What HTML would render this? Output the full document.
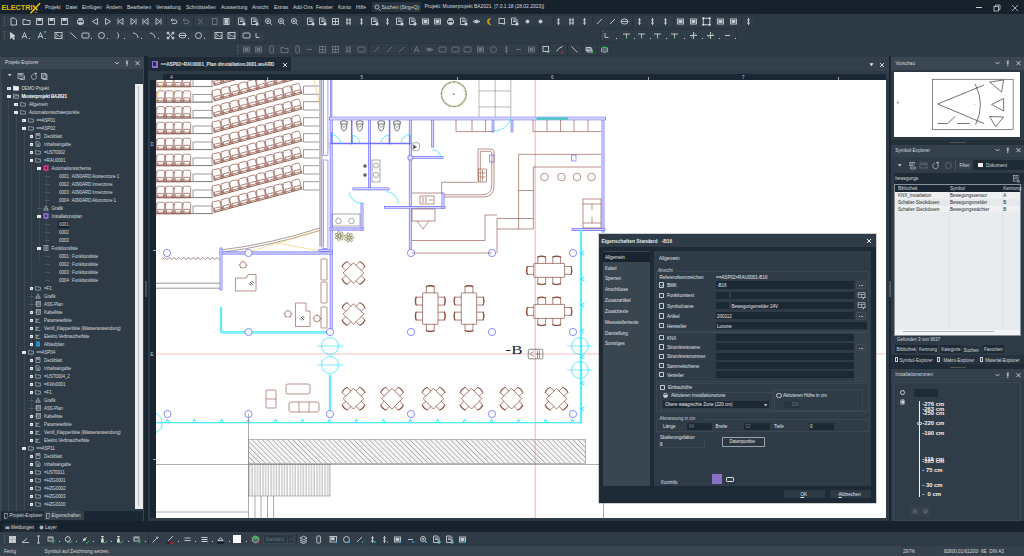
<!DOCTYPE html>
<html><head><meta charset="utf-8"><style>*{box-sizing:border-box;margin:0;padding:0}
html,body{width:1024px;height:556px;overflow:hidden;background:#17222d;font-family:"Liberation Sans",sans-serif;color:#d3d7db}
.a{position:absolute}
.t{position:absolute;white-space:nowrap;line-height:1}
b{font-weight:bold}
</style></head><body>
<div class="a" style="left:0px;top:0px;width:1024px;height:14px;background:#16212c;"></div>
<svg class="a" style="left:0;top:0" width="48" height="15" viewBox="0 0 48 15"><text x="1.5" y="10.3" font-family="Liberation Sans" font-weight="bold" font-size="6.6" fill="#d9bd08" textLength="31" lengthAdjust="spacingAndGlyphs">ELECTRI</text><path d="M30.5 13.2L40 3.2" stroke="#e8c800" stroke-width="1.5"/><path d="M33 5.2l4.5 5" stroke="#e8c800" stroke-width="1.3"/><rect x="34.5" y="12" width="3" height="0.8" fill="#a08a00"/></svg>
<div class="t" style="left:45px;top:4.60px;font-size:5.0px;color:#d6dade;">Projekt</div>
<div class="t" style="left:65.8px;top:4.60px;font-size:5.0px;color:#d6dade;">Datei</div>
<div class="t" style="left:82px;top:4.60px;font-size:5.0px;color:#d6dade;">Einfügen</div>
<div class="t" style="left:106px;top:4.60px;font-size:5.0px;color:#d6dade;">Ändern</div>
<div class="t" style="left:127px;top:4.60px;font-size:5.0px;color:#d6dade;">Bearbeiten</div>
<div class="t" style="left:156px;top:4.60px;font-size:5.0px;color:#d6dade;">Verwaltung</div>
<div class="t" style="left:186px;top:4.60px;font-size:5.0px;color:#d6dade;">Schnittstellen</div>
<div class="t" style="left:221px;top:4.60px;font-size:5.0px;color:#d6dade;">Auswertung</div>
<div class="t" style="left:252px;top:4.60px;font-size:5.0px;color:#d6dade;">Ansicht</div>
<div class="t" style="left:274px;top:4.60px;font-size:5.0px;color:#d6dade;">Extras</div>
<div class="t" style="left:293px;top:4.60px;font-size:5.0px;color:#d6dade;">Add-Ons</div>
<div class="t" style="left:316px;top:4.60px;font-size:5.0px;color:#d6dade;">Fenster</div>
<div class="t" style="left:338px;top:4.60px;font-size:5.0px;color:#d6dade;">Konto</div>
<div class="t" style="left:356px;top:4.60px;font-size:5.0px;color:#d6dade;">Hilfe</div>
<div class="a" style="left:372px;top:2px;width:49px;height:10px;background:#27333f;border-radius:1px;"></div>
<svg class="a" style="left:374px;top:4px" width="7" height="7" viewBox="0 0 7 7" fill="none" stroke="#c9ced3" stroke-width="0.8"><circle cx="3" cy="3" r="2"/><path d="M4.5 4.5l2 2"/></svg>
<div class="t" style="left:381.5px;top:4.60px;font-size:5.0px;color:#d6dade;">Suchen (Strg+Q)</div>
<div class="t" style="left:424.5px;top:4.63px;font-size:4.95px;color:#d6dade;">Projekt: Musterprojekt BA2021&nbsp; [7.0.1.18 (28.02.2023)]</div>
<div class="a" style="left:976px;top:6.8px;width:6px;height:0.8px;background:#c9ced3;"></div>
<svg class="a" style="left:993px;top:3.5px" width="8" height="8" viewBox="0 0 8 8" fill="none" stroke="#c9ced3" stroke-width="0.8"><rect x="1" y="2.5" width="4.5" height="4.5"/><path d="M2.5 2.5v-1.5h4.5v4.5h-1.5"/></svg>
<svg class="a" style="left:1011px;top:3.5px" width="8" height="8" viewBox="0 0 8 8" fill="none" stroke="#c9ced3" stroke-width="0.8"><path d="M1 1l6 6M7 1l-6 6"/></svg>
<div class="a" style="left:0px;top:14px;width:1024px;height:42px;background:#2d3a46;"></div>
<div class="a" style="left:0px;top:14.5px;width:756px;height:13.5px;background:#303d49;border:0.5px solid #28343f;"></div>
<div class="a" style="left:0px;top:28.5px;width:266px;height:13.5px;background:#303d49;border:0.5px solid #28343f;"></div>
<div class="a" style="left:600px;top:28.5px;width:137px;height:13.5px;background:#303d49;border:0.5px solid #28343f;"></div>
<div class="a" style="left:235px;top:42.5px;width:375.5px;height:13.5px;background:#303d49;border:0.5px solid #28343f;"></div>
<div class="a" style="left:4px;top:16.6px;width:0.8px;height:0.8px;background:#5a646d;"></div>
<div class="a" style="left:4px;top:18.6px;width:0.8px;height:0.8px;background:#5a646d;"></div>
<div class="a" style="left:4px;top:20.6px;width:0.8px;height:0.8px;background:#5a646d;"></div>
<div class="a" style="left:4px;top:22.6px;width:0.8px;height:0.8px;background:#5a646d;"></div>
<div class="a" style="left:4px;top:24.6px;width:0.8px;height:0.8px;background:#5a646d;"></div>
<div class="a" style="left:4px;top:31.1px;width:0.8px;height:0.8px;background:#5a646d;"></div>
<div class="a" style="left:4px;top:33.1px;width:0.8px;height:0.8px;background:#5a646d;"></div>
<div class="a" style="left:4px;top:35.1px;width:0.8px;height:0.8px;background:#5a646d;"></div>
<div class="a" style="left:4px;top:37.1px;width:0.8px;height:0.8px;background:#5a646d;"></div>
<div class="a" style="left:4px;top:39.1px;width:0.8px;height:0.8px;background:#5a646d;"></div>
<div class="a" style="left:602px;top:31.1px;width:0.8px;height:0.8px;background:#5a646d;"></div>
<div class="a" style="left:602px;top:33.1px;width:0.8px;height:0.8px;background:#5a646d;"></div>
<div class="a" style="left:602px;top:35.1px;width:0.8px;height:0.8px;background:#5a646d;"></div>
<div class="a" style="left:602px;top:37.1px;width:0.8px;height:0.8px;background:#5a646d;"></div>
<div class="a" style="left:602px;top:39.1px;width:0.8px;height:0.8px;background:#5a646d;"></div>
<div class="a" style="left:237px;top:45.1px;width:0.8px;height:0.8px;background:#5a646d;"></div>
<div class="a" style="left:237px;top:47.1px;width:0.8px;height:0.8px;background:#5a646d;"></div>
<div class="a" style="left:237px;top:49.1px;width:0.8px;height:0.8px;background:#5a646d;"></div>
<div class="a" style="left:237px;top:51.1px;width:0.8px;height:0.8px;background:#5a646d;"></div>
<div class="a" style="left:237px;top:53.1px;width:0.8px;height:0.8px;background:#5a646d;"></div>
<svg class="a" style="left:9.0px;top:16.7px" width="9" height="9" viewBox="0 0 9 9" fill="none" stroke="#c9ced3" stroke-width="0.9"><path d="M2 1h3.5l2 2v5h-5.5z"/></svg>
<svg class="a" style="left:22.0px;top:16.7px" width="9" height="9" viewBox="0 0 9 9" fill="none" stroke="#c9ced3" stroke-width="0.9"><path d="M1 2.5h2.5l1 1h3.5v4h-7z"/></svg>
<svg class="a" style="left:34.5px;top:16.7px" width="9" height="9" viewBox="0 0 9 9" fill="none" stroke="#c9ced3" stroke-width="0.9"><rect x="1.5" y="1.5" width="6" height="6"/><rect x="3" y="1.5" width="3" height="2" fill="#c9ced3"/></svg>
<svg class="a" style="left:47.0px;top:16.7px" width="9" height="9" viewBox="0 0 9 9" fill="none" stroke="#c9ced3" stroke-width="0.9"><rect x="1.5" y="1.5" width="6" height="6"/><rect x="3" y="1.5" width="3" height="2" fill="#c9ced3"/></svg>
<svg class="a" style="left:60.0px;top:16.7px" width="9" height="9" viewBox="0 0 9 9" fill="none" stroke="#c9ced3" stroke-width="0.9"><rect x="1.5" y="1.5" width="6" height="6"/><rect x="3" y="1.5" width="3" height="2" fill="#c9ced3"/></svg>
<svg class="a" style="left:75.5px;top:16.7px" width="9" height="9" viewBox="0 0 9 9" fill="none" stroke="#c9ced3" stroke-width="0.9"><rect x="1.5" y="3" width="6" height="3.5" rx="0.5"/><rect x="3" y="1.5" width="3" height="1.5"/><rect x="3" y="5.5" width="3" height="2"/></svg>
<svg class="a" style="left:90.5px;top:16.7px" width="9" height="9" viewBox="0 0 9 9" fill="none" stroke="#c9ced3" stroke-width="0.9"><path d="M6.5 1.5v6l-5-3z"/></svg>
<svg class="a" style="left:102.5px;top:16.7px" width="9" height="9" viewBox="0 0 9 9" fill="none" stroke="#c9ced3" stroke-width="0.9"><path d="M2.5 1.5v6l5-3z"/></svg>
<svg class="a" style="left:116.0px;top:16.7px" width="9" height="9" viewBox="0 0 9 9" fill="none" stroke="#c9ced3" stroke-width="0.9"><path d="M7 1.5v6l-4-3z M2 1.5v6"/></svg>
<svg class="a" style="left:128.5px;top:16.7px" width="9" height="9" viewBox="0 0 9 9" fill="none" stroke="#c9ced3" stroke-width="0.9"><path d="M2 1.5v6l4-3z M7 1.5v6"/></svg>
<svg class="a" style="left:141.0px;top:16.7px" width="9" height="9" viewBox="0 0 9 9" fill="none" stroke="#c9ced3" stroke-width="0.9"><path d="M7 1.5v6l-4-3z M2 1.5v6"/></svg>
<svg class="a" style="left:153.5px;top:16.7px" width="9" height="9" viewBox="0 0 9 9" fill="none" stroke="#c9ced3" stroke-width="0.9"><path d="M2 1.5v6l4-3z M7 1.5v6"/></svg>
<svg class="a" style="left:168.5px;top:16.7px" width="9" height="9" viewBox="0 0 9 9" fill="none" stroke="#c9ced3" stroke-width="0.9"><path d="M2 3h4a1.8 1.8 0 010 3.6h-3 M2 3l1.5-1.5 M2 3l1.5 1.5"/></svg>
<svg class="a" style="left:181.0px;top:16.7px" width="9" height="9" viewBox="0 0 9 9" fill="none" stroke="#6d7780" stroke-width="0.9"><path d="M2 3h4a1.8 1.8 0 010 3.6h-3 M2 3l1.5-1.5 M2 3l1.5 1.5"/></svg>
<svg class="a" style="left:196.0px;top:16.7px" width="9" height="9" viewBox="0 0 9 9" fill="none" stroke="#6d7780" stroke-width="0.9"><path d="M2 1.5l5 6 M7 1.5l-5 6"/></svg>
<svg class="a" style="left:209.5px;top:16.7px" width="9" height="9" viewBox="0 0 9 9" fill="none" stroke="#6d7780" stroke-width="0.9"><rect x="2.5" y="1.5" width="4.5" height="6"/></svg>
<svg class="a" style="left:221.5px;top:16.7px" width="9" height="9" viewBox="0 0 9 9" fill="none" stroke="#c9ced3" stroke-width="0.9"><rect x="2" y="1.5" width="5" height="6"/><rect x="3.3" y="2.8" width="2.4" height="3.4" fill="#c9ced3"/></svg>
<svg class="a" style="left:237.0px;top:16.7px" width="9" height="9" viewBox="0 0 9 9" fill="none" stroke="#c9ced3" stroke-width="0.9"><path d="M1.5 1h4l1.5 1.5v5h-5.5z M3 3h3 M3 4.5h3"/><circle cx="7" cy="7" r="1.2" fill="#c9ced3"/></svg>
<svg class="a" style="left:249.5px;top:16.7px" width="9" height="9" viewBox="0 0 9 9" fill="none" stroke="#c9ced3" stroke-width="0.9"><path d="M1.5 1h4l1.5 1.5v5h-5.5z M3 3h3 M3 4.5h3"/><circle cx="7" cy="7" r="1.2" fill="#c9ced3"/></svg>
<svg class="a" style="left:264.0px;top:16.7px" width="9" height="9" viewBox="0 0 9 9" fill="none" stroke="#c9ced3" stroke-width="0.9"><circle cx="4" cy="4" r="2.5"/><path d="M5.8 5.8l2 2 M2.8 4h2.4 M4 2.8v2.4"/></svg>
<svg class="a" style="left:277.0px;top:16.7px" width="9" height="9" viewBox="0 0 9 9" fill="none" stroke="#c9ced3" stroke-width="0.9"><circle cx="4" cy="4" r="2.5"/><path d="M5.8 5.8l2 2 M2.8 4h2.4 M4 2.8v2.4"/></svg>
<svg class="a" style="left:290.0px;top:16.7px" width="9" height="9" viewBox="0 0 9 9" fill="none" stroke="#c9ced3" stroke-width="0.9"><circle cx="4" cy="4" r="2.5"/><path d="M5.8 5.8l2 2 M2.8 4h2.4 M4 2.8v2.4"/></svg>
<svg class="a" style="left:305.5px;top:16.7px" width="9" height="9" viewBox="0 0 9 9" fill="none" stroke="#c9ced3" stroke-width="0.9"><path d="M1.5 1h4l1.5 1.5v5h-5.5z M3 3h3 M3 4.5h3"/><circle cx="7" cy="7" r="1.2" fill="#c9ced3"/></svg>
<svg class="a" style="left:318.0px;top:16.7px" width="9" height="9" viewBox="0 0 9 9" fill="none" stroke="#c9ced3" stroke-width="0.9"><path d="M1.5 1h4l1.5 1.5v5h-5.5z M3 3h3 M3 4.5h3"/><circle cx="7" cy="7" r="1.2" fill="#c9ced3"/></svg>
<svg class="a" style="left:331.0px;top:16.7px" width="9" height="9" viewBox="0 0 9 9" fill="none" stroke="#c9ced3" stroke-width="0.9"><rect x="1.5" y="1.5" width="6" height="6"/><path d="M1.5 4.5h6 M4.5 1.5v6"/></svg>
<svg class="a" style="left:344.0px;top:16.7px" width="9" height="9" viewBox="0 0 9 9" fill="none" stroke="#c9ced3" stroke-width="0.9"><path d="M3 1v7 M6 1v7 M2 3h5 M2 6h5"/></svg>
<svg class="a" style="left:356.5px;top:16.7px" width="9" height="9" viewBox="0 0 9 9" fill="none" stroke="#c9ced3" stroke-width="0.9"><path d="M4.5 1v7 M3 3h3 M3 6h3"/></svg>
<svg class="a" style="left:369.5px;top:16.7px" width="9" height="9" viewBox="0 0 9 9" fill="none" stroke="#c9ced3" stroke-width="0.9"><path d="M1.5 1h4l1.5 1.5v5h-5.5z M3 3h3 M3 4.5h3"/><circle cx="7" cy="7" r="1.2" fill="#c9ced3"/></svg>
<svg class="a" style="left:382.5px;top:16.7px" width="9" height="9" viewBox="0 0 9 9" fill="none" stroke="#c9ced3" stroke-width="0.9"><path d="M4.5 1v7 M3 3h3 M3 6h3"/></svg>
<svg class="a" style="left:395.0px;top:16.7px" width="9" height="9" viewBox="0 0 9 9" fill="none" stroke="#c9ced3" stroke-width="0.9"><path d="M1.5 1h4l1.5 1.5v5h-5.5z M3 3h3 M3 4.5h3"/><circle cx="7" cy="7" r="1.2" fill="#c9ced3"/></svg>
<svg class="a" style="left:407.5px;top:16.7px" width="9" height="9" viewBox="0 0 9 9" fill="none" stroke="#c9ced3" stroke-width="0.9"><path d="M1.5 1h4l1.5 1.5v5h-5.5z M3 3h3 M3 4.5h3"/><circle cx="7" cy="7" r="1.2" fill="#c9ced3"/></svg>
<svg class="a" style="left:420.5px;top:16.7px" width="9" height="9" viewBox="0 0 9 9" fill="none" stroke="#c9ced3" stroke-width="0.9"><rect x="1.5" y="2" width="6" height="5"/><rect x="3" y="3.5" width="3" height="2" fill="#c9ced3"/></svg>
<svg class="a" style="left:433.0px;top:16.7px" width="9" height="9" viewBox="0 0 9 9" fill="none" stroke="#c9ced3" stroke-width="0.9"><rect x="1.5" y="2" width="6" height="5"/><rect x="3" y="3.5" width="3" height="2" fill="#c9ced3"/></svg>
<svg class="a" style="left:446.0px;top:16.7px" width="9" height="9" viewBox="0 0 9 9" fill="none" stroke="#c9ced3" stroke-width="0.9"><rect x="1.5" y="3" width="6" height="3.5" rx="0.5"/><rect x="3" y="1.5" width="3" height="1.5"/><rect x="3" y="5.5" width="3" height="2"/></svg>
<svg class="a" style="left:459.0px;top:16.7px" width="9" height="9" viewBox="0 0 9 9" fill="none" stroke="#c9ced3" stroke-width="0.9"><path d="M1.5 1h4l1.5 1.5v5h-5.5z M3 3h3 M3 4.5h3"/><circle cx="7" cy="7" r="1.2" fill="#c9ced3"/></svg>
<svg class="a" style="left:471.5px;top:16.7px" width="9" height="9" viewBox="0 0 9 9" fill="none" stroke="#c9ced3" stroke-width="0.9"><path d="M1 4.5q3.5-3 7 0q-3.5 3-7 0z"/><circle cx="4.5" cy="4.5" r="1" fill="#c9ced3"/></svg>
<svg class="a" style="left:484.5px;top:16.7px" width="9" height="9" viewBox="0 0 9 9" fill="none" stroke="#c8a000" stroke-width="0.9"><path d="M5.5 1.5a3 3 0 100 6a3.5 3.5 0 010-6z" fill="#c8a000"/></svg>
<svg class="a" style="left:497.5px;top:16.7px" width="9" height="9" viewBox="0 0 9 9" fill="none" stroke="#c9ced3" stroke-width="0.9"><rect x="1" y="1.5" width="5.5" height="5"/><path d="M5 7l1.2 1 2-2.5" stroke="#3bb54a"/></svg>
<svg class="a" style="left:510.0px;top:16.7px" width="9" height="9" viewBox="0 0 9 9" fill="none" stroke="#c9ced3" stroke-width="0.9"><path d="M1.5 1h4l1.5 1.5v5h-5.5z M3 3h3 M3 4.5h3"/><circle cx="7" cy="7" r="1.2" fill="#c9ced3"/></svg>
<svg class="a" style="left:523.0px;top:16.7px" width="9" height="9" viewBox="0 0 9 9" fill="none" stroke="#c9ced3" stroke-width="0.9"><circle cx="4.5" cy="4.5" r="1.5" fill="#c9ced3"/></svg>
<svg class="a" style="left:535.5px;top:16.7px" width="9" height="9" viewBox="0 0 9 9" fill="none" stroke="#c9ced3" stroke-width="0.9"><circle cx="4.5" cy="4.5" r="1.5" fill="#c9ced3"/></svg>
<svg class="a" style="left:554.0px;top:16.7px" width="9" height="9" viewBox="0 0 9 9" fill="none" stroke="#c9ced3" stroke-width="0.9"><path d="M4.5 1v7 M3 3h3 M3 6h3"/></svg>
<svg class="a" style="left:567.0px;top:16.7px" width="9" height="9" viewBox="0 0 9 9" fill="none" stroke="#c9ced3" stroke-width="0.9"><path d="M3 1v7 M6 1v7 M2 3h5 M2 6h5"/></svg>
<svg class="a" style="left:579.5px;top:16.7px" width="9" height="9" viewBox="0 0 9 9" fill="none" stroke="#c9ced3" stroke-width="0.9"><path d="M4.5 1v7 M3 3h3 M3 6h3"/></svg>
<svg class="a" style="left:594.5px;top:16.7px" width="9" height="9" viewBox="0 0 9 9" fill="none" stroke="#c9ced3" stroke-width="0.9"><path d="M2 7l5-5"/></svg>
<svg class="a" style="left:607.5px;top:16.7px" width="9" height="9" viewBox="0 0 9 9" fill="none" stroke="#c9ced3" stroke-width="0.9"><path d="M2 7l5-5"/></svg>
<svg class="a" style="left:620.0px;top:16.7px" width="9" height="9" viewBox="0 0 9 9" fill="none" stroke="#c9ced3" stroke-width="0.9"><ellipse cx="4.5" cy="4.5" rx="3.5" ry="2.5"/><path d="M1 4.5h7"/></svg>
<svg class="a" style="left:634.5px;top:16.7px" width="9" height="9" viewBox="0 0 9 9" fill="none" stroke="#c9ced3" stroke-width="0.9"><path d="M4.5 1v7 M3 3h3 M3 6h3"/></svg>
<svg class="a" style="left:647.5px;top:16.7px" width="9" height="9" viewBox="0 0 9 9" fill="none" stroke="#c9ced3" stroke-width="0.9"><path d="M4.5 1v7 M3 3h3 M3 6h3"/></svg>
<svg class="a" style="left:660.5px;top:16.7px" width="9" height="9" viewBox="0 0 9 9" fill="none" stroke="#c9ced3" stroke-width="0.9"><path d="M4.5 1v7 M3 3h3 M3 6h3"/></svg>
<svg class="a" style="left:675.5px;top:16.7px" width="9" height="9" viewBox="0 0 9 9" fill="none" stroke="#c9ced3" stroke-width="0.9"><rect x="1.5" y="2" width="6" height="5"/><rect x="3" y="3.5" width="3" height="2" fill="#c9ced3"/></svg>
<svg class="a" style="left:688.5px;top:16.7px" width="9" height="9" viewBox="0 0 9 9" fill="none" stroke="#c9ced3" stroke-width="0.9"><rect x="1.5" y="2" width="6" height="5"/><rect x="3" y="3.5" width="3" height="2" fill="#c9ced3"/></svg>
<svg class="a" style="left:701.5px;top:16.7px" width="9" height="9" viewBox="0 0 9 9" fill="none" stroke="#c9ced3" stroke-width="0.9"><rect x="1.2" y="1.2" width="6.6" height="6.6" stroke="#e8ebee" stroke-width="0.8"/><rect x="0.5" y="0.5" width="1.6" height="1.6" fill="#fff" stroke="none"/><rect x="6.9" y="0.5" width="1.6" height="1.6" fill="#fff" stroke="none"/><rect x="0.5" y="6.9" width="1.6" height="1.6" fill="#fff" stroke="none"/><rect x="6.9" y="6.9" width="1.6" height="1.6" fill="#fff" stroke="none"/></svg>
<svg class="a" style="left:716.0px;top:16.7px" width="9" height="9" viewBox="0 0 9 9" fill="none" stroke="#c9ced3" stroke-width="0.9"><rect x="1.5" y="2" width="6" height="5"/><rect x="3" y="3.5" width="3" height="2" fill="#c9ced3"/></svg>
<svg class="a" style="left:728.5px;top:16.7px" width="9" height="9" viewBox="0 0 9 9" fill="none" stroke="#c9ced3" stroke-width="0.9"><rect x="1.5" y="2" width="6" height="5"/><rect x="3" y="3.5" width="3" height="2" fill="#c9ced3"/></svg>
<svg class="a" style="left:743.5px;top:16.7px" width="9" height="9" viewBox="0 0 9 9" fill="none" stroke="#c9ced3" stroke-width="0.9"><path d="M4.5 1v7 M3 3h3 M3 6h3"/></svg>
<div class="a" style="left:74px;top:16px;width:1px;height:10px;background:#24303c;"></div>
<div class="a" style="left:88px;top:16px;width:1px;height:10px;background:#24303c;"></div>
<div class="a" style="left:166px;top:16px;width:1px;height:10px;background:#24303c;"></div>
<div class="a" style="left:193px;top:16px;width:1px;height:10px;background:#24303c;"></div>
<div class="a" style="left:234px;top:16px;width:1px;height:10px;background:#24303c;"></div>
<div class="a" style="left:262px;top:16px;width:1px;height:10px;background:#24303c;"></div>
<div class="a" style="left:302px;top:16px;width:1px;height:10px;background:#24303c;"></div>
<div class="a" style="left:553px;top:16px;width:1px;height:10px;background:#24303c;"></div>
<div class="a" style="left:592px;top:16px;width:1px;height:10px;background:#24303c;"></div>
<div class="a" style="left:632px;top:16px;width:1px;height:10px;background:#24303c;"></div>
<div class="a" style="left:673px;top:16px;width:1px;height:10px;background:#24303c;"></div>
<div class="a" style="left:713px;top:16px;width:1px;height:10px;background:#24303c;"></div>
<div class="a" style="left:741px;top:16px;width:1px;height:10px;background:#24303c;"></div>
<svg class="a" style="left:7.5px;top:31.299999999999997px" width="9" height="9" viewBox="0 0 9 9" fill="none" stroke="#c9ced3" stroke-width="0.9"><path d="M2.5 1.5l4.5 3.5-2 .5 1.5 2.5-1 .5-1.5-2.5-1.5 1.5z" fill="#c9ced3"/></svg>
<svg class="a" style="left:19.5px;top:31.299999999999997px" width="9" height="9" viewBox="0 0 9 9" fill="none" stroke="#c9ced3" stroke-width="0.9"><path d="M2 7.5l2.5-6 2.5 6 M3 5.5h3"/></svg>
<svg class="a" style="left:36.0px;top:31.299999999999997px" width="9" height="9" viewBox="0 0 9 9" fill="none" stroke="#c9ced3" stroke-width="0.9"><path d="M2 7.5l2.5-6 2.5 6 M3 5.5h3"/></svg>
<svg class="a" style="left:53.5px;top:31.299999999999997px" width="9" height="9" viewBox="0 0 9 9" fill="none" stroke="#c9ced3" stroke-width="0.9"><rect x="1" y="1.5" width="7" height="6"/><path d="M2 6.5l2-2.5 1.5 1.5 1-1 1 2" stroke-width="0.7"/><rect x="2" y="2.5" width="1.3" height="1.3" fill="#c9ced3" stroke="none"/></svg>
<svg class="a" style="left:68.5px;top:31.299999999999997px" width="9" height="9" viewBox="0 0 9 9" fill="none" stroke="#c9ced3" stroke-width="0.9"><path d="M1.5 1.5l6 6"/></svg>
<svg class="a" style="left:80.5px;top:31.299999999999997px" width="9" height="9" viewBox="0 0 9 9" fill="none" stroke="#c9ced3" stroke-width="0.9"><rect x="1" y="2" width="7" height="5" rx="1"/></svg>
<svg class="a" style="left:97.0px;top:31.299999999999997px" width="9" height="9" viewBox="0 0 9 9" fill="none" stroke="#c9ced3" stroke-width="0.9"><circle cx="4.5" cy="4.5" r="3"/></svg>
<svg class="a" style="left:114.0px;top:31.299999999999997px" width="9" height="9" viewBox="0 0 9 9" fill="none" stroke="#c9ced3" stroke-width="0.9"><path d="M3 1.5a3.5 3.5 0 010 6"/></svg>
<svg class="a" style="left:130.5px;top:31.299999999999997px" width="9" height="9" viewBox="0 0 9 9" fill="none" stroke="#c9ced3" stroke-width="0.9"><path d="M2 2a5 5 0 015 5"/></svg>
<svg class="a" style="left:147.5px;top:31.299999999999997px" width="9" height="9" viewBox="0 0 9 9" fill="none" stroke="#c9ced3" stroke-width="0.9"><path d="M2 2a5 5 0 015 5"/></svg>
<svg class="a" style="left:165.5px;top:31.299999999999997px" width="9" height="9" viewBox="0 0 9 9" fill="none" stroke="#c9ced3" stroke-width="0.9"><path d="M2 2l5 5 M7 2l-5 5"/><circle cx="2" cy="2" r="1" fill="#c9ced3"/><circle cx="7" cy="2" r="1" fill="#c9ced3"/><circle cx="2" cy="7" r="1" fill="#c9ced3"/><circle cx="7" cy="7" r="1" fill="#c9ced3"/></svg>
<svg class="a" style="left:177.5px;top:31.299999999999997px" width="9" height="9" viewBox="0 0 9 9" fill="none" stroke="#c9ced3" stroke-width="0.9"><ellipse cx="4.5" cy="4.5" rx="3.5" ry="2.5"/><path d="M1 4.5h7"/></svg>
<svg class="a" style="left:194.0px;top:31.299999999999997px" width="9" height="9" viewBox="0 0 9 9" fill="none" stroke="#c9ced3" stroke-width="0.9"><circle cx="4.5" cy="4.5" r="3"/></svg>
<svg class="a" style="left:214.0px;top:31.299999999999997px" width="9" height="9" viewBox="0 0 9 9" fill="none" stroke="#c9ced3" stroke-width="0.9"><rect x="1" y="1.5" width="7" height="6"/><path d="M2 6.5l2-2.5 1.5 1.5 1-1 1 2" stroke-width="0.7"/><rect x="2" y="2.5" width="1.3" height="1.3" fill="#c9ced3" stroke="none"/></svg>
<svg class="a" style="left:227.0px;top:31.299999999999997px" width="9" height="9" viewBox="0 0 9 9" fill="none" stroke="#c9ced3" stroke-width="0.9"><rect x="1" y="1.5" width="7" height="6"/><path d="M2 6.5l2-2.5 1.5 1.5 1-1 1 2" stroke-width="0.7"/><rect x="2" y="2.5" width="1.3" height="1.3" fill="#c9ced3" stroke="none"/></svg>
<svg class="a" style="left:241.5px;top:31.299999999999997px" width="9" height="9" viewBox="0 0 9 9" fill="none" stroke="#c9ced3" stroke-width="0.9"><rect x="1" y="2" width="7" height="5" rx="1"/></svg>
<svg class="a" style="left:253.5px;top:31.299999999999997px" width="9" height="9" viewBox="0 0 9 9" fill="none" stroke="#c9ced3" stroke-width="0.9"><path d="M2 2v4.5h3.5"/></svg>
<div class="a" style="left:28.5px;top:37.7px;width:1.2px;height:1.2px;background:#c9ced3;"></div>
<div class="a" style="left:45px;top:37.7px;width:1.2px;height:1.2px;background:#c9ced3;"></div>
<div class="a" style="left:90.5px;top:37.7px;width:1.2px;height:1.2px;background:#c9ced3;"></div>
<div class="a" style="left:107px;top:37.7px;width:1.2px;height:1.2px;background:#c9ced3;"></div>
<div class="a" style="left:124px;top:37.7px;width:1.2px;height:1.2px;background:#c9ced3;"></div>
<div class="a" style="left:141px;top:37.7px;width:1.2px;height:1.2px;background:#c9ced3;"></div>
<div class="a" style="left:158px;top:37.7px;width:1.2px;height:1.2px;background:#c9ced3;"></div>
<div class="a" style="left:187.5px;top:37.7px;width:1.2px;height:1.2px;background:#c9ced3;"></div>
<div class="a" style="left:204px;top:37.7px;width:1.2px;height:1.2px;background:#c9ced3;"></div>
<div class="a" style="left:44px;top:31px;width:1.6px;height:1.6px;background:#3ab0e0;border-radius:1px;"></div>
<div class="a" style="left:66px;top:30px;width:1px;height:11px;background:#24303c;"></div>
<div class="a" style="left:210px;top:30px;width:1px;height:11px;background:#24303c;"></div>
<div class="a" style="left:239px;top:30px;width:1px;height:11px;background:#24303c;"></div>
<svg class="a" style="left:602.5px;top:31.299999999999997px" width="9" height="9" viewBox="0 0 9 9" fill="none" stroke="#c9ced3" stroke-width="0.9"><path d="M2 2v4.5h3.5"/></svg>
<svg class="a" style="left:621.5px;top:31.299999999999997px" width="9" height="9" viewBox="0 0 9 9" fill="none" stroke="#c9ced3" stroke-width="0.9"><path d="M1 3h7 M4.5 3v4"/><circle cx="4.5" cy="7" r="0.8" fill="#3bb54a" stroke="none"/></svg>
<svg class="a" style="left:636.5px;top:31.299999999999997px" width="9" height="9" viewBox="0 0 9 9" fill="none" stroke="#c9ced3" stroke-width="0.9"><path d="M1 3h7 M4.5 3v4"/><circle cx="4.5" cy="7" r="0.8" fill="#3bb54a" stroke="none"/></svg>
<svg class="a" style="left:652.5px;top:31.299999999999997px" width="9" height="9" viewBox="0 0 9 9" fill="none" stroke="#c9ced3" stroke-width="0.9"><path d="M1 3h7 M4.5 3v4"/><circle cx="4.5" cy="7" r="0.8" fill="#3bb54a" stroke="none"/></svg>
<svg class="a" style="left:669.5px;top:31.299999999999997px" width="9" height="9" viewBox="0 0 9 9" fill="none" stroke="#c9ced3" stroke-width="0.9"><path d="M1 3h7 M4.5 3v4"/><circle cx="4.5" cy="7" r="0.8" fill="#3bb54a" stroke="none"/></svg>
<svg class="a" style="left:688.5px;top:31.299999999999997px" width="9" height="9" viewBox="0 0 9 9" fill="none" stroke="#c9ced3" stroke-width="0.9"><path d="M4.5 1v7 M1 4.5h7"/><circle cx="6.5" cy="3" r="0.8" fill="#3bb54a" stroke="none"/><circle cx="2.5" cy="6" r="0.8" fill="#3bb54a" stroke="none"/></svg>
<svg class="a" style="left:705.5px;top:31.299999999999997px" width="9" height="9" viewBox="0 0 9 9" fill="none" stroke="#c9ced3" stroke-width="0.9"><path d="M4.5 1v7 M1 4.5h7"/><circle cx="6.5" cy="3" r="0.8" fill="#3bb54a" stroke="none"/><circle cx="2.5" cy="6" r="0.8" fill="#3bb54a" stroke="none"/></svg>
<svg class="a" style="left:722.5px;top:31.299999999999997px" width="9" height="9" viewBox="0 0 9 9" fill="none" stroke="#c9ced3" stroke-width="0.9"><path d="M2 4.5h5"/></svg>
<div class="a" style="left:616px;top:37.7px;width:1.2px;height:1.2px;background:#c9ced3;"></div>
<div class="a" style="left:634px;top:37.7px;width:1.2px;height:1.2px;background:#c9ced3;"></div>
<div class="a" style="left:650px;top:37.7px;width:1.2px;height:1.2px;background:#c9ced3;"></div>
<div class="a" style="left:666px;top:37.7px;width:1.2px;height:1.2px;background:#c9ced3;"></div>
<div class="a" style="left:684px;top:37.7px;width:1.2px;height:1.2px;background:#c9ced3;"></div>
<div class="a" style="left:702px;top:37.7px;width:1.2px;height:1.2px;background:#c9ced3;"></div>
<div class="a" style="left:719px;top:37.7px;width:1.2px;height:1.2px;background:#c9ced3;"></div>
<div class="a" style="left:735px;top:37.7px;width:1.2px;height:1.2px;background:#c9ced3;"></div>
<svg class="a" style="left:241.5px;top:45.3px" width="9" height="9" viewBox="0 0 9 9" fill="none" stroke="#6d7780" stroke-width="0.9"><rect x="1.5" y="2" width="6" height="5"/><rect x="3" y="3.5" width="3" height="2" fill="#6d7780"/></svg>
<svg class="a" style="left:253.5px;top:45.3px" width="9" height="9" viewBox="0 0 9 9" fill="none" stroke="#6d7780" stroke-width="0.9"><rect x="1.5" y="2" width="6" height="5"/><rect x="3" y="3.5" width="3" height="2" fill="#6d7780"/></svg>
<svg class="a" style="left:267.3px;top:45.3px" width="9" height="9" viewBox="0 0 9 9" fill="none" stroke="#6d7780" stroke-width="0.9"><rect x="2.8" y="1" width="3.6" height="7" rx="0.8"/></svg>
<svg class="a" style="left:279.5px;top:45.3px" width="9" height="9" viewBox="0 0 9 9" fill="none" stroke="#6d7780" stroke-width="0.9"><path d="M1 2.5h2.5l1 1h3.5v4h-7z"/></svg>
<svg class="a" style="left:292.7px;top:45.3px" width="9" height="9" viewBox="0 0 9 9" fill="none" stroke="#6d7780" stroke-width="0.9"><rect x="2.8" y="1" width="3.6" height="7" rx="0.8"/></svg>
<svg class="a" style="left:305.4px;top:45.3px" width="9" height="9" viewBox="0 0 9 9" fill="none" stroke="#6d7780" stroke-width="0.9"><path d="M2 4.5h5"/></svg>
<svg class="a" style="left:318.1px;top:45.3px" width="9" height="9" viewBox="0 0 9 9" fill="none" stroke="#6d7780" stroke-width="0.9"><rect x="1.5" y="1.5" width="6" height="6"/><path d="M1.5 4.5h6 M4.5 1.5v6"/></svg>
<svg class="a" style="left:330.8px;top:45.3px" width="9" height="9" viewBox="0 0 9 9" fill="none" stroke="#6d7780" stroke-width="0.9"><rect x="1.5" y="1.5" width="6" height="6"/><path d="M1.5 4.5h6 M4.5 1.5v6"/></svg>
<svg class="a" style="left:343.5px;top:45.3px" width="9" height="9" viewBox="0 0 9 9" fill="none" stroke="#6d7780" stroke-width="0.9"><path d="M3 1v7 M6 1v7 M2 3h5 M2 6h5"/></svg>
<svg class="a" style="left:356.8px;top:45.3px" width="9" height="9" viewBox="0 0 9 9" fill="none" stroke="#6d7780" stroke-width="0.9"><rect x="1" y="2" width="7" height="5" rx="1"/></svg>
<svg class="a" style="left:372.3px;top:45.3px" width="9" height="9" viewBox="0 0 9 9" fill="none" stroke="#6d7780" stroke-width="0.9"><path d="M2 7l5-5"/></svg>
<svg class="a" style="left:385.0px;top:45.3px" width="9" height="9" viewBox="0 0 9 9" fill="none" stroke="#6d7780" stroke-width="0.9"><path d="M2 7l5-5"/></svg>
<svg class="a" style="left:396.5px;top:45.3px" width="9" height="9" viewBox="0 0 9 9" fill="none" stroke="#6d7780" stroke-width="0.9"><path d="M2 7l5-5"/></svg>
<svg class="a" style="left:411.8px;top:45.3px" width="9" height="9" viewBox="0 0 9 9" fill="none" stroke="#6d7780" stroke-width="0.9"><path d="M2 7.5l2.5-6 2.5 6 M3 5.5h3"/></svg>
<svg class="a" style="left:425.1px;top:45.3px" width="9" height="9" viewBox="0 0 9 9" fill="none" stroke="#6d7780" stroke-width="0.9"><path d="M1 4.5q3.5-3 7 0q-3.5 3-7 0z"/><circle cx="4.5" cy="4.5" r="1" fill="#6d7780"/></svg>
<svg class="a" style="left:437.8px;top:45.3px" width="9" height="9" viewBox="0 0 9 9" fill="none" stroke="#6d7780" stroke-width="0.9"><rect x="1" y="2" width="7" height="5" rx="1"/></svg>
<svg class="a" style="left:450.5px;top:45.3px" width="9" height="9" viewBox="0 0 9 9" fill="none" stroke="#6d7780" stroke-width="0.9"><rect x="1" y="2" width="7" height="5" rx="1"/></svg>
<svg class="a" style="left:463.2px;top:45.3px" width="9" height="9" viewBox="0 0 9 9" fill="none" stroke="#6d7780" stroke-width="0.9"><rect x="1" y="2" width="7" height="5" rx="1"/></svg>
<svg class="a" style="left:475.8px;top:45.3px" width="9" height="9" viewBox="0 0 9 9" fill="none" stroke="#6d7780" stroke-width="0.9"><rect x="1.5" y="2" width="6" height="5"/><rect x="3" y="3.5" width="3" height="2" fill="#6d7780"/></svg>
<svg class="a" style="left:488.5px;top:45.3px" width="9" height="9" viewBox="0 0 9 9" fill="none" stroke="#6d7780" stroke-width="0.9"><circle cx="4.5" cy="4.5" r="3"/></svg>
<svg class="a" style="left:501.9px;top:45.3px" width="9" height="9" viewBox="0 0 9 9" fill="none" stroke="#6d7780" stroke-width="0.9"><path d="M4.5 1v7 M3 3h3 M3 6h3"/></svg>
<svg class="a" style="left:514.3px;top:45.3px" width="9" height="9" viewBox="0 0 9 9" fill="none" stroke="#6d7780" stroke-width="0.9"><path d="M2 4.5h5"/></svg>
<svg class="a" style="left:527.2px;top:45.3px" width="9" height="9" viewBox="0 0 9 9" fill="none" stroke="#6d7780" stroke-width="0.9"><rect x="1.5" y="2" width="6" height="5"/><rect x="3" y="3.5" width="3" height="2" fill="#6d7780"/></svg>
<svg class="a" style="left:542.4px;top:45.3px" width="9" height="9" viewBox="0 0 9 9" fill="none" stroke="#c9ced3" stroke-width="0.9"><rect x="1" y="1.5" width="5.5" height="5"/><path d="M5 7l1.2 1 2-2.5" stroke="#3bb54a"/></svg>
<svg class="a" style="left:555.3px;top:45.3px" width="9" height="9" viewBox="0 0 9 9" fill="none" stroke="#c9ced3" stroke-width="0.9"><path d="M1.5 6.5q2-4 6-5"/><circle cx="7.3" cy="7.5" r="0.9" fill="#d03030" stroke="none"/></svg>
<svg class="a" style="left:569.9px;top:45.3px" width="9" height="9" viewBox="0 0 9 9" fill="none" stroke="#c9ced3" stroke-width="0.9"><path d="M1.5 1.5l6 6"/></svg>
<svg class="a" style="left:584.5px;top:45.3px" width="9" height="9" viewBox="0 0 9 9" fill="none" stroke="#c9ced3" stroke-width="0.9"><path d="M1 2.5h5v3h-5z M2 4h5v3h-5z"/><circle cx="7.3" cy="7.3" r="1" fill="#3bb54a" stroke="none"/></svg>
<svg class="a" style="left:599.8px;top:45.3px" width="9" height="9" viewBox="0 0 9 9" fill="none" stroke="#c9ced3" stroke-width="0.9"><ellipse cx="4.5" cy="3" rx="3" ry="1.5" fill="#3bb54a" stroke="none"/><path d="M1.5 3v3.5q3 2 6 0V3" fill="#5a6a70" stroke="#9aa"/></svg>
<div class="a" style="left:368px;top:44px;width:1px;height:11px;background:#24303c;"></div>
<div class="a" style="left:409px;top:44px;width:1px;height:11px;background:#24303c;"></div>
<div class="a" style="left:539.3px;top:44px;width:1px;height:11px;background:#24303c;"></div>
<div class="a" style="left:567.4px;top:44px;width:1px;height:11px;background:#24303c;"></div>
<div class="a" style="left:582px;top:44px;width:1px;height:11px;background:#24303c;"></div>
<div class="a" style="left:597.3px;top:44px;width:1px;height:11px;background:#24303c;"></div>
<div class="a" style="left:0px;top:521px;width:1024px;height:11px;background:#17222d;"></div>
<div class="a" style="left:3px;top:523px;width:32px;height:8.5px;background:#1f2b37;"></div>
<div class="a" style="left:36px;top:523px;width:22px;height:8.5px;background:#1b2733;"></div>
<svg class="a" style="left:5px;top:524.5px" width="5" height="5" viewBox="0 0 5 5"><rect x="0.5" y="1.5" width="4" height="2.5" fill="#aab2ba"/></svg>
<div class="t" style="left:11px;top:525.86px;font-size:4.7px;color:#d6dade;">Meldungen</div>
<svg class="a" style="left:39px;top:524.5px" width="5" height="5" viewBox="0 0 5 5"><circle cx="2.5" cy="2.5" r="2" fill="#aab2ba"/></svg>
<div class="t" style="left:45px;top:525.86px;font-size:4.7px;color:#d6dade;">Layer</div>
<div class="a" style="left:0px;top:532px;width:1024px;height:14px;background:#2e3b47;"></div>
<div class="a" style="left:0px;top:532px;width:373px;height:14px;background:#323f4b;"></div>
<div class="a" style="left:4px;top:534.6px;width:0.8px;height:0.8px;background:#5a646d;"></div>
<div class="a" style="left:4px;top:536.6px;width:0.8px;height:0.8px;background:#5a646d;"></div>
<div class="a" style="left:4px;top:538.6px;width:0.8px;height:0.8px;background:#5a646d;"></div>
<div class="a" style="left:4px;top:540.6px;width:0.8px;height:0.8px;background:#5a646d;"></div>
<div class="a" style="left:4px;top:542.6px;width:0.8px;height:0.8px;background:#5a646d;"></div>
<svg class="a" style="left:7.5px;top:534.8px" width="9" height="9" viewBox="0 0 9 9" fill="none" stroke="#c9ced3" stroke-width="0.9"><rect x="1.5" y="1.5" width="2.6" height="2.6" fill="#c9ced3"/><rect x="4.9" y="1.5" width="2.6" height="2.6" fill="#c9ced3"/><rect x="1.5" y="4.9" width="2.6" height="2.6" fill="#c9ced3"/><rect x="4.9" y="4.9" width="2.6" height="2.6" fill="#c9ced3"/></svg>
<svg class="a" style="left:21.0px;top:534.8px" width="9" height="9" viewBox="0 0 9 9" fill="none" stroke="#c9ced3" stroke-width="0.9"><path d="M1 7.5h7 M1 7.5l5-4"/></svg>
<svg class="a" style="left:33.5px;top:534.8px" width="9" height="9" viewBox="0 0 9 9" fill="none" stroke="#c9ced3" stroke-width="0.9"><path d="M4.5 1v7 M3 1h3 M3 8h3"/></svg>
<svg class="a" style="left:47.0px;top:534.8px" width="9" height="9" viewBox="0 0 9 9" fill="none" stroke="#c9ced3" stroke-width="0.9"><rect x="1" y="2" width="5" height="4"/><path d="M2 3h3" /><path d="M5 7.2l1 1 2.2-2.6" stroke="#3bb54a"/></svg>
<svg class="a" style="left:64.0px;top:534.8px" width="9" height="9" viewBox="0 0 9 9" fill="none" stroke="#c9ced3" stroke-width="0.9"><circle cx="3.8" cy="4.2" r="2.5"/><path d="M3.8 0.8v1.2M3.8 6.6v1.2"/><path d="M5 7.2l1 1 2.2-2.6" stroke="#3bb54a"/></svg>
<svg class="a" style="left:80.5px;top:534.8px" width="9" height="9" viewBox="0 0 9 9" fill="none" stroke="#c9ced3" stroke-width="0.9"><path d="M1.5 6.5l4.5-4.5"/><circle cx="3.5" cy="4.5" r="1" fill="#c9ced3"/><path d="M5 7.2l1 1 2.2-2.6" stroke="#3bb54a"/></svg>
<svg class="a" style="left:98.5px;top:534.8px" width="9" height="9" viewBox="0 0 9 9" fill="none" stroke="#c9ced3" stroke-width="0.9"><path d="M3.5 1v7 M2 1.5h3 M2 4h3"/><rect x="2.5" y="5" width="2" height="2" fill="#c9ced3"/><path d="M5 7.2l1 1 2.2-2.6" stroke="#3bb54a"/></svg>
<svg class="a" style="left:115.0px;top:534.8px" width="9" height="9" viewBox="0 0 9 9" fill="none" stroke="#c9ced3" stroke-width="0.9"><path d="M3.5 1v7 M2 1.5h3 M2 4h3"/><rect x="2.5" y="5" width="2" height="2" fill="#c9ced3"/><path d="M5 7.2l1 1 2.2-2.6" stroke="#3bb54a"/></svg>
<svg class="a" style="left:132.5px;top:534.8px" width="9" height="9" viewBox="0 0 9 9" fill="none" stroke="#c9ced3" stroke-width="0.9"><rect x="1" y="2" width="5" height="4"/><path d="M2 3h3" /><path d="M5 7.2l1 1 2.2-2.6" stroke="#3bb54a"/></svg>
<svg class="a" style="left:151.0px;top:534.8px" width="9" height="9" viewBox="0 0 9 9" fill="none" stroke="#c9ced3" stroke-width="0.9"><path d="M1.5 7.5l4-4 M5 2l2 2 M6 1.5l1.5 1.5"/></svg>
<svg class="a" style="left:165.5px;top:534.8px" width="9" height="9" viewBox="0 0 9 9" fill="none" stroke="#c9ced3" stroke-width="0.9"><path d="M2 6l5-5"/><path d="M1 8h7" stroke="#d02020" stroke-width="1.2"/><path d="M1 8h3" stroke="#111" stroke-width="1.2"/></svg>
<svg class="a" style="left:182.5px;top:534.8px" width="9" height="9" viewBox="0 0 9 9" fill="none" stroke="#c9ced3" stroke-width="0.9"><path d="M1.5 3h6 M1.5 5.5h6"/></svg>
<svg class="a" style="left:199.5px;top:534.8px" width="9" height="9" viewBox="0 0 9 9" fill="none" stroke="#c9ced3" stroke-width="0.9"><path d="M1.5 2.5h6 M1.5 4.5h6 M1.5 6.5h6" stroke-width="1.1"/></svg>
<svg class="a" style="left:215.5px;top:534.8px" width="9" height="9" viewBox="0 0 9 9" fill="none" stroke="#c9ced3" stroke-width="0.9"><path d="M2 5.5l2.5-3 2.5 3z"/><path d="M1 8h7" stroke="#111" stroke-width="1.3"/></svg>
<svg class="a" style="left:251.0px;top:534.8px" width="9" height="9" viewBox="0 0 9 9" fill="none" stroke="#c9ced3" stroke-width="0.9"><path d="M4.5 1l3.2 1.6v3.6L4.5 8 1.3 6.2V2.6z" fill="#5a6a70" stroke="#9aa"/><path d="M1.3 2.6l3.2 1.6 3.2-1.6" stroke="#3bb54a"/><ellipse cx="4.5" cy="2.4" rx="2.6" ry="1.2" fill="#3bb54a" stroke="none"/><circle cx="7.2" cy="7.5" r="0.9" fill="#d03030" stroke="none"/></svg>
<svg class="a" style="left:298.5px;top:534.8px" width="9" height="9" viewBox="0 0 9 9" fill="none" stroke="#c9ced3" stroke-width="0.9"><path d="M1 3l3.5-1.8L8 3 4.5 4.8z M1 5l3.5 1.8L8 5 M1 6.8l3.5 1.8L8 6.8"/></svg>
<svg class="a" style="left:313.5px;top:534.8px" width="9" height="9" viewBox="0 0 9 9" fill="none" stroke="#c9ced3" stroke-width="0.9"><rect x="2.8" y="1" width="3.6" height="7" rx="0.8"/></svg>
<svg class="a" style="left:328.5px;top:534.8px" width="9" height="9" viewBox="0 0 9 9" fill="none" stroke="#c9ced3" stroke-width="0.9"><rect x="1" y="1.5" width="6.5" height="5.5"/><rect x="2.2" y="2.8" width="3" height="2" fill="#c9ced3"/><circle cx="7.3" cy="7.2" r="1" fill="#2ea0d0" stroke="none"/></svg>
<div class="a" style="left:59px;top:541.3px;width:1.2px;height:1.2px;background:#c9ced3;"></div>
<div class="a" style="left:76px;top:541.3px;width:1.2px;height:1.2px;background:#c9ced3;"></div>
<div class="a" style="left:93px;top:541.3px;width:1.2px;height:1.2px;background:#c9ced3;"></div>
<div class="a" style="left:111px;top:541.3px;width:1.2px;height:1.2px;background:#c9ced3;"></div>
<div class="a" style="left:128px;top:541.3px;width:1.2px;height:1.2px;background:#c9ced3;"></div>
<div class="a" style="left:145px;top:541.3px;width:1.2px;height:1.2px;background:#c9ced3;"></div>
<div class="a" style="left:178px;top:541.3px;width:1.2px;height:1.2px;background:#c9ced3;"></div>
<div class="a" style="left:195px;top:541.3px;width:1.2px;height:1.2px;background:#c9ced3;"></div>
<div class="a" style="left:212px;top:541.3px;width:1.2px;height:1.2px;background:#c9ced3;"></div>
<div class="a" style="left:229px;top:541.3px;width:1.2px;height:1.2px;background:#c9ced3;"></div>
<div class="a" style="left:246px;top:541.3px;width:1.2px;height:1.2px;background:#c9ced3;"></div>
<div class="a" style="left:232.5px;top:535px;width:8px;height:8px;background:#ffffff;"></div>
<div class="a" style="left:263px;top:534.2px;width:31px;height:9.6px;background:#2b3743;border:0.5px solid #3a4652;"></div>
<div class="t" style="left:265.5px;top:538.06px;font-size:4.5px;color:#68727b;">Standard</div>
<div class="a" style="left:287px;top:535px;width:0.5px;height:8px;background:#3a4652;"></div>
<svg class="a" style="left:288.5px;top:538px" width="4" height="3" viewBox="0 0 4 3"><path d="M0.3 0.5l1.5 1.5 1.5-1.5" stroke="#68727b" stroke-width="0.6" fill="none"/></svg>
<div class="a" style="left:46px;top:534px;width:1px;height:10px;background:#24303c;"></div>
<div class="a" style="left:148px;top:534px;width:1px;height:10px;background:#24303c;"></div>
<div class="a" style="left:296px;top:534px;width:1px;height:10px;background:#24303c;"></div>
<svg class="a" style="left:341.5px;top:534.8px" width="9" height="9" viewBox="0 0 9 9" fill="none" stroke="#c9ced3" stroke-width="0.9"><circle cx="4.5" cy="4.5" r="3"/></svg>
<div class="a" style="left:348.3px;top:541.2px;width:1.6px;height:1.6px;background:#2ea0d0;border-radius:1px;"></div>
<svg class="a" style="left:355.0px;top:534.8px" width="9" height="9" viewBox="0 0 9 9" fill="none" stroke="#c9ced3" stroke-width="0.9"><path d="M2 7l5-5"/></svg>
<div class="a" style="left:361.8px;top:541.2px;width:1.6px;height:1.6px;background:#2ea0d0;border-radius:1px;"></div>
<svg class="a" style="left:367.5px;top:534.8px" width="9" height="9" viewBox="0 0 9 9" fill="none" stroke="#c9ced3" stroke-width="0.9"><path d="M4.5 1v7 M3 3h3 M3 6h3"/></svg>
<div class="a" style="left:374.3px;top:541.2px;width:1.6px;height:1.6px;background:#2ea0d0;border-radius:1px;"></div>
<svg class="a" style="left:380.0px;top:534.8px" width="9" height="9" viewBox="0 0 9 9" fill="none" stroke="#c9ced3" stroke-width="0.9"><path d="M4.5 1v7 M3 3h3 M3 6h3"/></svg>
<div class="a" style="left:386.8px;top:541.2px;width:1.6px;height:1.6px;background:#2ea0d0;border-radius:1px;"></div>
<svg class="a" style="left:392.5px;top:534.8px" width="9" height="9" viewBox="0 0 9 9" fill="none" stroke="#c9ced3" stroke-width="0.9"><rect x="1.5" y="2" width="6" height="5"/><rect x="3" y="3.5" width="3" height="2" fill="#c9ced3"/></svg>
<div class="a" style="left:399.3px;top:541.2px;width:1.6px;height:1.6px;background:#2ea0d0;border-radius:1px;"></div>
<svg class="a" style="left:405.5px;top:534.8px" width="9" height="9" viewBox="0 0 9 9" fill="none" stroke="#c9ced3" stroke-width="0.9"><path d="M2 4.5h5"/></svg>
<div class="a" style="left:412.3px;top:541.2px;width:1.6px;height:1.6px;background:#2ea0d0;border-radius:1px;"></div>
<svg class="a" style="left:418.5px;top:534.8px" width="9" height="9" viewBox="0 0 9 9" fill="none" stroke="#c9ced3" stroke-width="0.9"><circle cx="4" cy="4" r="2.5"/><path d="M5.8 5.8l2 2 M2.8 4h2.4 M4 2.8v2.4"/></svg>
<div class="a" style="left:425.3px;top:541.2px;width:1.6px;height:1.6px;background:#2ea0d0;border-radius:1px;"></div>
<svg class="a" style="left:431.5px;top:534.8px" width="9" height="9" viewBox="0 0 9 9" fill="none" stroke="#c9ced3" stroke-width="0.9"><path d="M1.5 1h4l1.5 1.5v5h-5.5z M3 3h3 M3 4.5h3"/><circle cx="7" cy="7" r="1.2" fill="#c9ced3"/></svg>
<div class="a" style="left:438.3px;top:541.2px;width:1.6px;height:1.6px;background:#2ea0d0;border-radius:1px;"></div>
<svg class="a" style="left:444.5px;top:534.8px" width="9" height="9" viewBox="0 0 9 9" fill="none" stroke="#c9ced3" stroke-width="0.9"><path d="M1.5 1h4l1.5 1.5v5h-5.5z M3 3h3 M3 4.5h3"/><circle cx="7" cy="7" r="1.2" fill="#c9ced3"/></svg>
<div class="a" style="left:451.3px;top:541.2px;width:1.6px;height:1.6px;background:#2ea0d0;border-radius:1px;"></div>
<svg class="a" style="left:457.5px;top:534.8px" width="9" height="9" viewBox="0 0 9 9" fill="none" stroke="#c9ced3" stroke-width="0.9"><rect x="1.5" y="2" width="6" height="5"/><rect x="3" y="3.5" width="3" height="2" fill="#c9ced3"/></svg>
<div class="a" style="left:464.3px;top:541.2px;width:1.6px;height:1.6px;background:#2ea0d0;border-radius:1px;"></div>
<div class="a" style="left:0px;top:546px;width:1024px;height:10px;background:#39454f;"></div>
<div class="a" style="left:0px;top:546px;width:42px;height:10px;background:#36424d;"></div>
<div class="t" style="left:4px;top:549.86px;font-size:4.7px;color:#d6dade;">Fertig</div>
<div class="t" style="left:44.5px;top:549.78px;font-size:4.85px;color:#d6dade;">Symbol auf Zeichnung setzen.</div>
<div class="a" style="left:901px;top:546px;width:41px;height:10px;background:#35414c;"></div>
<div class="t" style="left:903px;top:549.66px;font-size:4.7px;color:#d6dade;">297%</div>
<div class="a" style="left:943px;top:546px;width:81px;height:10px;background:#35414c;"></div>
<div class="t" style="left:944px;top:549.71px;font-size:4.6px;color:#d6dade;">82800,01/61200/&nbsp; 6E&nbsp; DIN A3</div>
<div class="a" style="left:0px;top:56px;width:144px;height:465px;background:#2b3844;"></div>
<div class="a" style="left:0px;top:56px;width:1.2px;height:465px;background:#3a4652;"></div>
<div class="a" style="left:1px;top:57px;width:142px;height:12px;background:#3a4652;"></div>
<div class="t" style="left:5px;top:61.46px;font-size:4.7px;color:#d6dade;">Projekt-Explorer</div>
<svg class="a" style="left:114px;top:59.5px" width="28" height="7" viewBox="0 0 28 7" fill="none" stroke="#d6dade" stroke-width="0.8"><path d="M1 2l2 2 2-2"/><path d="M13 1.2v3M11.8 1.2h2.4M12 3.2h2M13 4.2v2"/><path d="M21.5 1.2l4 4M25.5 1.2l-4 4" stroke-width="0.9"/></svg>
<div class="a" style="left:1px;top:69px;width:142px;height:14px;background:#2e3b47;"></div>
<svg class="a" style="left:8px;top:74px" width="4" height="3" viewBox="0 0 4 3"><path d="M0 0h3.5l-1.75 2.2z" fill="#d6dade"/></svg>
<svg class="a" style="left:16.5px;top:71.5px" width="31" height="9" viewBox="0 0 31 9" fill="none" stroke="#b8bfc6" stroke-width="0.8"><rect x="1" y="1.5" width="5" height="5"/><path d="M2 2.5h3M2 4h3M3 7.5h4.5v-4"/><path d="M16.5 2.2a2.6 2.6 0 102 .5"/><path d="M17.6 1.2h2l-1 1.3z" fill="#b8bfc6"/><rect x="24.5" y="1.5" width="4.5" height="5"/><rect x="26" y="3" width="4" height="4.5"/></svg>
<div class="a" style="left:1px;top:83px;width:142px;height:428px;background:#2e3b47;"></div>
<div class="a" style="left:135px;top:84px;width:7.5px;height:425px;background:#e9ebed;"></div>
<div class="a" style="left:137.8px;top:86px;width:1.4px;height:420px;background:#b9bec3;"></div>
<div class="a" style="left:0.9999999999999999px;top:83px;width:0.8px;height:428px;background:#3b4752;"></div>
<div class="a" style="left:8.4px;top:92px;width:0.8px;height:419px;background:#3b4752;"></div>
<div class="a" style="left:15.950000000000001px;top:108px;width:0.8px;height:403px;background:#3b4752;"></div>
<div class="a" style="left:23.5px;top:124px;width:0.8px;height:387px;background:#3b4752;"></div>
<div class="a" style="left:31.05px;top:132px;width:0.8px;height:379px;background:#3b4752;"></div>
<div class="a" style="left:38.6px;top:164px;width:0.8px;height:98px;background:#3b4752;"></div>
<div class="a" style="left:46.15px;top:172px;width:0.8px;height:78px;background:#3b4752;"></div>
<div class="a" style="left:6.9px;top:86.5px;width:3.8px;height:3.8px;background:#e4e7ea;"></div>
<div class="a" style="left:8.200000000000001px;top:87.80000000000001px;width:1.2px;height:1.2px;background:#9aa4ae;"></div>
<svg class="a" style="left:12.8px;top:85.4px" width="6" height="6" viewBox="0 0 6 6" fill="none" stroke="#c3c9cf" stroke-width="0.6"><path d="M0.3 1h2l.6.6h2.8v3.6h-5.4z" fill="#eef0f2" stroke="#eef0f2"/></svg>
<div class="t" style="left:21.4px;top:87.33px;font-size:4.55px;color:#d3d8dc;letter-spacing:-0.13px;">DEMO Projekt</div>
<div class="a" style="left:6.9px;top:94.5px;width:3.8px;height:3.8px;background:#e4e7ea;"></div>
<svg class="a" style="left:12.8px;top:93.4px" width="6" height="6" viewBox="0 0 6 6" fill="none" stroke="#c3c9cf" stroke-width="0.6"><path d="M0.5 1.2h1.8l.6.6h2.6v3.4h-5z M0.5 5.2l1-2.4h4.2"/></svg>
<div class="t" style="left:21.4px;top:95.33px;font-size:4.55px;color:#d3d8dc;letter-spacing:-0.13px;"><b style="color:#fff">Musterprojekt BA2021</b></div>
<div class="a" style="left:14.450000000000001px;top:102.5px;width:3.8px;height:3.8px;background:#e4e7ea;"></div>
<div class="a" style="left:15.750000000000002px;top:103.80000000000001px;width:1.2px;height:1.2px;background:#9aa4ae;"></div>
<svg class="a" style="left:20.35px;top:101.4px" width="6" height="6" viewBox="0 0 6 6" fill="none" stroke="#c3c9cf" stroke-width="0.6"><path d="M0.6 1.5h1.7l.6.6h2.5v3h-4.8z"/></svg>
<div class="t" style="left:28.950000000000003px;top:103.33px;font-size:4.55px;color:#d3d8dc;letter-spacing:-0.13px;">Allgemein</div>
<div class="a" style="left:14.450000000000001px;top:110.5px;width:3.8px;height:3.8px;background:#e4e7ea;"></div>
<svg class="a" style="left:20.35px;top:109.4px" width="6" height="6" viewBox="0 0 6 6" fill="none" stroke="#c3c9cf" stroke-width="0.6"><path d="M0.6 1.5h1.7l.6.6h2.5v3h-4.8z"/></svg>
<div class="t" style="left:28.950000000000003px;top:111.33px;font-size:4.55px;color:#d3d8dc;letter-spacing:-0.13px;">Automationsschwerpunkte</div>
<div class="a" style="left:22.0px;top:118.5px;width:3.8px;height:3.8px;background:#e4e7ea;"></div>
<div class="a" style="left:23.299999999999997px;top:119.80000000000001px;width:1.2px;height:1.2px;background:#9aa4ae;"></div>
<svg class="a" style="left:27.9px;top:117.4px" width="6" height="6" viewBox="0 0 6 6" fill="none" stroke="#c3c9cf" stroke-width="0.6"><path d="M0.6 1.5h1.7l.6.6h2.5v3h-4.8z"/></svg>
<div class="t" style="left:36.5px;top:119.33px;font-size:4.55px;color:#d3d8dc;letter-spacing:-0.13px;">==ASP01</div>
<div class="a" style="left:22.0px;top:126.5px;width:3.8px;height:3.8px;background:#e4e7ea;"></div>
<svg class="a" style="left:27.9px;top:125.4px" width="6" height="6" viewBox="0 0 6 6" fill="none" stroke="#c3c9cf" stroke-width="0.6"><path d="M0.6 1.5h1.7l.6.6h2.5v3h-4.8z"/></svg>
<div class="t" style="left:36.5px;top:127.33px;font-size:4.55px;color:#d3d8dc;letter-spacing:-0.13px;">==ASP02</div>
<div class="a" style="left:29.55px;top:134.5px;width:3.8px;height:3.8px;background:#e4e7ea;"></div>
<div class="a" style="left:30.849999999999998px;top:135.8px;width:1.2px;height:1.2px;background:#9aa4ae;"></div>
<svg class="a" style="left:35.45px;top:133.4px" width="6" height="6" viewBox="0 0 6 6" fill="none" stroke="#c3c9cf" stroke-width="0.6"><rect x="1" y="0.6" width="4" height="4.8"/><path d="M1.8 1.5h2.4v1h-2.4z"/></svg>
<div class="t" style="left:44.05px;top:135.33px;font-size:4.55px;color:#d3d8dc;letter-spacing:-0.13px;">Deckblatt</div>
<div class="a" style="left:29.55px;top:142.5px;width:3.8px;height:3.8px;background:#e4e7ea;"></div>
<div class="a" style="left:30.849999999999998px;top:143.8px;width:1.2px;height:1.2px;background:#9aa4ae;"></div>
<svg class="a" style="left:35.45px;top:141.4px" width="6" height="6" viewBox="0 0 6 6" fill="none" stroke="#c3c9cf" stroke-width="0.6"><path d="M1 0.6h2.6l1.4 1.4v3.4h-4z M1.8 3h2.2 M1.8 4.2h2.2"/></svg>
<div class="t" style="left:44.05px;top:143.33px;font-size:4.55px;color:#d3d8dc;letter-spacing:-0.13px;">Inhaltsangabe</div>
<div class="a" style="left:29.55px;top:150.5px;width:3.8px;height:3.8px;background:#e4e7ea;"></div>
<div class="a" style="left:30.849999999999998px;top:151.8px;width:1.2px;height:1.2px;background:#9aa4ae;"></div>
<svg class="a" style="left:35.45px;top:149.4px" width="6" height="6" viewBox="0 0 6 6" fill="none" stroke="#c3c9cf" stroke-width="0.6"><path d="M0.6 1.5h1.7l.6.6h2.5v3h-4.8z"/></svg>
<div class="t" style="left:44.05px;top:151.33px;font-size:4.55px;color:#d3d8dc;letter-spacing:-0.13px;">=UST0002</div>
<div class="a" style="left:29.55px;top:158.5px;width:3.8px;height:3.8px;background:#e4e7ea;"></div>
<svg class="a" style="left:35.45px;top:157.4px" width="6" height="6" viewBox="0 0 6 6" fill="none" stroke="#c3c9cf" stroke-width="0.6"><path d="M0.6 1.5h1.7l.6.6h2.5v3h-4.8z"/></svg>
<div class="t" style="left:44.05px;top:159.33px;font-size:4.55px;color:#d3d8dc;letter-spacing:-0.13px;">=RAU0001</div>
<div class="a" style="left:37.1px;top:166.5px;width:3.8px;height:3.8px;background:#e4e7ea;"></div>
<svg class="a" style="left:43.0px;top:165.4px" width="6" height="6" viewBox="0 0 6 6" fill="none" stroke="#c3c9cf" stroke-width="0.6"><rect x="0.8" y="0.5" width="4.4" height="5" fill="#d0348a" stroke="#d0348a"/><path d="M2 2l2 2M4 2l-2 2" stroke="#3a1a2a"/></svg>
<div class="t" style="left:51.6px;top:167.33px;font-size:4.55px;color:#d3d8dc;letter-spacing:-0.13px;">Automationsschema</div>
<div class="a" style="left:44.55px;top:176.1px;width:5px;height:0.6px;background:#4a5661;"></div>
<div class="t" style="left:59.05px;top:175.33px;font-size:4.55px;color:#d3d8dc;letter-spacing:-0.13px;">0001 : A090ARD Aussenzone 1</div>
<div class="a" style="left:44.55px;top:184.1px;width:5px;height:0.6px;background:#4a5661;"></div>
<div class="t" style="left:59.05px;top:183.33px;font-size:4.55px;color:#d3d8dc;letter-spacing:-0.13px;">0002 : A090ARD Innenzone</div>
<div class="a" style="left:44.55px;top:192.1px;width:5px;height:0.6px;background:#4a5661;"></div>
<div class="t" style="left:59.05px;top:191.33px;font-size:4.55px;color:#d3d8dc;letter-spacing:-0.13px;">0003 : A090ARD Innenzone</div>
<div class="a" style="left:44.55px;top:200.1px;width:5px;height:0.6px;background:#4a5661;"></div>
<div class="t" style="left:59.05px;top:199.33px;font-size:4.55px;color:#d3d8dc;letter-spacing:-0.13px;">0004 : A090ARD Atiumzone 1</div>
<div class="a" style="left:37.0px;top:208.1px;width:5px;height:0.6px;background:#4a5661;"></div>
<svg class="a" style="left:43.0px;top:205.4px" width="6" height="6" viewBox="0 0 6 6" fill="none" stroke="#c3c9cf" stroke-width="0.6"><path d="M3 0.8l2.4 4.4h-4.8z M1.5 4l3 0"/></svg>
<div class="t" style="left:51.6px;top:207.33px;font-size:4.55px;color:#d3d8dc;letter-spacing:-0.13px;">Grafik</div>
<div class="a" style="left:37.1px;top:214.5px;width:3.8px;height:3.8px;background:#e4e7ea;"></div>
<svg class="a" style="left:43.0px;top:213.4px" width="6" height="6" viewBox="0 0 6 6" fill="none" stroke="#c3c9cf" stroke-width="0.6"><rect x="0.8" y="0.5" width="4.4" height="5" fill="#8f6fd8" stroke="#8f6fd8"/><rect x="2.2" y="1.8" width="1.6" height="2.4" fill="#2a2a40" stroke="none"/></svg>
<div class="t" style="left:51.6px;top:215.33px;font-size:4.55px;color:#d3d8dc;letter-spacing:-0.13px;">Installationsplan</div>
<div class="a" style="left:44.55px;top:224.1px;width:5px;height:0.6px;background:#4a5661;"></div>
<div class="a" style="left:58.449999999999996px;top:221.1px;width:11px;height:6.8px;background:#18222d;"></div>
<div class="t" style="left:59.05px;top:223.33px;font-size:4.55px;color:#d3d8dc;letter-spacing:-0.13px;">0001</div>
<div class="a" style="left:44.55px;top:232.1px;width:5px;height:0.6px;background:#4a5661;"></div>
<div class="t" style="left:59.05px;top:231.33px;font-size:4.55px;color:#d3d8dc;letter-spacing:-0.13px;">0002</div>
<div class="a" style="left:44.55px;top:240.1px;width:5px;height:0.6px;background:#4a5661;"></div>
<div class="t" style="left:59.05px;top:239.33px;font-size:4.55px;color:#d3d8dc;letter-spacing:-0.13px;">0003</div>
<div class="a" style="left:37.1px;top:246.5px;width:3.8px;height:3.8px;background:#e4e7ea;"></div>
<svg class="a" style="left:43.0px;top:245.4px" width="6" height="6" viewBox="0 0 6 6" fill="none" stroke="#c3c9cf" stroke-width="0.6"><rect x="1" y="0.6" width="4" height="4.8"/><path d="M1.8 2h2.4 M1.8 3h2.4 M1.8 4h2.4"/></svg>
<div class="t" style="left:51.6px;top:247.33px;font-size:4.55px;color:#d3d8dc;letter-spacing:-0.13px;">Funktionsliste</div>
<div class="a" style="left:44.55px;top:256.09999999999997px;width:5px;height:0.6px;background:#4a5661;"></div>
<div class="t" style="left:59.05px;top:255.33px;font-size:4.55px;color:#d3d8dc;letter-spacing:-0.13px;">0001 : Funktionsliste</div>
<div class="a" style="left:44.55px;top:264.09999999999997px;width:5px;height:0.6px;background:#4a5661;"></div>
<div class="t" style="left:59.05px;top:263.33px;font-size:4.55px;color:#d3d8dc;letter-spacing:-0.13px;">0002 : Funktionsliste</div>
<div class="a" style="left:44.55px;top:272.09999999999997px;width:5px;height:0.6px;background:#4a5661;"></div>
<div class="t" style="left:59.05px;top:271.33px;font-size:4.55px;color:#d3d8dc;letter-spacing:-0.13px;">0003 : Funktionsliste</div>
<div class="a" style="left:44.55px;top:280.09999999999997px;width:5px;height:0.6px;background:#4a5661;"></div>
<div class="t" style="left:59.05px;top:279.33px;font-size:4.55px;color:#d3d8dc;letter-spacing:-0.13px;">0004 : Funktionsliste</div>
<div class="a" style="left:29.55px;top:286.5px;width:3.8px;height:3.8px;background:#e4e7ea;"></div>
<div class="a" style="left:30.849999999999998px;top:287.79999999999995px;width:1.2px;height:1.2px;background:#9aa4ae;"></div>
<svg class="a" style="left:35.45px;top:285.4px" width="6" height="6" viewBox="0 0 6 6" fill="none" stroke="#c3c9cf" stroke-width="0.6"><path d="M0.6 1.5h1.7l.6.6h2.5v3h-4.8z"/></svg>
<div class="t" style="left:44.05px;top:287.33px;font-size:4.55px;color:#d3d8dc;letter-spacing:-0.13px;">=F1</div>
<div class="a" style="left:29.45px;top:296.09999999999997px;width:5px;height:0.6px;background:#4a5661;"></div>
<svg class="a" style="left:35.45px;top:293.4px" width="6" height="6" viewBox="0 0 6 6" fill="none" stroke="#c3c9cf" stroke-width="0.6"><path d="M3 0.8l2.4 4.4h-4.8z M1.5 4l3 0"/></svg>
<div class="t" style="left:44.05px;top:295.33px;font-size:4.55px;color:#d3d8dc;letter-spacing:-0.13px;">Grafik</div>
<div class="a" style="left:29.45px;top:304.09999999999997px;width:5px;height:0.6px;background:#4a5661;"></div>
<svg class="a" style="left:35.45px;top:301.4px" width="6" height="6" viewBox="0 0 6 6" fill="none" stroke="#c3c9cf" stroke-width="0.6"><rect x="1.5" y="0.6" width="4" height="4.8"/><path d="M2.2 1.6h2.6 M2.2 2.8h2.6 M2.2 4h2.6 M0.2 2h1.3 M0.2 3.5h1.3"/></svg>
<div class="t" style="left:44.05px;top:303.33px;font-size:4.55px;color:#d3d8dc;letter-spacing:-0.13px;">ASS-Plan</div>
<div class="a" style="left:29.55px;top:310.5px;width:3.8px;height:3.8px;background:#e4e7ea;"></div>
<div class="a" style="left:30.849999999999998px;top:311.79999999999995px;width:1.2px;height:1.2px;background:#9aa4ae;"></div>
<svg class="a" style="left:35.45px;top:309.4px" width="6" height="6" viewBox="0 0 6 6" fill="none" stroke="#c3c9cf" stroke-width="0.6"><rect x="1.5" y="0.6" width="4" height="4.8"/><path d="M2.2 1.6h2.6 M2.2 2.8h2.6 M2.2 4h2.6 M0.2 2h1.3 M0.2 3.5h1.3"/></svg>
<div class="t" style="left:44.05px;top:311.33px;font-size:4.55px;color:#d3d8dc;letter-spacing:-0.13px;">Kabelliste</div>
<div class="a" style="left:29.55px;top:318.5px;width:3.8px;height:3.8px;background:#e4e7ea;"></div>
<div class="a" style="left:30.849999999999998px;top:319.79999999999995px;width:1.2px;height:1.2px;background:#9aa4ae;"></div>
<svg class="a" style="left:35.45px;top:317.4px" width="6" height="6" viewBox="0 0 6 6" fill="none" stroke="#c3c9cf" stroke-width="0.6"><path d="M0.6 5.4h4.8 M1 5l3.6-3.6 M1 2.5h2 M1 1.2v4"/></svg>
<div class="t" style="left:44.05px;top:319.33px;font-size:4.55px;color:#d3d8dc;letter-spacing:-0.13px;">Parameterliste</div>
<div class="a" style="left:29.55px;top:326.5px;width:3.8px;height:3.8px;background:#e4e7ea;"></div>
<div class="a" style="left:30.849999999999998px;top:327.79999999999995px;width:1.2px;height:1.2px;background:#9aa4ae;"></div>
<svg class="a" style="left:35.45px;top:325.4px" width="6" height="6" viewBox="0 0 6 6" fill="none" stroke="#c3c9cf" stroke-width="0.6"><path d="M0.6 5.4h4.8 M1 5l3.6-3.6 M1 2.5h2 M1 1.2v4"/></svg>
<div class="t" style="left:44.05px;top:327.33px;font-size:4.55px;color:#d3d8dc;letter-spacing:-0.13px;">Ventil_Klappenliste (Wasseranwendung)</div>
<div class="a" style="left:29.55px;top:334.5px;width:3.8px;height:3.8px;background:#e4e7ea;"></div>
<div class="a" style="left:30.849999999999998px;top:335.79999999999995px;width:1.2px;height:1.2px;background:#9aa4ae;"></div>
<svg class="a" style="left:35.45px;top:333.4px" width="6" height="6" viewBox="0 0 6 6" fill="none" stroke="#c3c9cf" stroke-width="0.6"><path d="M0.6 5.4h4.8 M1 5l3.6-3.6 M1 2.5h2 M1 1.2v4"/></svg>
<div class="t" style="left:44.05px;top:335.33px;font-size:4.55px;color:#d3d8dc;letter-spacing:-0.13px;">Elektro Verbraucherliste</div>
<div class="a" style="left:29.55px;top:342.5px;width:3.8px;height:3.8px;background:#e4e7ea;"></div>
<div class="a" style="left:30.849999999999998px;top:343.79999999999995px;width:1.2px;height:1.2px;background:#9aa4ae;"></div>
<svg class="a" style="left:35.45px;top:341.4px" width="6" height="6" viewBox="0 0 6 6" fill="none" stroke="#c3c9cf" stroke-width="0.6"><rect x="1" y="0.5" width="4" height="2.2" fill="#2aa0e0" stroke="none"/><rect x="1" y="3.2" width="4" height="2.2" fill="#2aa0e0" stroke="none"/></svg>
<div class="t" style="left:44.05px;top:343.33px;font-size:4.55px;color:#d3d8dc;letter-spacing:-0.13px;">Ablaufplan</div>
<div class="a" style="left:22.0px;top:350.5px;width:3.8px;height:3.8px;background:#e4e7ea;"></div>
<svg class="a" style="left:27.9px;top:349.4px" width="6" height="6" viewBox="0 0 6 6" fill="none" stroke="#c3c9cf" stroke-width="0.6"><path d="M0.6 1.5h1.7l.6.6h2.5v3h-4.8z"/></svg>
<div class="t" style="left:36.5px;top:351.33px;font-size:4.55px;color:#d3d8dc;letter-spacing:-0.13px;">==ASP04</div>
<div class="a" style="left:29.55px;top:358.5px;width:3.8px;height:3.8px;background:#e4e7ea;"></div>
<div class="a" style="left:30.849999999999998px;top:359.79999999999995px;width:1.2px;height:1.2px;background:#9aa4ae;"></div>
<svg class="a" style="left:35.45px;top:357.4px" width="6" height="6" viewBox="0 0 6 6" fill="none" stroke="#c3c9cf" stroke-width="0.6"><rect x="1" y="0.6" width="4" height="4.8"/><path d="M1.8 1.5h2.4v1h-2.4z"/></svg>
<div class="t" style="left:44.05px;top:359.33px;font-size:4.55px;color:#d3d8dc;letter-spacing:-0.13px;">Deckblatt</div>
<div class="a" style="left:29.55px;top:366.5px;width:3.8px;height:3.8px;background:#e4e7ea;"></div>
<div class="a" style="left:30.849999999999998px;top:367.79999999999995px;width:1.2px;height:1.2px;background:#9aa4ae;"></div>
<svg class="a" style="left:35.45px;top:365.4px" width="6" height="6" viewBox="0 0 6 6" fill="none" stroke="#c3c9cf" stroke-width="0.6"><path d="M1 0.6h2.6l1.4 1.4v3.4h-4z M1.8 3h2.2 M1.8 4.2h2.2"/></svg>
<div class="t" style="left:44.05px;top:367.33px;font-size:4.55px;color:#d3d8dc;letter-spacing:-0.13px;">Inhaltsangabe</div>
<div class="a" style="left:29.55px;top:374.5px;width:3.8px;height:3.8px;background:#e4e7ea;"></div>
<div class="a" style="left:30.849999999999998px;top:375.79999999999995px;width:1.2px;height:1.2px;background:#9aa4ae;"></div>
<svg class="a" style="left:35.45px;top:373.4px" width="6" height="6" viewBox="0 0 6 6" fill="none" stroke="#c3c9cf" stroke-width="0.6"><path d="M0.6 1.5h1.7l.6.6h2.5v3h-4.8z"/></svg>
<div class="t" style="left:44.05px;top:375.33px;font-size:4.55px;color:#d3d8dc;letter-spacing:-0.13px;">=UST0004_2</div>
<div class="a" style="left:29.55px;top:382.5px;width:3.8px;height:3.8px;background:#e4e7ea;"></div>
<div class="a" style="left:30.849999999999998px;top:383.79999999999995px;width:1.2px;height:1.2px;background:#9aa4ae;"></div>
<svg class="a" style="left:35.45px;top:381.4px" width="6" height="6" viewBox="0 0 6 6" fill="none" stroke="#c3c9cf" stroke-width="0.6"><path d="M0.6 1.5h1.7l.6.6h2.5v3h-4.8z"/></svg>
<div class="t" style="left:44.05px;top:383.33px;font-size:4.55px;color:#d3d8dc;letter-spacing:-0.13px;">=KWx0001</div>
<div class="a" style="left:29.55px;top:390.5px;width:3.8px;height:3.8px;background:#e4e7ea;"></div>
<div class="a" style="left:30.849999999999998px;top:391.79999999999995px;width:1.2px;height:1.2px;background:#9aa4ae;"></div>
<svg class="a" style="left:35.45px;top:389.4px" width="6" height="6" viewBox="0 0 6 6" fill="none" stroke="#c3c9cf" stroke-width="0.6"><path d="M0.6 1.5h1.7l.6.6h2.5v3h-4.8z"/></svg>
<div class="t" style="left:44.05px;top:391.33px;font-size:4.55px;color:#d3d8dc;letter-spacing:-0.13px;">=F1</div>
<div class="a" style="left:29.45px;top:400.09999999999997px;width:5px;height:0.6px;background:#4a5661;"></div>
<svg class="a" style="left:35.45px;top:397.4px" width="6" height="6" viewBox="0 0 6 6" fill="none" stroke="#c3c9cf" stroke-width="0.6"><path d="M3 0.8l2.4 4.4h-4.8z M1.5 4l3 0"/></svg>
<div class="t" style="left:44.05px;top:399.33px;font-size:4.55px;color:#d3d8dc;letter-spacing:-0.13px;">Grafik</div>
<div class="a" style="left:29.45px;top:408.09999999999997px;width:5px;height:0.6px;background:#4a5661;"></div>
<svg class="a" style="left:35.45px;top:405.4px" width="6" height="6" viewBox="0 0 6 6" fill="none" stroke="#c3c9cf" stroke-width="0.6"><rect x="1.5" y="0.6" width="4" height="4.8"/><path d="M2.2 1.6h2.6 M2.2 2.8h2.6 M2.2 4h2.6 M0.2 2h1.3 M0.2 3.5h1.3"/></svg>
<div class="t" style="left:44.05px;top:407.33px;font-size:4.55px;color:#d3d8dc;letter-spacing:-0.13px;">ASS-Plan</div>
<div class="a" style="left:29.55px;top:414.5px;width:3.8px;height:3.8px;background:#e4e7ea;"></div>
<div class="a" style="left:30.849999999999998px;top:415.79999999999995px;width:1.2px;height:1.2px;background:#9aa4ae;"></div>
<svg class="a" style="left:35.45px;top:413.4px" width="6" height="6" viewBox="0 0 6 6" fill="none" stroke="#c3c9cf" stroke-width="0.6"><rect x="1.5" y="0.6" width="4" height="4.8"/><path d="M2.2 1.6h2.6 M2.2 2.8h2.6 M2.2 4h2.6 M0.2 2h1.3 M0.2 3.5h1.3"/></svg>
<div class="t" style="left:44.05px;top:415.33px;font-size:4.55px;color:#d3d8dc;letter-spacing:-0.13px;">Kabelliste</div>
<div class="a" style="left:29.55px;top:422.5px;width:3.8px;height:3.8px;background:#e4e7ea;"></div>
<div class="a" style="left:30.849999999999998px;top:423.79999999999995px;width:1.2px;height:1.2px;background:#9aa4ae;"></div>
<svg class="a" style="left:35.45px;top:421.4px" width="6" height="6" viewBox="0 0 6 6" fill="none" stroke="#c3c9cf" stroke-width="0.6"><path d="M0.6 5.4h4.8 M1 5l3.6-3.6 M1 2.5h2 M1 1.2v4"/></svg>
<div class="t" style="left:44.05px;top:423.33px;font-size:4.55px;color:#d3d8dc;letter-spacing:-0.13px;">Parameterliste</div>
<div class="a" style="left:29.55px;top:430.5px;width:3.8px;height:3.8px;background:#e4e7ea;"></div>
<div class="a" style="left:30.849999999999998px;top:431.79999999999995px;width:1.2px;height:1.2px;background:#9aa4ae;"></div>
<svg class="a" style="left:35.45px;top:429.4px" width="6" height="6" viewBox="0 0 6 6" fill="none" stroke="#c3c9cf" stroke-width="0.6"><path d="M0.6 5.4h4.8 M1 5l3.6-3.6 M1 2.5h2 M1 1.2v4"/></svg>
<div class="t" style="left:44.05px;top:431.33px;font-size:4.55px;color:#d3d8dc;letter-spacing:-0.13px;">Ventil_Klappenliste (Wasseranwendung)</div>
<div class="a" style="left:29.55px;top:438.5px;width:3.8px;height:3.8px;background:#e4e7ea;"></div>
<div class="a" style="left:30.849999999999998px;top:439.79999999999995px;width:1.2px;height:1.2px;background:#9aa4ae;"></div>
<svg class="a" style="left:35.45px;top:437.4px" width="6" height="6" viewBox="0 0 6 6" fill="none" stroke="#c3c9cf" stroke-width="0.6"><path d="M0.6 5.4h4.8 M1 5l3.6-3.6 M1 2.5h2 M1 1.2v4"/></svg>
<div class="t" style="left:44.05px;top:439.33px;font-size:4.55px;color:#d3d8dc;letter-spacing:-0.13px;">Elektro Verbraucherliste</div>
<div class="a" style="left:22.0px;top:446.5px;width:3.8px;height:3.8px;background:#e4e7ea;"></div>
<svg class="a" style="left:27.9px;top:445.4px" width="6" height="6" viewBox="0 0 6 6" fill="none" stroke="#c3c9cf" stroke-width="0.6"><path d="M0.6 1.5h1.7l.6.6h2.5v3h-4.8z"/></svg>
<div class="t" style="left:36.5px;top:447.33px;font-size:4.55px;color:#d3d8dc;letter-spacing:-0.13px;">==ASP11</div>
<div class="a" style="left:29.55px;top:454.5px;width:3.8px;height:3.8px;background:#e4e7ea;"></div>
<div class="a" style="left:30.849999999999998px;top:455.79999999999995px;width:1.2px;height:1.2px;background:#9aa4ae;"></div>
<svg class="a" style="left:35.45px;top:453.4px" width="6" height="6" viewBox="0 0 6 6" fill="none" stroke="#c3c9cf" stroke-width="0.6"><rect x="1" y="0.6" width="4" height="4.8"/><path d="M1.8 1.5h2.4v1h-2.4z"/></svg>
<div class="t" style="left:44.05px;top:455.33px;font-size:4.55px;color:#d3d8dc;letter-spacing:-0.13px;">Deckblatt</div>
<div class="a" style="left:29.55px;top:462.5px;width:3.8px;height:3.8px;background:#e4e7ea;"></div>
<div class="a" style="left:30.849999999999998px;top:463.79999999999995px;width:1.2px;height:1.2px;background:#9aa4ae;"></div>
<svg class="a" style="left:35.45px;top:461.4px" width="6" height="6" viewBox="0 0 6 6" fill="none" stroke="#c3c9cf" stroke-width="0.6"><path d="M1 0.6h2.6l1.4 1.4v3.4h-4z M1.8 3h2.2 M1.8 4.2h2.2"/></svg>
<div class="t" style="left:44.05px;top:463.33px;font-size:4.55px;color:#d3d8dc;letter-spacing:-0.13px;">Inhaltsangabe</div>
<div class="a" style="left:29.55px;top:470.5px;width:3.8px;height:3.8px;background:#e4e7ea;"></div>
<div class="a" style="left:30.849999999999998px;top:471.79999999999995px;width:1.2px;height:1.2px;background:#9aa4ae;"></div>
<svg class="a" style="left:35.45px;top:469.4px" width="6" height="6" viewBox="0 0 6 6" fill="none" stroke="#c3c9cf" stroke-width="0.6"><path d="M0.6 1.5h1.7l.6.6h2.5v3h-4.8z"/></svg>
<div class="t" style="left:44.05px;top:471.33px;font-size:4.55px;color:#d3d8dc;letter-spacing:-0.13px;">=UST0011</div>
<div class="a" style="left:29.55px;top:478.5px;width:3.8px;height:3.8px;background:#e4e7ea;"></div>
<div class="a" style="left:30.849999999999998px;top:479.79999999999995px;width:1.2px;height:1.2px;background:#9aa4ae;"></div>
<svg class="a" style="left:35.45px;top:477.4px" width="6" height="6" viewBox="0 0 6 6" fill="none" stroke="#c3c9cf" stroke-width="0.6"><path d="M0.6 1.5h1.7l.6.6h2.5v3h-4.8z"/></svg>
<div class="t" style="left:44.05px;top:479.33px;font-size:4.55px;color:#d3d8dc;letter-spacing:-0.13px;">=HZG0001</div>
<div class="a" style="left:29.55px;top:486.5px;width:3.8px;height:3.8px;background:#e4e7ea;"></div>
<div class="a" style="left:30.849999999999998px;top:487.79999999999995px;width:1.2px;height:1.2px;background:#9aa4ae;"></div>
<svg class="a" style="left:35.45px;top:485.4px" width="6" height="6" viewBox="0 0 6 6" fill="none" stroke="#c3c9cf" stroke-width="0.6"><path d="M0.6 1.5h1.7l.6.6h2.5v3h-4.8z"/></svg>
<div class="t" style="left:44.05px;top:487.33px;font-size:4.55px;color:#d3d8dc;letter-spacing:-0.13px;">=HZG0002</div>
<div class="a" style="left:29.55px;top:494.5px;width:3.8px;height:3.8px;background:#e4e7ea;"></div>
<div class="a" style="left:30.849999999999998px;top:495.79999999999995px;width:1.2px;height:1.2px;background:#9aa4ae;"></div>
<svg class="a" style="left:35.45px;top:493.4px" width="6" height="6" viewBox="0 0 6 6" fill="none" stroke="#c3c9cf" stroke-width="0.6"><path d="M0.6 1.5h1.7l.6.6h2.5v3h-4.8z"/></svg>
<div class="t" style="left:44.05px;top:495.33px;font-size:4.55px;color:#d3d8dc;letter-spacing:-0.13px;">=HZG0003</div>
<div class="a" style="left:29.55px;top:502.5px;width:3.8px;height:3.8px;background:#e4e7ea;"></div>
<div class="a" style="left:30.849999999999998px;top:503.79999999999995px;width:1.2px;height:1.2px;background:#9aa4ae;"></div>
<svg class="a" style="left:35.45px;top:501.4px" width="6" height="6" viewBox="0 0 6 6" fill="none" stroke="#c3c9cf" stroke-width="0.6"><path d="M0.6 1.5h1.7l.6.6h2.5v3h-4.8z"/></svg>
<div class="t" style="left:44.05px;top:503.33px;font-size:4.55px;color:#d3d8dc;letter-spacing:-0.13px;">=HZG0100</div>
<div class="a" style="left:1px;top:511px;width:142px;height:9.5px;background:#1b2733;"></div>
<div class="a" style="left:3px;top:511px;width:40px;height:9px;background:#222e3a;"></div>
<div class="a" style="left:44px;top:511px;width:40px;height:9px;background:#34414d;"></div>
<svg class="a" style="left:4px;top:512.5px" width="5" height="6" viewBox="0 0 5 6" fill="none" stroke="#c9ced3" stroke-width="0.6"><path d="M0.5 0.5h3v2M0.5 0.5v5h2M2 5.5l2.5-2.5"/></svg>
<div class="t" style="left:9.5px;top:514.31px;font-size:4.6px;color:#d6dade;">Projekt-Explorer</div>
<svg class="a" style="left:46px;top:512.5px" width="5" height="6" viewBox="0 0 5 6" fill="none" stroke="#c9ced3" stroke-width="0.6"><path d="M0.5 0.5h3v2M0.5 0.5v5h2M2 5.5l2.5-2.5"/></svg>
<div class="t" style="left:51.5px;top:514.31px;font-size:4.6px;color:#d6dade;">Eigenschaften</div>
<div class="a" style="left:143px;top:56px;width:1px;height:465px;background:#3a4652;"></div>
<div class="a" style="left:144px;top:56px;width:3.5px;height:465px;background:#1a2532;"></div>
<div class="a" style="left:145px;top:281px;width:2.2px;height:16px;background:#465260;"></div>
<div class="a" style="left:147.5px;top:56px;width:741.5px;height:465px;background:#2e3b47;"></div>
<div class="a" style="left:147.5px;top:57px;width:741.5px;height:14px;background:#33404c;"></div>
<div class="a" style="left:147.5px;top:57px;width:143px;height:14px;background:#1f2b37;"></div>
<div class="a" style="left:151.5px;top:60.5px;width:6px;height:7.5px;background:#8c6cd0;border-radius:0.5px;"></div>
<div class="a" style="left:153.3px;top:62.3px;width:2.4px;height:3.9px;background:#2a2f44;"></div>
<div class="t" style="left:160.8px;top:62.98px;font-size:4.65px;color:#e6e9ec;"><b>==ASP02=RAU0001_Plan dinstallation.0001.wsARD</b></div>
<svg class="a" style="left:282px;top:61.5px" width="6" height="6" viewBox="0 0 6 6" stroke="#e6e9ec" stroke-width="0.9"><path d="M1 1l4 4M5 1l-4 4"/></svg>
<svg class="a" style="left:869px;top:61.5px" width="16" height="6" viewBox="0 0 16 6"><path d="M0.5 1.2h4l-2 3z" fill="#e6e9ec"/><path d="M11 1l4 4M15 1l-4 4" stroke="#e6e9ec" stroke-width="0.9"/></svg>
<div class="a" style="left:163px;top:73.5px;width:723px;height:6.5px;background:#1a2633;"></div>
<div class="a" style="left:149.5px;top:80px;width:6.2px;height:438px;background:#1a2633;"></div>
<div class="t" style="left:170.2px;top:75.56px;font-size:4.5px;color:#c9ced3;">4</div>
<div class="t" style="left:360.5px;top:75.56px;font-size:4.5px;color:#c9ced3;">5</div>
<div class="t" style="left:551px;top:75.56px;font-size:4.5px;color:#c9ced3;">6</div>
<div class="t" style="left:742px;top:75.56px;font-size:4.5px;color:#c9ced3;">7</div>
<div class="a" style="left:267px;top:77px;width:0.6px;height:2.5px;background:#9aa2aa;"></div>
<div class="a" style="left:457.3px;top:77px;width:0.6px;height:2.5px;background:#9aa2aa;"></div>
<div class="a" style="left:648px;top:77px;width:0.6px;height:2.5px;background:#9aa2aa;"></div>
<div class="a" style="left:838.3px;top:77px;width:0.6px;height:2.5px;background:#9aa2aa;"></div>
<div class="t" style="left:150.5px;top:142.76px;font-size:4.5px;color:#c9ced3;">D</div>
<div class="t" style="left:150.5px;top:353.26px;font-size:4.5px;color:#c9ced3;">E</div>
<div class="a" style="left:153px;top:249.5px;width:2.5px;height:0.6px;background:#9aa2aa;"></div>
<div class="a" style="left:153px;top:459px;width:2.5px;height:0.6px;background:#9aa2aa;"></div>
<svg class="a" style="left:156px;top:80px" width="730" height="438" viewBox="156 80 730 438"><rect x="156" y="80" width="730" height="438" fill="#fff"/><defs><pattern id="hatch" width="3.6" height="6" patternUnits="userSpaceOnUse" patternTransform="rotate(-45)"><line x1="0.5" y1="0" x2="0.5" y2="6" stroke="#808080" stroke-width="0.65"/><line x1="2.3" y1="0" x2="2.3" y2="6" stroke="#a0a0a0" stroke-width="0.5" stroke-dasharray="0.7 1.3"/></pattern><pattern id="vstripe" width="2.7" height="10" patternUnits="userSpaceOnUse"><line x1="1" y1="0" x2="1" y2="10" stroke="#7a7a7a" stroke-width="0.6"/></pattern></defs><line x1="535.2" y1="80" x2="535.2" y2="518" stroke="#f27a7a" stroke-width="0.6"/><line x1="156" y1="354" x2="886" y2="354" stroke="#f49090" stroke-width="0.6"/><g fill="none" stroke="#7a7a7a" stroke-width="0.75"><path d="M156 86.6H213"/><rect x="193" y="79.0" width="19" height="7.6"/><path d="M303.5 54.7H319.5 M303.5 63.0H319.5 M303.5 54.7V63.0"/><path d="M156 102.1H213"/><rect x="193" y="94.5" width="19" height="7.6"/><path d="M303.5 70.2H319.5 M303.5 78.5H319.5 M303.5 70.2V78.5"/><path d="M156 117.9H213"/><rect x="193" y="110.3" width="19" height="7.6"/><path d="M303.5 86.0H319.5 M303.5 94.3H319.5 M303.5 86.0V94.3"/><path d="M156 133.6H213"/><rect x="193" y="126.0" width="19" height="7.6"/><path d="M303.5 101.7H319.5 M303.5 110.0H319.5 M303.5 101.7V110.0"/><path d="M156 149.6H213"/><rect x="193" y="142.0" width="19" height="7.6"/><path d="M303.5 117.7H319.5 M303.5 126.0H319.5 M303.5 117.7V126.0"/><path d="M156 165.6H213"/><rect x="193" y="158.0" width="19" height="7.6"/><path d="M303.5 133.7H319.5 M303.5 142.0H319.5 M303.5 133.7V142.0"/><path d="M156 181.6H213"/><rect x="193" y="174.0" width="19" height="7.6"/><path d="M303.5 149.7H319.5 M303.5 158.0H319.5 M303.5 149.7V158.0"/><path d="M156 197.6H213"/><rect x="193" y="190.0" width="19" height="7.6"/><path d="M303.5 165.7H319.5 M303.5 174.0H319.5 M303.5 165.7V174.0"/><path d="M156 213.6H213"/><rect x="193" y="206.0" width="19" height="7.6"/><path d="M303.5 181.7H319.5 M303.5 190.0H319.5 M303.5 181.7V190.0"/></g><g transform="translate(156.30,86.80) rotate(0)" fill="none" stroke="#8a4c3c" stroke-width="0.62"><path d="M0.40 -0.30V-9.90Q0.40 -11.50 2.00 -11.50H6.70Q8.30 -11.50 8.30 -9.90V-0.30"/><path d="M1.50 -4.37h5.70 M0.60 -1.61h7.50 M1.50 -4.37V-0.3 M7.20 -4.37V-0.3"/><path d="M0.40 -10.10l1 -0.2v1.4z" fill="#8a4c3c" stroke="none"/><path d="M9.10 -0.30V-9.90Q9.10 -11.50 10.70 -11.50H15.40Q17.00 -11.50 17.00 -9.90V-0.30"/><path d="M10.20 -4.37h5.70 M9.30 -1.61h7.50 M10.20 -4.37V-0.3 M15.90 -4.37V-0.3"/><path d="M9.10 -10.10l1 -0.2v1.4z" fill="#8a4c3c" stroke="none"/><path d="M17.80 -0.30V-9.90Q17.80 -11.50 19.40 -11.50H24.10Q25.70 -11.50 25.70 -9.90V-0.30"/><path d="M18.90 -4.37h5.70 M18.00 -1.61h7.50 M18.90 -4.37V-0.3 M24.60 -4.37V-0.3"/><path d="M17.80 -10.10l1 -0.2v1.4z" fill="#8a4c3c" stroke="none"/><path d="M26.50 -0.30V-9.90Q26.50 -11.50 28.10 -11.50H32.80Q34.40 -11.50 34.40 -9.90V-0.30"/><path d="M27.60 -4.37h5.70 M26.70 -1.61h7.50 M27.60 -4.37V-0.3 M33.30 -4.37V-0.3"/><path d="M26.50 -10.10l1 -0.2v1.4z" fill="#8a4c3c" stroke="none"/><path d="M0 0H34.80" stroke-width="0.8"/></g><g transform="translate(213.80,85.60) rotate(-15)" fill="none" stroke="#8a4c3c" stroke-width="0.62"><path d="M0.40 -0.30V-8.90Q0.40 -10.50 2.00 -10.50H7.16Q8.76 -10.50 8.76 -8.90V-0.30"/><path d="M1.50 -3.99h6.16 M0.60 -1.47h7.96 M1.50 -3.99V-0.3 M7.66 -3.99V-0.3"/><path d="M0.40 -9.10l1 -0.2v1.4z" fill="#8a4c3c" stroke="none"/><path d="M9.56 -0.30V-8.90Q9.56 -10.50 11.16 -10.50H16.32Q17.92 -10.50 17.92 -8.90V-0.30"/><path d="M10.66 -3.99h6.16 M9.76 -1.47h7.96 M10.66 -3.99V-0.3 M16.82 -3.99V-0.3"/><path d="M9.56 -9.10l1 -0.2v1.4z" fill="#8a4c3c" stroke="none"/><path d="M18.72 -0.30V-8.90Q18.72 -10.50 20.32 -10.50H25.48Q27.08 -10.50 27.08 -8.90V-0.30"/><path d="M19.82 -3.99h6.16 M18.92 -1.47h7.96 M19.82 -3.99V-0.3 M25.98 -3.99V-0.3"/><path d="M18.72 -9.10l1 -0.2v1.4z" fill="#8a4c3c" stroke="none"/><path d="M27.88 -0.30V-8.90Q27.88 -10.50 29.48 -10.50H34.64Q36.24 -10.50 36.24 -8.90V-0.30"/><path d="M28.98 -3.99h6.16 M28.08 -1.47h7.96 M28.98 -3.99V-0.3 M35.14 -3.99V-0.3"/><path d="M27.88 -9.10l1 -0.2v1.4z" fill="#8a4c3c" stroke="none"/><path d="M37.04 -0.30V-8.90Q37.04 -10.50 38.64 -10.50H43.80Q45.40 -10.50 45.40 -8.90V-0.30"/><path d="M38.14 -3.99h6.16 M37.24 -1.47h7.96 M38.14 -3.99V-0.3 M44.30 -3.99V-0.3"/><path d="M37.04 -9.10l1 -0.2v1.4z" fill="#8a4c3c" stroke="none"/><path d="M46.20 -0.30V-8.90Q46.20 -10.50 47.80 -10.50H52.96Q54.56 -10.50 54.56 -8.90V-0.30"/><path d="M47.30 -3.99h6.16 M46.40 -1.47h7.96 M47.30 -3.99V-0.3 M53.46 -3.99V-0.3"/><path d="M46.20 -9.10l1 -0.2v1.4z" fill="#8a4c3c" stroke="none"/><path d="M55.36 -0.30V-8.90Q55.36 -10.50 56.96 -10.50H62.12Q63.72 -10.50 63.72 -8.90V-0.30"/><path d="M56.46 -3.99h6.16 M55.56 -1.47h7.96 M56.46 -3.99V-0.3 M62.62 -3.99V-0.3"/><path d="M55.36 -9.10l1 -0.2v1.4z" fill="#8a4c3c" stroke="none"/><path d="M64.52 -0.30V-8.90Q64.52 -10.50 66.12 -10.50H71.28Q72.88 -10.50 72.88 -8.90V-0.30"/><path d="M65.62 -3.99h6.16 M64.72 -1.47h7.96 M65.62 -3.99V-0.3 M71.78 -3.99V-0.3"/><path d="M64.52 -9.10l1 -0.2v1.4z" fill="#8a4c3c" stroke="none"/><path d="M73.68 -0.30V-8.90Q73.68 -10.50 75.28 -10.50H80.44Q82.04 -10.50 82.04 -8.90V-0.30"/><path d="M74.78 -3.99h6.16 M73.88 -1.47h7.96 M74.78 -3.99V-0.3 M80.94 -3.99V-0.3"/><path d="M73.68 -9.10l1 -0.2v1.4z" fill="#8a4c3c" stroke="none"/><path d="M82.84 -0.30V-8.90Q82.84 -10.50 84.44 -10.50H89.60Q91.20 -10.50 91.20 -8.90V-0.30"/><path d="M83.94 -3.99h6.16 M83.04 -1.47h7.96 M83.94 -3.99V-0.3 M90.10 -3.99V-0.3"/><path d="M82.84 -9.10l1 -0.2v1.4z" fill="#8a4c3c" stroke="none"/><path d="M0 0H91.60" stroke-width="0.8"/></g><g transform="translate(156.30,102.30) rotate(0)" fill="none" stroke="#8a4c3c" stroke-width="0.62"><path d="M0.40 -0.30V-9.90Q0.40 -11.50 2.00 -11.50H6.70Q8.30 -11.50 8.30 -9.90V-0.30"/><path d="M1.50 -4.37h5.70 M0.60 -1.61h7.50 M1.50 -4.37V-0.3 M7.20 -4.37V-0.3"/><path d="M0.40 -10.10l1 -0.2v1.4z" fill="#8a4c3c" stroke="none"/><path d="M9.10 -0.30V-9.90Q9.10 -11.50 10.70 -11.50H15.40Q17.00 -11.50 17.00 -9.90V-0.30"/><path d="M10.20 -4.37h5.70 M9.30 -1.61h7.50 M10.20 -4.37V-0.3 M15.90 -4.37V-0.3"/><path d="M9.10 -10.10l1 -0.2v1.4z" fill="#8a4c3c" stroke="none"/><path d="M17.80 -0.30V-9.90Q17.80 -11.50 19.40 -11.50H24.10Q25.70 -11.50 25.70 -9.90V-0.30"/><path d="M18.90 -4.37h5.70 M18.00 -1.61h7.50 M18.90 -4.37V-0.3 M24.60 -4.37V-0.3"/><path d="M17.80 -10.10l1 -0.2v1.4z" fill="#8a4c3c" stroke="none"/><path d="M26.50 -0.30V-9.90Q26.50 -11.50 28.10 -11.50H32.80Q34.40 -11.50 34.40 -9.90V-0.30"/><path d="M27.60 -4.37h5.70 M26.70 -1.61h7.50 M27.60 -4.37V-0.3 M33.30 -4.37V-0.3"/><path d="M26.50 -10.10l1 -0.2v1.4z" fill="#8a4c3c" stroke="none"/><path d="M0 0H34.80" stroke-width="0.8"/></g><g transform="translate(213.80,101.10) rotate(-15)" fill="none" stroke="#8a4c3c" stroke-width="0.62"><path d="M0.40 -0.30V-8.90Q0.40 -10.50 2.00 -10.50H7.16Q8.76 -10.50 8.76 -8.90V-0.30"/><path d="M1.50 -3.99h6.16 M0.60 -1.47h7.96 M1.50 -3.99V-0.3 M7.66 -3.99V-0.3"/><path d="M0.40 -9.10l1 -0.2v1.4z" fill="#8a4c3c" stroke="none"/><path d="M9.56 -0.30V-8.90Q9.56 -10.50 11.16 -10.50H16.32Q17.92 -10.50 17.92 -8.90V-0.30"/><path d="M10.66 -3.99h6.16 M9.76 -1.47h7.96 M10.66 -3.99V-0.3 M16.82 -3.99V-0.3"/><path d="M9.56 -9.10l1 -0.2v1.4z" fill="#8a4c3c" stroke="none"/><path d="M18.72 -0.30V-8.90Q18.72 -10.50 20.32 -10.50H25.48Q27.08 -10.50 27.08 -8.90V-0.30"/><path d="M19.82 -3.99h6.16 M18.92 -1.47h7.96 M19.82 -3.99V-0.3 M25.98 -3.99V-0.3"/><path d="M18.72 -9.10l1 -0.2v1.4z" fill="#8a4c3c" stroke="none"/><path d="M27.88 -0.30V-8.90Q27.88 -10.50 29.48 -10.50H34.64Q36.24 -10.50 36.24 -8.90V-0.30"/><path d="M28.98 -3.99h6.16 M28.08 -1.47h7.96 M28.98 -3.99V-0.3 M35.14 -3.99V-0.3"/><path d="M27.88 -9.10l1 -0.2v1.4z" fill="#8a4c3c" stroke="none"/><path d="M37.04 -0.30V-8.90Q37.04 -10.50 38.64 -10.50H43.80Q45.40 -10.50 45.40 -8.90V-0.30"/><path d="M38.14 -3.99h6.16 M37.24 -1.47h7.96 M38.14 -3.99V-0.3 M44.30 -3.99V-0.3"/><path d="M37.04 -9.10l1 -0.2v1.4z" fill="#8a4c3c" stroke="none"/><path d="M46.20 -0.30V-8.90Q46.20 -10.50 47.80 -10.50H52.96Q54.56 -10.50 54.56 -8.90V-0.30"/><path d="M47.30 -3.99h6.16 M46.40 -1.47h7.96 M47.30 -3.99V-0.3 M53.46 -3.99V-0.3"/><path d="M46.20 -9.10l1 -0.2v1.4z" fill="#8a4c3c" stroke="none"/><path d="M55.36 -0.30V-8.90Q55.36 -10.50 56.96 -10.50H62.12Q63.72 -10.50 63.72 -8.90V-0.30"/><path d="M56.46 -3.99h6.16 M55.56 -1.47h7.96 M56.46 -3.99V-0.3 M62.62 -3.99V-0.3"/><path d="M55.36 -9.10l1 -0.2v1.4z" fill="#8a4c3c" stroke="none"/><path d="M64.52 -0.30V-8.90Q64.52 -10.50 66.12 -10.50H71.28Q72.88 -10.50 72.88 -8.90V-0.30"/><path d="M65.62 -3.99h6.16 M64.72 -1.47h7.96 M65.62 -3.99V-0.3 M71.78 -3.99V-0.3"/><path d="M64.52 -9.10l1 -0.2v1.4z" fill="#8a4c3c" stroke="none"/><path d="M73.68 -0.30V-8.90Q73.68 -10.50 75.28 -10.50H80.44Q82.04 -10.50 82.04 -8.90V-0.30"/><path d="M74.78 -3.99h6.16 M73.88 -1.47h7.96 M74.78 -3.99V-0.3 M80.94 -3.99V-0.3"/><path d="M73.68 -9.10l1 -0.2v1.4z" fill="#8a4c3c" stroke="none"/><path d="M82.84 -0.30V-8.90Q82.84 -10.50 84.44 -10.50H89.60Q91.20 -10.50 91.20 -8.90V-0.30"/><path d="M83.94 -3.99h6.16 M83.04 -1.47h7.96 M83.94 -3.99V-0.3 M90.10 -3.99V-0.3"/><path d="M82.84 -9.10l1 -0.2v1.4z" fill="#8a4c3c" stroke="none"/><path d="M0 0H91.60" stroke-width="0.8"/></g><g transform="translate(156.30,118.10) rotate(0)" fill="none" stroke="#8a4c3c" stroke-width="0.62"><path d="M0.40 -0.30V-9.90Q0.40 -11.50 2.00 -11.50H6.70Q8.30 -11.50 8.30 -9.90V-0.30"/><path d="M1.50 -4.37h5.70 M0.60 -1.61h7.50 M1.50 -4.37V-0.3 M7.20 -4.37V-0.3"/><path d="M0.40 -10.10l1 -0.2v1.4z" fill="#8a4c3c" stroke="none"/><path d="M9.10 -0.30V-9.90Q9.10 -11.50 10.70 -11.50H15.40Q17.00 -11.50 17.00 -9.90V-0.30"/><path d="M10.20 -4.37h5.70 M9.30 -1.61h7.50 M10.20 -4.37V-0.3 M15.90 -4.37V-0.3"/><path d="M9.10 -10.10l1 -0.2v1.4z" fill="#8a4c3c" stroke="none"/><path d="M17.80 -0.30V-9.90Q17.80 -11.50 19.40 -11.50H24.10Q25.70 -11.50 25.70 -9.90V-0.30"/><path d="M18.90 -4.37h5.70 M18.00 -1.61h7.50 M18.90 -4.37V-0.3 M24.60 -4.37V-0.3"/><path d="M17.80 -10.10l1 -0.2v1.4z" fill="#8a4c3c" stroke="none"/><path d="M26.50 -0.30V-9.90Q26.50 -11.50 28.10 -11.50H32.80Q34.40 -11.50 34.40 -9.90V-0.30"/><path d="M27.60 -4.37h5.70 M26.70 -1.61h7.50 M27.60 -4.37V-0.3 M33.30 -4.37V-0.3"/><path d="M26.50 -10.10l1 -0.2v1.4z" fill="#8a4c3c" stroke="none"/><path d="M0 0H34.80" stroke-width="0.8"/></g><g transform="translate(213.80,116.90) rotate(-15)" fill="none" stroke="#8a4c3c" stroke-width="0.62"><path d="M0.40 -0.30V-8.90Q0.40 -10.50 2.00 -10.50H7.16Q8.76 -10.50 8.76 -8.90V-0.30"/><path d="M1.50 -3.99h6.16 M0.60 -1.47h7.96 M1.50 -3.99V-0.3 M7.66 -3.99V-0.3"/><path d="M0.40 -9.10l1 -0.2v1.4z" fill="#8a4c3c" stroke="none"/><path d="M9.56 -0.30V-8.90Q9.56 -10.50 11.16 -10.50H16.32Q17.92 -10.50 17.92 -8.90V-0.30"/><path d="M10.66 -3.99h6.16 M9.76 -1.47h7.96 M10.66 -3.99V-0.3 M16.82 -3.99V-0.3"/><path d="M9.56 -9.10l1 -0.2v1.4z" fill="#8a4c3c" stroke="none"/><path d="M18.72 -0.30V-8.90Q18.72 -10.50 20.32 -10.50H25.48Q27.08 -10.50 27.08 -8.90V-0.30"/><path d="M19.82 -3.99h6.16 M18.92 -1.47h7.96 M19.82 -3.99V-0.3 M25.98 -3.99V-0.3"/><path d="M18.72 -9.10l1 -0.2v1.4z" fill="#8a4c3c" stroke="none"/><path d="M27.88 -0.30V-8.90Q27.88 -10.50 29.48 -10.50H34.64Q36.24 -10.50 36.24 -8.90V-0.30"/><path d="M28.98 -3.99h6.16 M28.08 -1.47h7.96 M28.98 -3.99V-0.3 M35.14 -3.99V-0.3"/><path d="M27.88 -9.10l1 -0.2v1.4z" fill="#8a4c3c" stroke="none"/><path d="M37.04 -0.30V-8.90Q37.04 -10.50 38.64 -10.50H43.80Q45.40 -10.50 45.40 -8.90V-0.30"/><path d="M38.14 -3.99h6.16 M37.24 -1.47h7.96 M38.14 -3.99V-0.3 M44.30 -3.99V-0.3"/><path d="M37.04 -9.10l1 -0.2v1.4z" fill="#8a4c3c" stroke="none"/><path d="M46.20 -0.30V-8.90Q46.20 -10.50 47.80 -10.50H52.96Q54.56 -10.50 54.56 -8.90V-0.30"/><path d="M47.30 -3.99h6.16 M46.40 -1.47h7.96 M47.30 -3.99V-0.3 M53.46 -3.99V-0.3"/><path d="M46.20 -9.10l1 -0.2v1.4z" fill="#8a4c3c" stroke="none"/><path d="M55.36 -0.30V-8.90Q55.36 -10.50 56.96 -10.50H62.12Q63.72 -10.50 63.72 -8.90V-0.30"/><path d="M56.46 -3.99h6.16 M55.56 -1.47h7.96 M56.46 -3.99V-0.3 M62.62 -3.99V-0.3"/><path d="M55.36 -9.10l1 -0.2v1.4z" fill="#8a4c3c" stroke="none"/><path d="M64.52 -0.30V-8.90Q64.52 -10.50 66.12 -10.50H71.28Q72.88 -10.50 72.88 -8.90V-0.30"/><path d="M65.62 -3.99h6.16 M64.72 -1.47h7.96 M65.62 -3.99V-0.3 M71.78 -3.99V-0.3"/><path d="M64.52 -9.10l1 -0.2v1.4z" fill="#8a4c3c" stroke="none"/><path d="M73.68 -0.30V-8.90Q73.68 -10.50 75.28 -10.50H80.44Q82.04 -10.50 82.04 -8.90V-0.30"/><path d="M74.78 -3.99h6.16 M73.88 -1.47h7.96 M74.78 -3.99V-0.3 M80.94 -3.99V-0.3"/><path d="M73.68 -9.10l1 -0.2v1.4z" fill="#8a4c3c" stroke="none"/><path d="M82.84 -0.30V-8.90Q82.84 -10.50 84.44 -10.50H89.60Q91.20 -10.50 91.20 -8.90V-0.30"/><path d="M83.94 -3.99h6.16 M83.04 -1.47h7.96 M83.94 -3.99V-0.3 M90.10 -3.99V-0.3"/><path d="M82.84 -9.10l1 -0.2v1.4z" fill="#8a4c3c" stroke="none"/><path d="M0 0H91.60" stroke-width="0.8"/></g><g transform="translate(156.30,133.80) rotate(0)" fill="none" stroke="#8a4c3c" stroke-width="0.62"><path d="M0.40 -0.30V-9.90Q0.40 -11.50 2.00 -11.50H6.70Q8.30 -11.50 8.30 -9.90V-0.30"/><path d="M1.50 -4.37h5.70 M0.60 -1.61h7.50 M1.50 -4.37V-0.3 M7.20 -4.37V-0.3"/><path d="M0.40 -10.10l1 -0.2v1.4z" fill="#8a4c3c" stroke="none"/><path d="M9.10 -0.30V-9.90Q9.10 -11.50 10.70 -11.50H15.40Q17.00 -11.50 17.00 -9.90V-0.30"/><path d="M10.20 -4.37h5.70 M9.30 -1.61h7.50 M10.20 -4.37V-0.3 M15.90 -4.37V-0.3"/><path d="M9.10 -10.10l1 -0.2v1.4z" fill="#8a4c3c" stroke="none"/><path d="M17.80 -0.30V-9.90Q17.80 -11.50 19.40 -11.50H24.10Q25.70 -11.50 25.70 -9.90V-0.30"/><path d="M18.90 -4.37h5.70 M18.00 -1.61h7.50 M18.90 -4.37V-0.3 M24.60 -4.37V-0.3"/><path d="M17.80 -10.10l1 -0.2v1.4z" fill="#8a4c3c" stroke="none"/><path d="M26.50 -0.30V-9.90Q26.50 -11.50 28.10 -11.50H32.80Q34.40 -11.50 34.40 -9.90V-0.30"/><path d="M27.60 -4.37h5.70 M26.70 -1.61h7.50 M27.60 -4.37V-0.3 M33.30 -4.37V-0.3"/><path d="M26.50 -10.10l1 -0.2v1.4z" fill="#8a4c3c" stroke="none"/><path d="M0 0H34.80" stroke-width="0.8"/></g><g transform="translate(213.80,132.60) rotate(-15)" fill="none" stroke="#8a4c3c" stroke-width="0.62"><path d="M0.40 -0.30V-8.90Q0.40 -10.50 2.00 -10.50H7.16Q8.76 -10.50 8.76 -8.90V-0.30"/><path d="M1.50 -3.99h6.16 M0.60 -1.47h7.96 M1.50 -3.99V-0.3 M7.66 -3.99V-0.3"/><path d="M0.40 -9.10l1 -0.2v1.4z" fill="#8a4c3c" stroke="none"/><path d="M9.56 -0.30V-8.90Q9.56 -10.50 11.16 -10.50H16.32Q17.92 -10.50 17.92 -8.90V-0.30"/><path d="M10.66 -3.99h6.16 M9.76 -1.47h7.96 M10.66 -3.99V-0.3 M16.82 -3.99V-0.3"/><path d="M9.56 -9.10l1 -0.2v1.4z" fill="#8a4c3c" stroke="none"/><path d="M18.72 -0.30V-8.90Q18.72 -10.50 20.32 -10.50H25.48Q27.08 -10.50 27.08 -8.90V-0.30"/><path d="M19.82 -3.99h6.16 M18.92 -1.47h7.96 M19.82 -3.99V-0.3 M25.98 -3.99V-0.3"/><path d="M18.72 -9.10l1 -0.2v1.4z" fill="#8a4c3c" stroke="none"/><path d="M27.88 -0.30V-8.90Q27.88 -10.50 29.48 -10.50H34.64Q36.24 -10.50 36.24 -8.90V-0.30"/><path d="M28.98 -3.99h6.16 M28.08 -1.47h7.96 M28.98 -3.99V-0.3 M35.14 -3.99V-0.3"/><path d="M27.88 -9.10l1 -0.2v1.4z" fill="#8a4c3c" stroke="none"/><path d="M37.04 -0.30V-8.90Q37.04 -10.50 38.64 -10.50H43.80Q45.40 -10.50 45.40 -8.90V-0.30"/><path d="M38.14 -3.99h6.16 M37.24 -1.47h7.96 M38.14 -3.99V-0.3 M44.30 -3.99V-0.3"/><path d="M37.04 -9.10l1 -0.2v1.4z" fill="#8a4c3c" stroke="none"/><path d="M46.20 -0.30V-8.90Q46.20 -10.50 47.80 -10.50H52.96Q54.56 -10.50 54.56 -8.90V-0.30"/><path d="M47.30 -3.99h6.16 M46.40 -1.47h7.96 M47.30 -3.99V-0.3 M53.46 -3.99V-0.3"/><path d="M46.20 -9.10l1 -0.2v1.4z" fill="#8a4c3c" stroke="none"/><path d="M55.36 -0.30V-8.90Q55.36 -10.50 56.96 -10.50H62.12Q63.72 -10.50 63.72 -8.90V-0.30"/><path d="M56.46 -3.99h6.16 M55.56 -1.47h7.96 M56.46 -3.99V-0.3 M62.62 -3.99V-0.3"/><path d="M55.36 -9.10l1 -0.2v1.4z" fill="#8a4c3c" stroke="none"/><path d="M64.52 -0.30V-8.90Q64.52 -10.50 66.12 -10.50H71.28Q72.88 -10.50 72.88 -8.90V-0.30"/><path d="M65.62 -3.99h6.16 M64.72 -1.47h7.96 M65.62 -3.99V-0.3 M71.78 -3.99V-0.3"/><path d="M64.52 -9.10l1 -0.2v1.4z" fill="#8a4c3c" stroke="none"/><path d="M73.68 -0.30V-8.90Q73.68 -10.50 75.28 -10.50H80.44Q82.04 -10.50 82.04 -8.90V-0.30"/><path d="M74.78 -3.99h6.16 M73.88 -1.47h7.96 M74.78 -3.99V-0.3 M80.94 -3.99V-0.3"/><path d="M73.68 -9.10l1 -0.2v1.4z" fill="#8a4c3c" stroke="none"/><path d="M82.84 -0.30V-8.90Q82.84 -10.50 84.44 -10.50H89.60Q91.20 -10.50 91.20 -8.90V-0.30"/><path d="M83.94 -3.99h6.16 M83.04 -1.47h7.96 M83.94 -3.99V-0.3 M90.10 -3.99V-0.3"/><path d="M82.84 -9.10l1 -0.2v1.4z" fill="#8a4c3c" stroke="none"/><path d="M0 0H91.60" stroke-width="0.8"/></g><g transform="translate(156.30,149.80) rotate(0)" fill="none" stroke="#8a4c3c" stroke-width="0.62"><path d="M0.40 -0.30V-9.90Q0.40 -11.50 2.00 -11.50H6.70Q8.30 -11.50 8.30 -9.90V-0.30"/><path d="M1.50 -4.37h5.70 M0.60 -1.61h7.50 M1.50 -4.37V-0.3 M7.20 -4.37V-0.3"/><path d="M0.40 -10.10l1 -0.2v1.4z" fill="#8a4c3c" stroke="none"/><path d="M9.10 -0.30V-9.90Q9.10 -11.50 10.70 -11.50H15.40Q17.00 -11.50 17.00 -9.90V-0.30"/><path d="M10.20 -4.37h5.70 M9.30 -1.61h7.50 M10.20 -4.37V-0.3 M15.90 -4.37V-0.3"/><path d="M9.10 -10.10l1 -0.2v1.4z" fill="#8a4c3c" stroke="none"/><path d="M17.80 -0.30V-9.90Q17.80 -11.50 19.40 -11.50H24.10Q25.70 -11.50 25.70 -9.90V-0.30"/><path d="M18.90 -4.37h5.70 M18.00 -1.61h7.50 M18.90 -4.37V-0.3 M24.60 -4.37V-0.3"/><path d="M17.80 -10.10l1 -0.2v1.4z" fill="#8a4c3c" stroke="none"/><path d="M26.50 -0.30V-9.90Q26.50 -11.50 28.10 -11.50H32.80Q34.40 -11.50 34.40 -9.90V-0.30"/><path d="M27.60 -4.37h5.70 M26.70 -1.61h7.50 M27.60 -4.37V-0.3 M33.30 -4.37V-0.3"/><path d="M26.50 -10.10l1 -0.2v1.4z" fill="#8a4c3c" stroke="none"/><path d="M0 0H34.80" stroke-width="0.8"/></g><g transform="translate(213.80,148.60) rotate(-15)" fill="none" stroke="#8a4c3c" stroke-width="0.62"><path d="M0.40 -0.30V-8.90Q0.40 -10.50 2.00 -10.50H7.16Q8.76 -10.50 8.76 -8.90V-0.30"/><path d="M1.50 -3.99h6.16 M0.60 -1.47h7.96 M1.50 -3.99V-0.3 M7.66 -3.99V-0.3"/><path d="M0.40 -9.10l1 -0.2v1.4z" fill="#8a4c3c" stroke="none"/><path d="M9.56 -0.30V-8.90Q9.56 -10.50 11.16 -10.50H16.32Q17.92 -10.50 17.92 -8.90V-0.30"/><path d="M10.66 -3.99h6.16 M9.76 -1.47h7.96 M10.66 -3.99V-0.3 M16.82 -3.99V-0.3"/><path d="M9.56 -9.10l1 -0.2v1.4z" fill="#8a4c3c" stroke="none"/><path d="M18.72 -0.30V-8.90Q18.72 -10.50 20.32 -10.50H25.48Q27.08 -10.50 27.08 -8.90V-0.30"/><path d="M19.82 -3.99h6.16 M18.92 -1.47h7.96 M19.82 -3.99V-0.3 M25.98 -3.99V-0.3"/><path d="M18.72 -9.10l1 -0.2v1.4z" fill="#8a4c3c" stroke="none"/><path d="M27.88 -0.30V-8.90Q27.88 -10.50 29.48 -10.50H34.64Q36.24 -10.50 36.24 -8.90V-0.30"/><path d="M28.98 -3.99h6.16 M28.08 -1.47h7.96 M28.98 -3.99V-0.3 M35.14 -3.99V-0.3"/><path d="M27.88 -9.10l1 -0.2v1.4z" fill="#8a4c3c" stroke="none"/><path d="M37.04 -0.30V-8.90Q37.04 -10.50 38.64 -10.50H43.80Q45.40 -10.50 45.40 -8.90V-0.30"/><path d="M38.14 -3.99h6.16 M37.24 -1.47h7.96 M38.14 -3.99V-0.3 M44.30 -3.99V-0.3"/><path d="M37.04 -9.10l1 -0.2v1.4z" fill="#8a4c3c" stroke="none"/><path d="M46.20 -0.30V-8.90Q46.20 -10.50 47.80 -10.50H52.96Q54.56 -10.50 54.56 -8.90V-0.30"/><path d="M47.30 -3.99h6.16 M46.40 -1.47h7.96 M47.30 -3.99V-0.3 M53.46 -3.99V-0.3"/><path d="M46.20 -9.10l1 -0.2v1.4z" fill="#8a4c3c" stroke="none"/><path d="M55.36 -0.30V-8.90Q55.36 -10.50 56.96 -10.50H62.12Q63.72 -10.50 63.72 -8.90V-0.30"/><path d="M56.46 -3.99h6.16 M55.56 -1.47h7.96 M56.46 -3.99V-0.3 M62.62 -3.99V-0.3"/><path d="M55.36 -9.10l1 -0.2v1.4z" fill="#8a4c3c" stroke="none"/><path d="M64.52 -0.30V-8.90Q64.52 -10.50 66.12 -10.50H71.28Q72.88 -10.50 72.88 -8.90V-0.30"/><path d="M65.62 -3.99h6.16 M64.72 -1.47h7.96 M65.62 -3.99V-0.3 M71.78 -3.99V-0.3"/><path d="M64.52 -9.10l1 -0.2v1.4z" fill="#8a4c3c" stroke="none"/><path d="M73.68 -0.30V-8.90Q73.68 -10.50 75.28 -10.50H80.44Q82.04 -10.50 82.04 -8.90V-0.30"/><path d="M74.78 -3.99h6.16 M73.88 -1.47h7.96 M74.78 -3.99V-0.3 M80.94 -3.99V-0.3"/><path d="M73.68 -9.10l1 -0.2v1.4z" fill="#8a4c3c" stroke="none"/><path d="M82.84 -0.30V-8.90Q82.84 -10.50 84.44 -10.50H89.60Q91.20 -10.50 91.20 -8.90V-0.30"/><path d="M83.94 -3.99h6.16 M83.04 -1.47h7.96 M83.94 -3.99V-0.3 M90.10 -3.99V-0.3"/><path d="M82.84 -9.10l1 -0.2v1.4z" fill="#8a4c3c" stroke="none"/><path d="M0 0H91.60" stroke-width="0.8"/></g><g transform="translate(156.30,165.80) rotate(0)" fill="none" stroke="#8a4c3c" stroke-width="0.62"><path d="M0.40 -0.30V-9.90Q0.40 -11.50 2.00 -11.50H6.70Q8.30 -11.50 8.30 -9.90V-0.30"/><path d="M1.50 -4.37h5.70 M0.60 -1.61h7.50 M1.50 -4.37V-0.3 M7.20 -4.37V-0.3"/><path d="M0.40 -10.10l1 -0.2v1.4z" fill="#8a4c3c" stroke="none"/><path d="M9.10 -0.30V-9.90Q9.10 -11.50 10.70 -11.50H15.40Q17.00 -11.50 17.00 -9.90V-0.30"/><path d="M10.20 -4.37h5.70 M9.30 -1.61h7.50 M10.20 -4.37V-0.3 M15.90 -4.37V-0.3"/><path d="M9.10 -10.10l1 -0.2v1.4z" fill="#8a4c3c" stroke="none"/><path d="M17.80 -0.30V-9.90Q17.80 -11.50 19.40 -11.50H24.10Q25.70 -11.50 25.70 -9.90V-0.30"/><path d="M18.90 -4.37h5.70 M18.00 -1.61h7.50 M18.90 -4.37V-0.3 M24.60 -4.37V-0.3"/><path d="M17.80 -10.10l1 -0.2v1.4z" fill="#8a4c3c" stroke="none"/><path d="M26.50 -0.30V-9.90Q26.50 -11.50 28.10 -11.50H32.80Q34.40 -11.50 34.40 -9.90V-0.30"/><path d="M27.60 -4.37h5.70 M26.70 -1.61h7.50 M27.60 -4.37V-0.3 M33.30 -4.37V-0.3"/><path d="M26.50 -10.10l1 -0.2v1.4z" fill="#8a4c3c" stroke="none"/><path d="M0 0H34.80" stroke-width="0.8"/></g><g transform="translate(213.80,164.60) rotate(-15)" fill="none" stroke="#8a4c3c" stroke-width="0.62"><path d="M0.40 -0.30V-8.90Q0.40 -10.50 2.00 -10.50H7.16Q8.76 -10.50 8.76 -8.90V-0.30"/><path d="M1.50 -3.99h6.16 M0.60 -1.47h7.96 M1.50 -3.99V-0.3 M7.66 -3.99V-0.3"/><path d="M0.40 -9.10l1 -0.2v1.4z" fill="#8a4c3c" stroke="none"/><path d="M9.56 -0.30V-8.90Q9.56 -10.50 11.16 -10.50H16.32Q17.92 -10.50 17.92 -8.90V-0.30"/><path d="M10.66 -3.99h6.16 M9.76 -1.47h7.96 M10.66 -3.99V-0.3 M16.82 -3.99V-0.3"/><path d="M9.56 -9.10l1 -0.2v1.4z" fill="#8a4c3c" stroke="none"/><path d="M18.72 -0.30V-8.90Q18.72 -10.50 20.32 -10.50H25.48Q27.08 -10.50 27.08 -8.90V-0.30"/><path d="M19.82 -3.99h6.16 M18.92 -1.47h7.96 M19.82 -3.99V-0.3 M25.98 -3.99V-0.3"/><path d="M18.72 -9.10l1 -0.2v1.4z" fill="#8a4c3c" stroke="none"/><path d="M27.88 -0.30V-8.90Q27.88 -10.50 29.48 -10.50H34.64Q36.24 -10.50 36.24 -8.90V-0.30"/><path d="M28.98 -3.99h6.16 M28.08 -1.47h7.96 M28.98 -3.99V-0.3 M35.14 -3.99V-0.3"/><path d="M27.88 -9.10l1 -0.2v1.4z" fill="#8a4c3c" stroke="none"/><path d="M37.04 -0.30V-8.90Q37.04 -10.50 38.64 -10.50H43.80Q45.40 -10.50 45.40 -8.90V-0.30"/><path d="M38.14 -3.99h6.16 M37.24 -1.47h7.96 M38.14 -3.99V-0.3 M44.30 -3.99V-0.3"/><path d="M37.04 -9.10l1 -0.2v1.4z" fill="#8a4c3c" stroke="none"/><path d="M46.20 -0.30V-8.90Q46.20 -10.50 47.80 -10.50H52.96Q54.56 -10.50 54.56 -8.90V-0.30"/><path d="M47.30 -3.99h6.16 M46.40 -1.47h7.96 M47.30 -3.99V-0.3 M53.46 -3.99V-0.3"/><path d="M46.20 -9.10l1 -0.2v1.4z" fill="#8a4c3c" stroke="none"/><path d="M55.36 -0.30V-8.90Q55.36 -10.50 56.96 -10.50H62.12Q63.72 -10.50 63.72 -8.90V-0.30"/><path d="M56.46 -3.99h6.16 M55.56 -1.47h7.96 M56.46 -3.99V-0.3 M62.62 -3.99V-0.3"/><path d="M55.36 -9.10l1 -0.2v1.4z" fill="#8a4c3c" stroke="none"/><path d="M64.52 -0.30V-8.90Q64.52 -10.50 66.12 -10.50H71.28Q72.88 -10.50 72.88 -8.90V-0.30"/><path d="M65.62 -3.99h6.16 M64.72 -1.47h7.96 M65.62 -3.99V-0.3 M71.78 -3.99V-0.3"/><path d="M64.52 -9.10l1 -0.2v1.4z" fill="#8a4c3c" stroke="none"/><path d="M73.68 -0.30V-8.90Q73.68 -10.50 75.28 -10.50H80.44Q82.04 -10.50 82.04 -8.90V-0.30"/><path d="M74.78 -3.99h6.16 M73.88 -1.47h7.96 M74.78 -3.99V-0.3 M80.94 -3.99V-0.3"/><path d="M73.68 -9.10l1 -0.2v1.4z" fill="#8a4c3c" stroke="none"/><path d="M82.84 -0.30V-8.90Q82.84 -10.50 84.44 -10.50H89.60Q91.20 -10.50 91.20 -8.90V-0.30"/><path d="M83.94 -3.99h6.16 M83.04 -1.47h7.96 M83.94 -3.99V-0.3 M90.10 -3.99V-0.3"/><path d="M82.84 -9.10l1 -0.2v1.4z" fill="#8a4c3c" stroke="none"/><path d="M0 0H91.60" stroke-width="0.8"/></g><g transform="translate(156.30,181.80) rotate(0)" fill="none" stroke="#8a4c3c" stroke-width="0.62"><path d="M0.40 -0.30V-9.90Q0.40 -11.50 2.00 -11.50H6.70Q8.30 -11.50 8.30 -9.90V-0.30"/><path d="M1.50 -4.37h5.70 M0.60 -1.61h7.50 M1.50 -4.37V-0.3 M7.20 -4.37V-0.3"/><path d="M0.40 -10.10l1 -0.2v1.4z" fill="#8a4c3c" stroke="none"/><path d="M9.10 -0.30V-9.90Q9.10 -11.50 10.70 -11.50H15.40Q17.00 -11.50 17.00 -9.90V-0.30"/><path d="M10.20 -4.37h5.70 M9.30 -1.61h7.50 M10.20 -4.37V-0.3 M15.90 -4.37V-0.3"/><path d="M9.10 -10.10l1 -0.2v1.4z" fill="#8a4c3c" stroke="none"/><path d="M17.80 -0.30V-9.90Q17.80 -11.50 19.40 -11.50H24.10Q25.70 -11.50 25.70 -9.90V-0.30"/><path d="M18.90 -4.37h5.70 M18.00 -1.61h7.50 M18.90 -4.37V-0.3 M24.60 -4.37V-0.3"/><path d="M17.80 -10.10l1 -0.2v1.4z" fill="#8a4c3c" stroke="none"/><path d="M26.50 -0.30V-9.90Q26.50 -11.50 28.10 -11.50H32.80Q34.40 -11.50 34.40 -9.90V-0.30"/><path d="M27.60 -4.37h5.70 M26.70 -1.61h7.50 M27.60 -4.37V-0.3 M33.30 -4.37V-0.3"/><path d="M26.50 -10.10l1 -0.2v1.4z" fill="#8a4c3c" stroke="none"/><path d="M0 0H34.80" stroke-width="0.8"/></g><g transform="translate(213.80,180.60) rotate(-15)" fill="none" stroke="#8a4c3c" stroke-width="0.62"><path d="M0.40 -0.30V-8.90Q0.40 -10.50 2.00 -10.50H7.16Q8.76 -10.50 8.76 -8.90V-0.30"/><path d="M1.50 -3.99h6.16 M0.60 -1.47h7.96 M1.50 -3.99V-0.3 M7.66 -3.99V-0.3"/><path d="M0.40 -9.10l1 -0.2v1.4z" fill="#8a4c3c" stroke="none"/><path d="M9.56 -0.30V-8.90Q9.56 -10.50 11.16 -10.50H16.32Q17.92 -10.50 17.92 -8.90V-0.30"/><path d="M10.66 -3.99h6.16 M9.76 -1.47h7.96 M10.66 -3.99V-0.3 M16.82 -3.99V-0.3"/><path d="M9.56 -9.10l1 -0.2v1.4z" fill="#8a4c3c" stroke="none"/><path d="M18.72 -0.30V-8.90Q18.72 -10.50 20.32 -10.50H25.48Q27.08 -10.50 27.08 -8.90V-0.30"/><path d="M19.82 -3.99h6.16 M18.92 -1.47h7.96 M19.82 -3.99V-0.3 M25.98 -3.99V-0.3"/><path d="M18.72 -9.10l1 -0.2v1.4z" fill="#8a4c3c" stroke="none"/><path d="M27.88 -0.30V-8.90Q27.88 -10.50 29.48 -10.50H34.64Q36.24 -10.50 36.24 -8.90V-0.30"/><path d="M28.98 -3.99h6.16 M28.08 -1.47h7.96 M28.98 -3.99V-0.3 M35.14 -3.99V-0.3"/><path d="M27.88 -9.10l1 -0.2v1.4z" fill="#8a4c3c" stroke="none"/><path d="M37.04 -0.30V-8.90Q37.04 -10.50 38.64 -10.50H43.80Q45.40 -10.50 45.40 -8.90V-0.30"/><path d="M38.14 -3.99h6.16 M37.24 -1.47h7.96 M38.14 -3.99V-0.3 M44.30 -3.99V-0.3"/><path d="M37.04 -9.10l1 -0.2v1.4z" fill="#8a4c3c" stroke="none"/><path d="M46.20 -0.30V-8.90Q46.20 -10.50 47.80 -10.50H52.96Q54.56 -10.50 54.56 -8.90V-0.30"/><path d="M47.30 -3.99h6.16 M46.40 -1.47h7.96 M47.30 -3.99V-0.3 M53.46 -3.99V-0.3"/><path d="M46.20 -9.10l1 -0.2v1.4z" fill="#8a4c3c" stroke="none"/><path d="M55.36 -0.30V-8.90Q55.36 -10.50 56.96 -10.50H62.12Q63.72 -10.50 63.72 -8.90V-0.30"/><path d="M56.46 -3.99h6.16 M55.56 -1.47h7.96 M56.46 -3.99V-0.3 M62.62 -3.99V-0.3"/><path d="M55.36 -9.10l1 -0.2v1.4z" fill="#8a4c3c" stroke="none"/><path d="M64.52 -0.30V-8.90Q64.52 -10.50 66.12 -10.50H71.28Q72.88 -10.50 72.88 -8.90V-0.30"/><path d="M65.62 -3.99h6.16 M64.72 -1.47h7.96 M65.62 -3.99V-0.3 M71.78 -3.99V-0.3"/><path d="M64.52 -9.10l1 -0.2v1.4z" fill="#8a4c3c" stroke="none"/><path d="M73.68 -0.30V-8.90Q73.68 -10.50 75.28 -10.50H80.44Q82.04 -10.50 82.04 -8.90V-0.30"/><path d="M74.78 -3.99h6.16 M73.88 -1.47h7.96 M74.78 -3.99V-0.3 M80.94 -3.99V-0.3"/><path d="M73.68 -9.10l1 -0.2v1.4z" fill="#8a4c3c" stroke="none"/><path d="M82.84 -0.30V-8.90Q82.84 -10.50 84.44 -10.50H89.60Q91.20 -10.50 91.20 -8.90V-0.30"/><path d="M83.94 -3.99h6.16 M83.04 -1.47h7.96 M83.94 -3.99V-0.3 M90.10 -3.99V-0.3"/><path d="M82.84 -9.10l1 -0.2v1.4z" fill="#8a4c3c" stroke="none"/><path d="M0 0H91.60" stroke-width="0.8"/></g><g transform="translate(156.30,197.80) rotate(0)" fill="none" stroke="#8a4c3c" stroke-width="0.62"><path d="M0.40 -0.30V-9.90Q0.40 -11.50 2.00 -11.50H6.70Q8.30 -11.50 8.30 -9.90V-0.30"/><path d="M1.50 -4.37h5.70 M0.60 -1.61h7.50 M1.50 -4.37V-0.3 M7.20 -4.37V-0.3"/><path d="M0.40 -10.10l1 -0.2v1.4z" fill="#8a4c3c" stroke="none"/><path d="M9.10 -0.30V-9.90Q9.10 -11.50 10.70 -11.50H15.40Q17.00 -11.50 17.00 -9.90V-0.30"/><path d="M10.20 -4.37h5.70 M9.30 -1.61h7.50 M10.20 -4.37V-0.3 M15.90 -4.37V-0.3"/><path d="M9.10 -10.10l1 -0.2v1.4z" fill="#8a4c3c" stroke="none"/><path d="M17.80 -0.30V-9.90Q17.80 -11.50 19.40 -11.50H24.10Q25.70 -11.50 25.70 -9.90V-0.30"/><path d="M18.90 -4.37h5.70 M18.00 -1.61h7.50 M18.90 -4.37V-0.3 M24.60 -4.37V-0.3"/><path d="M17.80 -10.10l1 -0.2v1.4z" fill="#8a4c3c" stroke="none"/><path d="M26.50 -0.30V-9.90Q26.50 -11.50 28.10 -11.50H32.80Q34.40 -11.50 34.40 -9.90V-0.30"/><path d="M27.60 -4.37h5.70 M26.70 -1.61h7.50 M27.60 -4.37V-0.3 M33.30 -4.37V-0.3"/><path d="M26.50 -10.10l1 -0.2v1.4z" fill="#8a4c3c" stroke="none"/><path d="M0 0H34.80" stroke-width="0.8"/></g><g transform="translate(213.80,196.60) rotate(-15)" fill="none" stroke="#8a4c3c" stroke-width="0.62"><path d="M0.40 -0.30V-8.90Q0.40 -10.50 2.00 -10.50H7.16Q8.76 -10.50 8.76 -8.90V-0.30"/><path d="M1.50 -3.99h6.16 M0.60 -1.47h7.96 M1.50 -3.99V-0.3 M7.66 -3.99V-0.3"/><path d="M0.40 -9.10l1 -0.2v1.4z" fill="#8a4c3c" stroke="none"/><path d="M9.56 -0.30V-8.90Q9.56 -10.50 11.16 -10.50H16.32Q17.92 -10.50 17.92 -8.90V-0.30"/><path d="M10.66 -3.99h6.16 M9.76 -1.47h7.96 M10.66 -3.99V-0.3 M16.82 -3.99V-0.3"/><path d="M9.56 -9.10l1 -0.2v1.4z" fill="#8a4c3c" stroke="none"/><path d="M18.72 -0.30V-8.90Q18.72 -10.50 20.32 -10.50H25.48Q27.08 -10.50 27.08 -8.90V-0.30"/><path d="M19.82 -3.99h6.16 M18.92 -1.47h7.96 M19.82 -3.99V-0.3 M25.98 -3.99V-0.3"/><path d="M18.72 -9.10l1 -0.2v1.4z" fill="#8a4c3c" stroke="none"/><path d="M27.88 -0.30V-8.90Q27.88 -10.50 29.48 -10.50H34.64Q36.24 -10.50 36.24 -8.90V-0.30"/><path d="M28.98 -3.99h6.16 M28.08 -1.47h7.96 M28.98 -3.99V-0.3 M35.14 -3.99V-0.3"/><path d="M27.88 -9.10l1 -0.2v1.4z" fill="#8a4c3c" stroke="none"/><path d="M37.04 -0.30V-8.90Q37.04 -10.50 38.64 -10.50H43.80Q45.40 -10.50 45.40 -8.90V-0.30"/><path d="M38.14 -3.99h6.16 M37.24 -1.47h7.96 M38.14 -3.99V-0.3 M44.30 -3.99V-0.3"/><path d="M37.04 -9.10l1 -0.2v1.4z" fill="#8a4c3c" stroke="none"/><path d="M46.20 -0.30V-8.90Q46.20 -10.50 47.80 -10.50H52.96Q54.56 -10.50 54.56 -8.90V-0.30"/><path d="M47.30 -3.99h6.16 M46.40 -1.47h7.96 M47.30 -3.99V-0.3 M53.46 -3.99V-0.3"/><path d="M46.20 -9.10l1 -0.2v1.4z" fill="#8a4c3c" stroke="none"/><path d="M55.36 -0.30V-8.90Q55.36 -10.50 56.96 -10.50H62.12Q63.72 -10.50 63.72 -8.90V-0.30"/><path d="M56.46 -3.99h6.16 M55.56 -1.47h7.96 M56.46 -3.99V-0.3 M62.62 -3.99V-0.3"/><path d="M55.36 -9.10l1 -0.2v1.4z" fill="#8a4c3c" stroke="none"/><path d="M64.52 -0.30V-8.90Q64.52 -10.50 66.12 -10.50H71.28Q72.88 -10.50 72.88 -8.90V-0.30"/><path d="M65.62 -3.99h6.16 M64.72 -1.47h7.96 M65.62 -3.99V-0.3 M71.78 -3.99V-0.3"/><path d="M64.52 -9.10l1 -0.2v1.4z" fill="#8a4c3c" stroke="none"/><path d="M73.68 -0.30V-8.90Q73.68 -10.50 75.28 -10.50H80.44Q82.04 -10.50 82.04 -8.90V-0.30"/><path d="M74.78 -3.99h6.16 M73.88 -1.47h7.96 M74.78 -3.99V-0.3 M80.94 -3.99V-0.3"/><path d="M73.68 -9.10l1 -0.2v1.4z" fill="#8a4c3c" stroke="none"/><path d="M82.84 -0.30V-8.90Q82.84 -10.50 84.44 -10.50H89.60Q91.20 -10.50 91.20 -8.90V-0.30"/><path d="M83.94 -3.99h6.16 M83.04 -1.47h7.96 M83.94 -3.99V-0.3 M90.10 -3.99V-0.3"/><path d="M82.84 -9.10l1 -0.2v1.4z" fill="#8a4c3c" stroke="none"/><path d="M0 0H91.60" stroke-width="0.8"/></g><g transform="translate(156.30,213.80) rotate(0)" fill="none" stroke="#8a4c3c" stroke-width="0.62"><path d="M0.40 -0.30V-9.90Q0.40 -11.50 2.00 -11.50H6.70Q8.30 -11.50 8.30 -9.90V-0.30"/><path d="M1.50 -4.37h5.70 M0.60 -1.61h7.50 M1.50 -4.37V-0.3 M7.20 -4.37V-0.3"/><path d="M0.40 -10.10l1 -0.2v1.4z" fill="#8a4c3c" stroke="none"/><path d="M9.10 -0.30V-9.90Q9.10 -11.50 10.70 -11.50H15.40Q17.00 -11.50 17.00 -9.90V-0.30"/><path d="M10.20 -4.37h5.70 M9.30 -1.61h7.50 M10.20 -4.37V-0.3 M15.90 -4.37V-0.3"/><path d="M9.10 -10.10l1 -0.2v1.4z" fill="#8a4c3c" stroke="none"/><path d="M17.80 -0.30V-9.90Q17.80 -11.50 19.40 -11.50H24.10Q25.70 -11.50 25.70 -9.90V-0.30"/><path d="M18.90 -4.37h5.70 M18.00 -1.61h7.50 M18.90 -4.37V-0.3 M24.60 -4.37V-0.3"/><path d="M17.80 -10.10l1 -0.2v1.4z" fill="#8a4c3c" stroke="none"/><path d="M26.50 -0.30V-9.90Q26.50 -11.50 28.10 -11.50H32.80Q34.40 -11.50 34.40 -9.90V-0.30"/><path d="M27.60 -4.37h5.70 M26.70 -1.61h7.50 M27.60 -4.37V-0.3 M33.30 -4.37V-0.3"/><path d="M26.50 -10.10l1 -0.2v1.4z" fill="#8a4c3c" stroke="none"/><path d="M0 0H34.80" stroke-width="0.8"/></g><g transform="translate(213.80,212.60) rotate(-15)" fill="none" stroke="#8a4c3c" stroke-width="0.62"><path d="M0.40 -0.30V-8.90Q0.40 -10.50 2.00 -10.50H7.16Q8.76 -10.50 8.76 -8.90V-0.30"/><path d="M1.50 -3.99h6.16 M0.60 -1.47h7.96 M1.50 -3.99V-0.3 M7.66 -3.99V-0.3"/><path d="M0.40 -9.10l1 -0.2v1.4z" fill="#8a4c3c" stroke="none"/><path d="M9.56 -0.30V-8.90Q9.56 -10.50 11.16 -10.50H16.32Q17.92 -10.50 17.92 -8.90V-0.30"/><path d="M10.66 -3.99h6.16 M9.76 -1.47h7.96 M10.66 -3.99V-0.3 M16.82 -3.99V-0.3"/><path d="M9.56 -9.10l1 -0.2v1.4z" fill="#8a4c3c" stroke="none"/><path d="M18.72 -0.30V-8.90Q18.72 -10.50 20.32 -10.50H25.48Q27.08 -10.50 27.08 -8.90V-0.30"/><path d="M19.82 -3.99h6.16 M18.92 -1.47h7.96 M19.82 -3.99V-0.3 M25.98 -3.99V-0.3"/><path d="M18.72 -9.10l1 -0.2v1.4z" fill="#8a4c3c" stroke="none"/><path d="M27.88 -0.30V-8.90Q27.88 -10.50 29.48 -10.50H34.64Q36.24 -10.50 36.24 -8.90V-0.30"/><path d="M28.98 -3.99h6.16 M28.08 -1.47h7.96 M28.98 -3.99V-0.3 M35.14 -3.99V-0.3"/><path d="M27.88 -9.10l1 -0.2v1.4z" fill="#8a4c3c" stroke="none"/><path d="M37.04 -0.30V-8.90Q37.04 -10.50 38.64 -10.50H43.80Q45.40 -10.50 45.40 -8.90V-0.30"/><path d="M38.14 -3.99h6.16 M37.24 -1.47h7.96 M38.14 -3.99V-0.3 M44.30 -3.99V-0.3"/><path d="M37.04 -9.10l1 -0.2v1.4z" fill="#8a4c3c" stroke="none"/><path d="M46.20 -0.30V-8.90Q46.20 -10.50 47.80 -10.50H52.96Q54.56 -10.50 54.56 -8.90V-0.30"/><path d="M47.30 -3.99h6.16 M46.40 -1.47h7.96 M47.30 -3.99V-0.3 M53.46 -3.99V-0.3"/><path d="M46.20 -9.10l1 -0.2v1.4z" fill="#8a4c3c" stroke="none"/><path d="M55.36 -0.30V-8.90Q55.36 -10.50 56.96 -10.50H62.12Q63.72 -10.50 63.72 -8.90V-0.30"/><path d="M56.46 -3.99h6.16 M55.56 -1.47h7.96 M56.46 -3.99V-0.3 M62.62 -3.99V-0.3"/><path d="M55.36 -9.10l1 -0.2v1.4z" fill="#8a4c3c" stroke="none"/><path d="M64.52 -0.30V-8.90Q64.52 -10.50 66.12 -10.50H71.28Q72.88 -10.50 72.88 -8.90V-0.30"/><path d="M65.62 -3.99h6.16 M64.72 -1.47h7.96 M65.62 -3.99V-0.3 M71.78 -3.99V-0.3"/><path d="M64.52 -9.10l1 -0.2v1.4z" fill="#8a4c3c" stroke="none"/><path d="M73.68 -0.30V-8.90Q73.68 -10.50 75.28 -10.50H80.44Q82.04 -10.50 82.04 -8.90V-0.30"/><path d="M74.78 -3.99h6.16 M73.88 -1.47h7.96 M74.78 -3.99V-0.3 M80.94 -3.99V-0.3"/><path d="M73.68 -9.10l1 -0.2v1.4z" fill="#8a4c3c" stroke="none"/><path d="M82.84 -0.30V-8.90Q82.84 -10.50 84.44 -10.50H89.60Q91.20 -10.50 91.20 -8.90V-0.30"/><path d="M83.94 -3.99h6.16 M83.04 -1.47h7.96 M83.94 -3.99V-0.3 M90.10 -3.99V-0.3"/><path d="M82.84 -9.10l1 -0.2v1.4z" fill="#8a4c3c" stroke="none"/><path d="M0 0H91.60" stroke-width="0.8"/></g><path d="M156 101L163 81 M314 80L330 150" stroke="#f2c860" stroke-width="0.7" fill="none"/><rect x="319.5" y="80" width="2.6" height="166" fill="#c6c6c6" stroke="#9a9a9a" stroke-width="0.4"/><rect x="321.9" y="79" width="6" height="76.5" fill="#fff" stroke="#7070ff" stroke-width="0.7" rx="0.8"/><rect x="321.9" y="160" width="6" height="88.5" fill="#fff" stroke="#7070ff" stroke-width="0.7" rx="0.8"/><path d="M323.5 80V154.5 M323.5 161V247.5" stroke="#1ee4ff" stroke-width="1.0"/><line x1="320" y1="250.5" x2="331" y2="250.5" stroke="#6c6cff" stroke-width="2.8" stroke-linecap="square"/><line x1="320" y1="250.5" x2="331" y2="250.5" stroke="#d4d4ff" stroke-width="1.4999999999999998" stroke-linecap="square"/><path d="M221 250Q270 244 320 228 M221 252.5Q270 246 320 230.5" fill="none" stroke="#6e5a50" stroke-width="0.6"/><path d="M252 251L320 230 M277 243L320 251" stroke="#f2c860" stroke-width="0.6"/><path d="M162 259.5l2.4 -1.9l2.4 1.9l2.4 -1.9l2.4 1.9l2.4 -1.9l2.4 1.9l2.4 -1.9l2.4 1.9l2.4 -1.9l2.4 1.9l2.4 -1.9l2.4 1.9l2.4 -1.9l2.4 1.9l2.4 -1.9l2.4 1.9l2.4 -1.9l2.4 1.9l2.4 -1.9l2.4 1.9l2.4 -1.9l2.4 1.9l2.4 -1.9l2.4 1.9" fill="none" stroke="#7a5448" stroke-width="0.65"/><path d="M156 283.2H221 M156 288.2H221" stroke="#7c7c7c" stroke-width="0.8"/><line x1="331.2" y1="80" x2="331.2" y2="118.5" stroke="#6c6cff" stroke-width="2.0" stroke-linecap="square"/><line x1="331.2" y1="80" x2="331.2" y2="118.5" stroke="#d4d4ff" stroke-width="0.7" stroke-linecap="square"/><line x1="331.2" y1="118.5" x2="331.2" y2="332" stroke="#6c6cff" stroke-width="2.8" stroke-linecap="square"/><line x1="331.2" y1="118.5" x2="331.2" y2="332" stroke="#d4d4ff" stroke-width="1.4999999999999998" stroke-linecap="square"/><line x1="603" y1="118.5" x2="603" y2="231" stroke="#6c6cff" stroke-width="2.8" stroke-linecap="square"/><line x1="603" y1="118.5" x2="603" y2="231" stroke="#d4d4ff" stroke-width="1.4999999999999998" stroke-linecap="square"/><line x1="369.6" y1="118.5" x2="369.6" y2="188.8" stroke="#6c6cff" stroke-width="2.8" stroke-linecap="square"/><line x1="369.6" y1="118.5" x2="369.6" y2="188.8" stroke="#d4d4ff" stroke-width="1.4999999999999998" stroke-linecap="square"/><line x1="410.3" y1="118.5" x2="410.3" y2="253" stroke="#6c6cff" stroke-width="2.8" stroke-linecap="square"/><line x1="410.3" y1="118.5" x2="410.3" y2="253" stroke="#d4d4ff" stroke-width="1.4999999999999998" stroke-linecap="square"/><line x1="432.7" y1="118.5" x2="432.7" y2="146" stroke="#6c6cff" stroke-width="2.8" stroke-linecap="square"/><line x1="432.7" y1="118.5" x2="432.7" y2="146" stroke="#d4d4ff" stroke-width="1.4999999999999998" stroke-linecap="square"/><line x1="410" y1="157.7" x2="442" y2="157.7" stroke="#6c6cff" stroke-width="2.8" stroke-linecap="square"/><line x1="410" y1="157.7" x2="442" y2="157.7" stroke="#d4d4ff" stroke-width="1.4999999999999998" stroke-linecap="square"/><line x1="354" y1="188.8" x2="388" y2="188.8" stroke="#6c6cff" stroke-width="2.8" stroke-linecap="square"/><line x1="354" y1="188.8" x2="388" y2="188.8" stroke="#d4d4ff" stroke-width="1.4999999999999998" stroke-linecap="square"/><line x1="362" y1="204" x2="362" y2="229" stroke="#6c6cff" stroke-width="2.8" stroke-linecap="square"/><line x1="362" y1="204" x2="362" y2="229" stroke="#d4d4ff" stroke-width="1.4999999999999998" stroke-linecap="square"/><line x1="331" y1="229" x2="362" y2="229" stroke="#6c6cff" stroke-width="2.8" stroke-linecap="square"/><line x1="331" y1="229" x2="362" y2="229" stroke="#d4d4ff" stroke-width="1.4999999999999998" stroke-linecap="square"/><line x1="385.5" y1="207.4" x2="444" y2="207.4" stroke="#6c6cff" stroke-width="2.8" stroke-linecap="square"/><line x1="385.5" y1="207.4" x2="444" y2="207.4" stroke="#d4d4ff" stroke-width="1.4999999999999998" stroke-linecap="square"/><line x1="443" y1="194" x2="443" y2="207.4" stroke="#6c6cff" stroke-width="2.8" stroke-linecap="square"/><line x1="443" y1="194" x2="443" y2="207.4" stroke="#d4d4ff" stroke-width="1.4999999999999998" stroke-linecap="square"/><line x1="221" y1="253" x2="331" y2="253" stroke="#6c6cff" stroke-width="3.0" stroke-linecap="square"/><line x1="221" y1="253" x2="331" y2="253" stroke="#d4d4ff" stroke-width="1.7" stroke-linecap="square"/><line x1="221" y1="249" x2="221" y2="289" stroke="#6c6cff" stroke-width="2.8" stroke-linecap="square"/><line x1="221" y1="249" x2="221" y2="289" stroke="#d4d4ff" stroke-width="1.4999999999999998" stroke-linecap="square"/><line x1="493" y1="118.5" x2="493" y2="131" stroke="#6c6cff" stroke-width="2.6" stroke-linecap="square"/><line x1="493" y1="118.5" x2="493" y2="131" stroke="#d4d4ff" stroke-width="1.3" stroke-linecap="square"/><line x1="512" y1="118.5" x2="512" y2="131" stroke="#6c6cff" stroke-width="2.6" stroke-linecap="square"/><line x1="512" y1="118.5" x2="512" y2="131" stroke="#d4d4ff" stroke-width="1.3" stroke-linecap="square"/><line x1="573" y1="229.6" x2="604" y2="229.6" stroke="#6c6cff" stroke-width="2.6" stroke-linecap="square"/><line x1="573" y1="229.6" x2="604" y2="229.6" stroke="#d4d4ff" stroke-width="1.3" stroke-linecap="square"/><line x1="331" y1="143.6" x2="410" y2="143.6" stroke="#7070ff" stroke-width="1.5" stroke-linecap="square"/><line x1="351.7" y1="118.5" x2="351.7" y2="143.6" stroke="#7070ff" stroke-width="1.5" stroke-linecap="square"/><line x1="389.6" y1="118.5" x2="389.6" y2="143.6" stroke="#7070ff" stroke-width="1.5" stroke-linecap="square"/><line x1="331" y1="118.5" x2="604" y2="118.5" stroke="#6c6cff" stroke-width="3.6" stroke-linecap="square"/><line x1="331" y1="118.5" x2="604" y2="118.5" stroke="#d4d4ff" stroke-width="2.3" stroke-linecap="square"/><rect x="489.5" y="155" width="4.5" height="7" fill="#fff" stroke="#7070ff" stroke-width="0.7"/><rect x="571.5" y="155" width="4.5" height="6" fill="#fff" stroke="#7070ff" stroke-width="0.7"/><path d="M331.8 132V143.6 M351.9 135V143.6 M389.4 135V143.6 M409.8 134.6V143.6" stroke="#3a8cff" stroke-width="1.2"/><rect x="536.5" y="117.3" width="31.5" height="2.6" fill="#50c8c8"/><circle cx="410.3" cy="157.7" r="2.6" fill="#d8d8ff" stroke="#7070ff" stroke-width="0.8"/><line x1="221" y1="332.3" x2="330" y2="332.3" stroke="#1ee4ff" stroke-width="2.2"/><line x1="221" y1="332.3" x2="330" y2="332.3" stroke="#b8f6ff" stroke-width="0.9000000000000001"/><line x1="221" y1="307" x2="221" y2="332.3" stroke="#1ee4ff" stroke-width="2.2"/><line x1="221" y1="307" x2="221" y2="332.3" stroke="#b8f6ff" stroke-width="0.9000000000000001"/><line x1="330" y1="375" x2="330" y2="415" stroke="#1ee4ff" stroke-width="2.2"/><line x1="330" y1="375" x2="330" y2="415" stroke="#b8f6ff" stroke-width="0.9000000000000001"/><line x1="581" y1="230" x2="581" y2="423" stroke="#1ee4ff" stroke-width="2.2"/><line x1="581" y1="230" x2="581" y2="423" stroke="#b8f6ff" stroke-width="0.9000000000000001"/><line x1="156" y1="422.8" x2="582" y2="422.8" stroke="#1ee4ff" stroke-width="1.1"/><circle cx="330" cy="346" r="8.5" fill="none" stroke="#1ee4ff" stroke-width="0.7"/><path d="M317 346H343" stroke="#1ee4ff" stroke-width="0.6"/><circle cx="330" cy="365" r="8.5" fill="none" stroke="#1ee4ff" stroke-width="0.7"/><path d="M317 365H343" stroke="#1ee4ff" stroke-width="0.6"/><circle cx="580" cy="346" r="8.5" fill="none" stroke="#1ee4ff" stroke-width="0.7"/><path d="M567 346H593" stroke="#1ee4ff" stroke-width="0.6"/><circle cx="580" cy="370" r="8.5" fill="none" stroke="#1ee4ff" stroke-width="0.7"/><path d="M567 370H593" stroke="#1ee4ff" stroke-width="0.6"/><g stroke="#1ee4ff" stroke-width="1.0" fill="none"><path d="M165.3 422.6q1 -0.2 1.2 -1.2l1 -2.2l1 2.2q0.2 1 1.2 1.2"/><path d="M192.3 422.6q1 -0.2 1.2 -1.2l1 -2.2l1 2.2q0.2 1 1.2 1.2"/><path d="M219.3 422.6q1 -0.2 1.2 -1.2l1 -2.2l1 2.2q0.2 1 1.2 1.2"/><path d="M246.3 422.6q1 -0.2 1.2 -1.2l1 -2.2l1 2.2q0.2 1 1.2 1.2"/><path d="M273.3 422.6q1 -0.2 1.2 -1.2l1 -2.2l1 2.2q0.2 1 1.2 1.2"/><path d="M300.3 422.6q1 -0.2 1.2 -1.2l1 -2.2l1 2.2q0.2 1 1.2 1.2"/><path d="M327.3 422.6q1 -0.2 1.2 -1.2l1 -2.2l1 2.2q0.2 1 1.2 1.2"/><path d="M354.3 422.6q1 -0.2 1.2 -1.2l1 -2.2l1 2.2q0.2 1 1.2 1.2"/><path d="M381.3 422.6q1 -0.2 1.2 -1.2l1 -2.2l1 2.2q0.2 1 1.2 1.2"/><path d="M408.3 422.6q1 -0.2 1.2 -1.2l1 -2.2l1 2.2q0.2 1 1.2 1.2"/><path d="M435.3 422.6q1 -0.2 1.2 -1.2l1 -2.2l1 2.2q0.2 1 1.2 1.2"/><path d="M462.3 422.6q1 -0.2 1.2 -1.2l1 -2.2l1 2.2q0.2 1 1.2 1.2"/><path d="M489.3 422.6q1 -0.2 1.2 -1.2l1 -2.2l1 2.2q0.2 1 1.2 1.2"/><path d="M516.3 422.6q1 -0.2 1.2 -1.2l1 -2.2l1 2.2q0.2 1 1.2 1.2"/><path d="M543.3 422.6q1 -0.2 1.2 -1.2l1 -2.2l1 2.2q0.2 1 1.2 1.2"/><path d="M570.3 422.6q1 -0.2 1.2 -1.2l1 -2.2l1 2.2q0.2 1 1.2 1.2"/><path d="M584 250.8q0.2 1 -1.2 1.2l-2.2 1l2.2 1q1.4 0.2 1.2 1.2"/><path d="M584 276.8q0.2 1 -1.2 1.2l-2.2 1l2.2 1q1.4 0.2 1.2 1.2"/><path d="M584 302.8q0.2 1 -1.2 1.2l-2.2 1l2.2 1q1.4 0.2 1.2 1.2"/><path d="M584 328.8q0.2 1 -1.2 1.2l-2.2 1l2.2 1q1.4 0.2 1.2 1.2"/><path d="M584 354.8q0.2 1 -1.2 1.2l-2.2 1l2.2 1q1.4 0.2 1.2 1.2"/><path d="M584 380.8q0.2 1 -1.2 1.2l-2.2 1l2.2 1q1.4 0.2 1.2 1.2"/><path d="M584 406.8q0.2 1 -1.2 1.2l-2.2 1l2.2 1q1.4 0.2 1.2 1.2"/></g><g fill="none" stroke="#1ee4ff" stroke-width="0.7"><path d="M331.5 134.6A9 9 0 0 1 340.5 143.6"/><path d="M352 135.6A8 8 0 0 1 360 143.6"/><path d="M389.4 135.1A8.5 8.5 0 0 0 380.9 143.6"/><path d="M410 134.6A9 9 0 0 0 401 143.6"/><path d="M432.7 149.7A8 8 0 0 1 440.7 157.7"/><path d="M493 131A18 18 0 0 0 511 118.5"/><path d="M349 191.5A13 13 0 0 0 361.7 203.5 M386 191.5A12.5 12.5 0 0 1 398.4 203.5"/></g><circle cx="167" cy="253" r="3.6" fill="#fff" stroke="#7070ff" stroke-width="0.8"/><circle cx="248.5" cy="253" r="3.6" fill="#fff" stroke="#7070ff" stroke-width="0.8"/><circle cx="330" cy="332" r="3.6" fill="#fff" stroke="#7070ff" stroke-width="0.8"/><circle cx="248.5" cy="332" r="3.6" fill="#fff" stroke="#7070ff" stroke-width="0.8"/><circle cx="411" cy="253" r="3.6" fill="#fff" stroke="#7070ff" stroke-width="0.8"/><circle cx="492" cy="253" r="3.6" fill="#fff" stroke="#7070ff" stroke-width="0.8"/><circle cx="411" cy="332" r="3.6" fill="#fff" stroke="#7070ff" stroke-width="0.8"/><circle cx="492" cy="332" r="3.6" fill="#fff" stroke="#7070ff" stroke-width="0.8"/><circle cx="573" cy="253" r="3.6" fill="#fff" stroke="#7070ff" stroke-width="0.8"/><circle cx="573" cy="332" r="3.6" fill="#fff" stroke="#7070ff" stroke-width="0.8"/><circle cx="167.5" cy="414" r="3.6" fill="#fff" stroke="#7070ff" stroke-width="0.8"/><circle cx="248.5" cy="414" r="3.6" fill="#fff" stroke="#7070ff" stroke-width="0.8"/><circle cx="330" cy="414" r="3.6" fill="#fff" stroke="#7070ff" stroke-width="0.8"/><circle cx="411" cy="414" r="3.6" fill="#fff" stroke="#7070ff" stroke-width="0.8"/><circle cx="492" cy="414" r="3.6" fill="#fff" stroke="#7070ff" stroke-width="0.8"/><circle cx="573" cy="414" r="3.6" fill="#fff" stroke="#7070ff" stroke-width="0.8"/><g fill="none" stroke="#5c5c5c" stroke-width="0.85"><path d="M340.7 121.5Q344 120 347.3 121.5V124H340.7Z"/><path d="M341.2 124Q341 130.5 344 131Q347 130.5 346.8 124"/><path d="M342.5 125.5Q344 129.5 345.5 125.5" stroke-width="0.6"/></g><g fill="none" stroke="#5c5c5c" stroke-width="0.85"><path d="M356.4 121.5Q359.7 120 363.0 121.5V124H356.4Z"/><path d="M356.9 124Q356.7 130.5 359.7 131Q362.7 130.5 362.5 124"/><path d="M358.2 125.5Q359.7 129.5 361.2 125.5" stroke-width="0.6"/></g><g fill="none" stroke="#5c5c5c" stroke-width="0.85"><path d="M377.9 121.5Q381.2 120 384.5 121.5V124H377.9Z"/><path d="M378.4 124Q378.2 130.5 381.2 131Q384.2 130.5 384.0 124"/><path d="M379.7 125.5Q381.2 129.5 382.7 125.5" stroke-width="0.6"/></g><g fill="none" stroke="#5c5c5c" stroke-width="0.85"><path d="M393.7 121.5Q397 120 400.3 121.5V124H393.7Z"/><path d="M394.2 124Q394 130.5 397 131Q400 130.5 399.8 124"/><path d="M395.5 125.5Q397 129.5 398.5 125.5" stroke-width="0.6"/></g><g fill="none" stroke="#707070" stroke-width="0.6"><rect x="372" y="160" width="8" height="22"/><circle cx="376" cy="165.5" r="2.6"/><circle cx="376" cy="175" r="2.6"/><circle cx="365" cy="166" r="1.5" fill="#606060"/><circle cx="365" cy="175" r="1.5" fill="#606060"/><rect x="332" y="214" width="28" height="12"/><circle cx="338.5" cy="221" r="2.8"/><circle cx="351.5" cy="221" r="2.8"/><rect x="412" y="142.7" width="7.5" height="8" rx="2.2"/><path d="M413.5 145l3 2-3 2z" fill="#404040"/></g><circle cx="453.8" cy="94.2" r="12.4" fill="none" stroke="#6f6f30" stroke-width="1.3" stroke-dasharray="0.8 0.5"/><circle cx="453.8" cy="94.2" r="11.2" fill="none" stroke="#9a9a60" stroke-width="0.5" stroke-dasharray="0.6 0.8"/><circle cx="453.8" cy="94.2" r="0.8" fill="#5a5a28"/><g fill="none" stroke="#6a6a30" stroke-width="0.6"><circle cx="339.5" cy="236" r="1.2"/><ellipse cx="342.70" cy="236.00" rx="1.6" ry="1.1" transform="rotate(0 342.70 236.00)"/><ellipse cx="341.50" cy="238.50" rx="1.6" ry="1.1" transform="rotate(51 341.50 238.50)"/><ellipse cx="338.79" cy="239.12" rx="1.6" ry="1.1" transform="rotate(103 338.79 239.12)"/><ellipse cx="336.62" cy="237.39" rx="1.6" ry="1.1" transform="rotate(154 336.62 237.39)"/><ellipse cx="336.62" cy="234.61" rx="1.6" ry="1.1" transform="rotate(206 336.62 234.61)"/><ellipse cx="338.79" cy="232.88" rx="1.6" ry="1.1" transform="rotate(257 338.79 232.88)"/><ellipse cx="341.50" cy="233.50" rx="1.6" ry="1.1" transform="rotate(309 341.50 233.50)"/><circle cx="349" cy="237.5" r="1.2"/><ellipse cx="352.20" cy="237.50" rx="1.6" ry="1.1" transform="rotate(0 352.20 237.50)"/><ellipse cx="351.00" cy="240.00" rx="1.6" ry="1.1" transform="rotate(51 351.00 240.00)"/><ellipse cx="348.29" cy="240.62" rx="1.6" ry="1.1" transform="rotate(103 348.29 240.62)"/><ellipse cx="346.12" cy="238.89" rx="1.6" ry="1.1" transform="rotate(154 346.12 238.89)"/><ellipse cx="346.12" cy="236.11" rx="1.6" ry="1.1" transform="rotate(206 346.12 236.11)"/><ellipse cx="348.29" cy="234.38" rx="1.6" ry="1.1" transform="rotate(257 348.29 234.38)"/><ellipse cx="351.00" cy="235.00" rx="1.6" ry="1.1" transform="rotate(309 351.00 235.00)"/></g><path d="M479 80V117 M495.2 80V117 M510.8 80V117 M479 91H511 M479 107H511" stroke="#8c8c8c" stroke-width="0.6" fill="none"/><g fill="none" stroke="#8a4c3c" stroke-width="0.6"><path d="M456 120V131.6H493 M472 120V131.6 M485.6 120V131.6"/><path d="M533 120V131.6H601 M547 120V131.6 M560.5 120V131.6 M574 120V131.6 M588 120V131.6"/><path d="M518.6 229V154.4H601 M533.4 229V167H601 M518.5 190.5H533.4 M497 218.5H533.4 M497 229H533.4 M497 218.5V253 M485 215V240.5H412 M485 215H497 M412 253H492"/><path d="M441.6 194V182.3H477 M412 193H441.6 M444 197H483Q494 197 494 186V152Q494 149 490 149H478V182 M444 194.8H482Q491.8 194.8 491.8 185V153Q491.8 151.3 489.5 151.3H480.3V182"/><rect x="478.5" y="169" width="8" height="13"/><path d="M479.5 173h6 M479.5 177h6 M482.5 170v11"/><rect x="420" y="196" width="14" height="8"/><path d="M423 197v6 M426 197v6 M429 200h4"/><circle cx="544.5" cy="177" r="3.8"/><circle cx="561.5" cy="177" r="3.8"/><circle cx="577" cy="177" r="3.8"/><circle cx="591.5" cy="177" r="3.8"/><rect x="583" y="199" width="18" height="29"/><path d="M583 204H601 M583 223H601 M592 204V210 M592 217V223"/><rect x="412" y="209" width="23" height="12"/><path d="M417 221L423 229L429 221"/><path d="M235.5 291V278H246.5L248 274.5H256V291Z"/><path d="M295.5 326.5V303H306V311H310V326.5Z"/><circle cx="243" cy="265" r="3.2"/><path d="M238.5 265h1.3 M246.2 265h1.3 M243 260.5v1.3 M240 268l1 -1 M246 268l-1 -1"/><circle cx="288" cy="314" r="3.2"/><path d="M283.5 314h1.3 M291.2 314h1.3 M288 309.5v1.3 M285 317l1 -1 M291 317l-1 -1"/><circle cx="317" cy="318.5" r="3.2"/><path d="M312.5 318.5h1.3 M320.2 318.5h1.3 M317 314.0v1.3 M314 321.5l1 -1 M320 321.5l-1 -1"/><path d="M250 282l3 3 M251.5 281l2 2 M249 283.5l2 2" stroke="#333" stroke-width="0.8"/><path d="M301 317l3 3 M302.5 316l2 2 M300 318.5l2 2" stroke="#333" stroke-width="0.8"/><rect x="321" y="259" width="6" height="21" rx="0.5"/><rect x="321" y="282" width="6" height="21" rx="0.5"/><rect x="321" y="307" width="6" height="21" rx="0.5"/><rect x="266" y="390" width="10" height="18" rx="1"/><path d="M266 399H276"/><rect x="286" y="384" width="24" height="10" rx="2"/><rect x="289" y="402" width="30" height="10" rx="2"/><path d="M299 402V412 M309 402V412"/></g><g transform="translate(353.5,273) rotate(45)" fill="none" stroke="#8a4c3c" stroke-width="0.7"><rect x="-7.3" y="-7.3" width="14.6" height="14.6"/><g transform="rotate(0)"><path d="M-3.6 -7.3V-12.2 M3.6 -7.3V-12.2"/><path d="M-4 -12.2Q0 -14.2 4 -12.2" stroke-width="1.1"/></g><g transform="rotate(90)"><path d="M-3.6 -7.3V-12.2 M3.6 -7.3V-12.2"/><path d="M-4 -12.2Q0 -14.2 4 -12.2" stroke-width="1.1"/></g><g transform="rotate(180)"><path d="M-3.6 -7.3V-12.2 M3.6 -7.3V-12.2"/><path d="M-4 -12.2Q0 -14.2 4 -12.2" stroke-width="1.1"/></g><g transform="rotate(270)"><path d="M-3.6 -7.3V-12.2 M3.6 -7.3V-12.2"/><path d="M-4 -12.2Q0 -14.2 4 -12.2" stroke-width="1.1"/></g></g><g transform="translate(353.5,314) rotate(45)" fill="none" stroke="#8a4c3c" stroke-width="0.7"><rect x="-7.3" y="-7.3" width="14.6" height="14.6"/><g transform="rotate(0)"><path d="M-3.6 -7.3V-12.2 M3.6 -7.3V-12.2"/><path d="M-4 -12.2Q0 -14.2 4 -12.2" stroke-width="1.1"/></g><g transform="rotate(90)"><path d="M-3.6 -7.3V-12.2 M3.6 -7.3V-12.2"/><path d="M-4 -12.2Q0 -14.2 4 -12.2" stroke-width="1.1"/></g><g transform="rotate(180)"><path d="M-3.6 -7.3V-12.2 M3.6 -7.3V-12.2"/><path d="M-4 -12.2Q0 -14.2 4 -12.2" stroke-width="1.1"/></g><g transform="rotate(270)"><path d="M-3.6 -7.3V-12.2 M3.6 -7.3V-12.2"/><path d="M-4 -12.2Q0 -14.2 4 -12.2" stroke-width="1.1"/></g></g><g transform="translate(353.5,398.7) rotate(45)" fill="none" stroke="#8a4c3c" stroke-width="0.7"><rect x="-7.3" y="-7.3" width="14.6" height="14.6"/><g transform="rotate(0)"><path d="M-3.6 -7.3V-12.2 M3.6 -7.3V-12.2"/><path d="M-4 -12.2Q0 -14.2 4 -12.2" stroke-width="1.1"/></g><g transform="rotate(90)"><path d="M-3.6 -7.3V-12.2 M3.6 -7.3V-12.2"/><path d="M-4 -12.2Q0 -14.2 4 -12.2" stroke-width="1.1"/></g><g transform="rotate(180)"><path d="M-3.6 -7.3V-12.2 M3.6 -7.3V-12.2"/><path d="M-4 -12.2Q0 -14.2 4 -12.2" stroke-width="1.1"/></g><g transform="rotate(270)"><path d="M-3.6 -7.3V-12.2 M3.6 -7.3V-12.2"/><path d="M-4 -12.2Q0 -14.2 4 -12.2" stroke-width="1.1"/></g></g><g transform="translate(392,398.7) rotate(45)" fill="none" stroke="#8a4c3c" stroke-width="0.7"><rect x="-7.3" y="-7.3" width="14.6" height="14.6"/><g transform="rotate(0)"><path d="M-3.6 -7.3V-12.2 M3.6 -7.3V-12.2"/><path d="M-4 -12.2Q0 -14.2 4 -12.2" stroke-width="1.1"/></g><g transform="rotate(90)"><path d="M-3.6 -7.3V-12.2 M3.6 -7.3V-12.2"/><path d="M-4 -12.2Q0 -14.2 4 -12.2" stroke-width="1.1"/></g><g transform="rotate(180)"><path d="M-3.6 -7.3V-12.2 M3.6 -7.3V-12.2"/><path d="M-4 -12.2Q0 -14.2 4 -12.2" stroke-width="1.1"/></g><g transform="rotate(270)"><path d="M-3.6 -7.3V-12.2 M3.6 -7.3V-12.2"/><path d="M-4 -12.2Q0 -14.2 4 -12.2" stroke-width="1.1"/></g></g><g transform="translate(433.5,398.7) rotate(45)" fill="none" stroke="#8a4c3c" stroke-width="0.7"><rect x="-7.3" y="-7.3" width="14.6" height="14.6"/><g transform="rotate(0)"><path d="M-3.6 -7.3V-12.2 M3.6 -7.3V-12.2"/><path d="M-4 -12.2Q0 -14.2 4 -12.2" stroke-width="1.1"/></g><g transform="rotate(90)"><path d="M-3.6 -7.3V-12.2 M3.6 -7.3V-12.2"/><path d="M-4 -12.2Q0 -14.2 4 -12.2" stroke-width="1.1"/></g><g transform="rotate(180)"><path d="M-3.6 -7.3V-12.2 M3.6 -7.3V-12.2"/><path d="M-4 -12.2Q0 -14.2 4 -12.2" stroke-width="1.1"/></g><g transform="rotate(270)"><path d="M-3.6 -7.3V-12.2 M3.6 -7.3V-12.2"/><path d="M-4 -12.2Q0 -14.2 4 -12.2" stroke-width="1.1"/></g></g><g transform="translate(471.5,398.7) rotate(45)" fill="none" stroke="#8a4c3c" stroke-width="0.7"><rect x="-7.3" y="-7.3" width="14.6" height="14.6"/><g transform="rotate(0)"><path d="M-3.6 -7.3V-12.2 M3.6 -7.3V-12.2"/><path d="M-4 -12.2Q0 -14.2 4 -12.2" stroke-width="1.1"/></g><g transform="rotate(90)"><path d="M-3.6 -7.3V-12.2 M3.6 -7.3V-12.2"/><path d="M-4 -12.2Q0 -14.2 4 -12.2" stroke-width="1.1"/></g><g transform="rotate(180)"><path d="M-3.6 -7.3V-12.2 M3.6 -7.3V-12.2"/><path d="M-4 -12.2Q0 -14.2 4 -12.2" stroke-width="1.1"/></g><g transform="rotate(270)"><path d="M-3.6 -7.3V-12.2 M3.6 -7.3V-12.2"/><path d="M-4 -12.2Q0 -14.2 4 -12.2" stroke-width="1.1"/></g></g><g transform="translate(511.5,398.7) rotate(45)" fill="none" stroke="#8a4c3c" stroke-width="0.7"><rect x="-7.3" y="-7.3" width="14.6" height="14.6"/><g transform="rotate(0)"><path d="M-3.6 -7.3V-12.2 M3.6 -7.3V-12.2"/><path d="M-4 -12.2Q0 -14.2 4 -12.2" stroke-width="1.1"/></g><g transform="rotate(90)"><path d="M-3.6 -7.3V-12.2 M3.6 -7.3V-12.2"/><path d="M-4 -12.2Q0 -14.2 4 -12.2" stroke-width="1.1"/></g><g transform="rotate(180)"><path d="M-3.6 -7.3V-12.2 M3.6 -7.3V-12.2"/><path d="M-4 -12.2Q0 -14.2 4 -12.2" stroke-width="1.1"/></g><g transform="rotate(270)"><path d="M-3.6 -7.3V-12.2 M3.6 -7.3V-12.2"/><path d="M-4 -12.2Q0 -14.2 4 -12.2" stroke-width="1.1"/></g></g><g transform="translate(556.5,398.7) rotate(45)" fill="none" stroke="#8a4c3c" stroke-width="0.7"><rect x="-7.3" y="-7.3" width="14.6" height="14.6"/><g transform="rotate(0)"><path d="M-3.6 -7.3V-12.2 M3.6 -7.3V-12.2"/><path d="M-4 -12.2Q0 -14.2 4 -12.2" stroke-width="1.1"/></g><g transform="rotate(90)"><path d="M-3.6 -7.3V-12.2 M3.6 -7.3V-12.2"/><path d="M-4 -12.2Q0 -14.2 4 -12.2" stroke-width="1.1"/></g><g transform="rotate(180)"><path d="M-3.6 -7.3V-12.2 M3.6 -7.3V-12.2"/><path d="M-4 -12.2Q0 -14.2 4 -12.2" stroke-width="1.1"/></g><g transform="rotate(270)"><path d="M-3.6 -7.3V-12.2 M3.6 -7.3V-12.2"/><path d="M-4 -12.2Q0 -14.2 4 -12.2" stroke-width="1.1"/></g></g><g transform="translate(430.3,308.6)" fill="none" stroke="#8a4c3c" stroke-width="0.7"><rect x="-7.7" y="-15.7" width="15.4" height="31.4" rx="0.6"/><g transform="translate(-7.70,-7.50) rotate(-90)"><path d="M-3.95 0V-6.80H3.95V0"/><path d="M-4.25 -6.20Q0 -8.40 4.25 -6.20" stroke-width="1.1"/></g><g transform="translate(-7.70,7.50) rotate(-90)"><path d="M-3.95 0V-6.80H3.95V0"/><path d="M-4.25 -6.20Q0 -8.40 4.25 -6.20" stroke-width="1.1"/></g><g transform="translate(7.70,-7.50) rotate(90)"><path d="M-3.95 0V-6.80H3.95V0"/><path d="M-4.25 -6.20Q0 -8.40 4.25 -6.20" stroke-width="1.1"/></g><g transform="translate(7.70,7.50) rotate(90)"><path d="M-3.95 0V-6.80H3.95V0"/><path d="M-4.25 -6.20Q0 -8.40 4.25 -6.20" stroke-width="1.1"/></g><g transform="translate(0.00,-15.70) rotate(0)"><path d="M-3.95 0V-6.80H3.95V0"/><path d="M-4.25 -6.20Q0 -8.40 4.25 -6.20" stroke-width="1.1"/></g><g transform="translate(0.00,15.70) rotate(180)"><path d="M-3.95 0V-6.80H3.95V0"/><path d="M-4.25 -6.20Q0 -8.40 4.25 -6.20" stroke-width="1.1"/></g></g><g transform="translate(469,308.6)" fill="none" stroke="#8a4c3c" stroke-width="0.7"><rect x="-7.7" y="-15.7" width="15.4" height="31.4" rx="0.6"/><g transform="translate(-7.70,-7.50) rotate(-90)"><path d="M-3.95 0V-6.80H3.95V0"/><path d="M-4.25 -6.20Q0 -8.40 4.25 -6.20" stroke-width="1.1"/></g><g transform="translate(-7.70,7.50) rotate(-90)"><path d="M-3.95 0V-6.80H3.95V0"/><path d="M-4.25 -6.20Q0 -8.40 4.25 -6.20" stroke-width="1.1"/></g><g transform="translate(7.70,-7.50) rotate(90)"><path d="M-3.95 0V-6.80H3.95V0"/><path d="M-4.25 -6.20Q0 -8.40 4.25 -6.20" stroke-width="1.1"/></g><g transform="translate(7.70,7.50) rotate(90)"><path d="M-3.95 0V-6.80H3.95V0"/><path d="M-4.25 -6.20Q0 -8.40 4.25 -6.20" stroke-width="1.1"/></g><g transform="translate(0.00,-15.70) rotate(0)"><path d="M-3.95 0V-6.80H3.95V0"/><path d="M-4.25 -6.20Q0 -8.40 4.25 -6.20" stroke-width="1.1"/></g><g transform="translate(0.00,15.70) rotate(180)"><path d="M-3.95 0V-6.80H3.95V0"/><path d="M-4.25 -6.20Q0 -8.40 4.25 -6.20" stroke-width="1.1"/></g></g><g transform="translate(549.2,270.4)" fill="none" stroke="#8a4c3c" stroke-width="0.7"><rect x="-15.4" y="-7" width="30.8" height="14" rx="0.6"/><g transform="translate(-7.50,-7.00) rotate(0)"><path d="M-3.95 0V-6.80H3.95V0"/><path d="M-4.25 -6.20Q0 -8.40 4.25 -6.20" stroke-width="1.1"/></g><g transform="translate(7.50,-7.00) rotate(0)"><path d="M-3.95 0V-6.80H3.95V0"/><path d="M-4.25 -6.20Q0 -8.40 4.25 -6.20" stroke-width="1.1"/></g><g transform="translate(-7.50,7.00) rotate(180)"><path d="M-3.95 0V-6.80H3.95V0"/><path d="M-4.25 -6.20Q0 -8.40 4.25 -6.20" stroke-width="1.1"/></g><g transform="translate(7.50,7.00) rotate(180)"><path d="M-3.95 0V-6.80H3.95V0"/><path d="M-4.25 -6.20Q0 -8.40 4.25 -6.20" stroke-width="1.1"/></g><g transform="translate(-15.40,0.00) rotate(-90)"><path d="M-3.95 0V-6.80H3.95V0"/><path d="M-4.25 -6.20Q0 -8.40 4.25 -6.20" stroke-width="1.1"/></g><g transform="translate(15.40,0.00) rotate(90)"><path d="M-3.95 0V-6.80H3.95V0"/><path d="M-4.25 -6.20Q0 -8.40 4.25 -6.20" stroke-width="1.1"/></g></g><g transform="translate(549.2,311.4)" fill="none" stroke="#8a4c3c" stroke-width="0.7"><rect x="-15.4" y="-7" width="30.8" height="14" rx="0.6"/><g transform="translate(-7.50,-7.00) rotate(0)"><path d="M-3.95 0V-6.80H3.95V0"/><path d="M-4.25 -6.20Q0 -8.40 4.25 -6.20" stroke-width="1.1"/></g><g transform="translate(7.50,-7.00) rotate(0)"><path d="M-3.95 0V-6.80H3.95V0"/><path d="M-4.25 -6.20Q0 -8.40 4.25 -6.20" stroke-width="1.1"/></g><g transform="translate(-7.50,7.00) rotate(180)"><path d="M-3.95 0V-6.80H3.95V0"/><path d="M-4.25 -6.20Q0 -8.40 4.25 -6.20" stroke-width="1.1"/></g><g transform="translate(7.50,7.00) rotate(180)"><path d="M-3.95 0V-6.80H3.95V0"/><path d="M-4.25 -6.20Q0 -8.40 4.25 -6.20" stroke-width="1.1"/></g><g transform="translate(-15.40,0.00) rotate(-90)"><path d="M-3.95 0V-6.80H3.95V0"/><path d="M-4.25 -6.20Q0 -8.40 4.25 -6.20" stroke-width="1.1"/></g><g transform="translate(15.40,0.00) rotate(90)"><path d="M-3.95 0V-6.80H3.95V0"/><path d="M-4.25 -6.20Q0 -8.40 4.25 -6.20" stroke-width="1.1"/></g></g><text x="505.5" y="354.3" font-family="Liberation Serif" font-size="12" fill="#222" textLength="17" lengthAdjust="spacingAndGlyphs">-B</text><rect x="528.3" y="349.3" width="14.5" height="9.5" rx="1.2" fill="none" stroke="#666" stroke-width="0.8"/><path d="M534 351.5L530 354L534 356.5 M537.5 350.5v7.5 M539.5 350.5v7.5 M536 354h5" stroke="#555" stroke-width="0.6" fill="none"/><path d="M248.5 414V518 M156 464.5H600 M156 512H248.5 M255 496V518 M261 496V518 M267.5 496V518 M273.6 496V518 M603.5 464.5V518" stroke="#8a8a8a" stroke-width="0.7" fill="none"/><rect x="248.5" y="439.5" width="337" height="23.8" fill="url(#hatch)" stroke="#8a8a8a" stroke-width="0.6"/><rect x="248.5" y="464.5" width="81.5" height="31.5" fill="url(#vstripe)" stroke="#8a8a8a" stroke-width="0.6"/><path d="M156 413.5A10.5 10.5 0 0 1 156 432.5" stroke="#1ee4ff" stroke-width="0.7" fill="none"/></svg>
<div class="a" style="left:598px;top:233.3px;width:279px;height:270.3px;background:rgba(0,0,0,0.18);"></div>
<div class="a" style="left:599px;top:234.3px;width:277px;height:268.3px;background:#1d2935;"></div>
<div class="a" style="left:599px;top:234.3px;width:277px;height:13px;background:#2f3c48;"></div>
<div class="t" style="left:601.5px;top:239.55px;font-size:4.9px;color:#e6e9ec;"><b>Eigenschaften Standard&nbsp;&nbsp; -B16</b></div>
<svg class="a" style="left:866px;top:237.5px" width="6" height="6" viewBox="0 0 6 6" stroke="#eef0f2" stroke-width="1"><path d="M1 1l4 4M5 1l-4 4"/></svg>
<div class="a" style="left:602.5px;top:250.7px;width:47.7px;height:235px;background:#39454f;"></div>
<div class="a" style="left:603px;top:252px;width:47px;height:9.8px;background:#1a2430;"></div>
<div class="t" style="left:605px;top:255.76px;font-size:4.5px;color:#e0e4e8;">Allgemein</div>
<div class="t" style="left:605px;top:266.58px;font-size:4.5px;color:#e0e4e8;">Kabel</div>
<div class="t" style="left:605px;top:277.40px;font-size:4.5px;color:#e0e4e8;">Sperren</div>
<div class="t" style="left:605px;top:288.22px;font-size:4.5px;color:#e0e4e8;">Anschlüsse</div>
<div class="t" style="left:605px;top:299.04px;font-size:4.5px;color:#e0e4e8;">Zusatzartikel</div>
<div class="t" style="left:605px;top:309.86px;font-size:4.5px;color:#e0e4e8;">Zusatztexte</div>
<div class="t" style="left:605px;top:320.68px;font-size:4.5px;color:#e0e4e8;">Messstellentexte</div>
<div class="t" style="left:605px;top:331.50px;font-size:4.5px;color:#e0e4e8;">Darstellung</div>
<div class="t" style="left:605px;top:342.32px;font-size:4.5px;color:#e0e4e8;">Sonstiges</div>
<div class="a" style="left:653.5px;top:251px;width:217.8px;height:234.7px;background:#2f3c48;"></div>
<div class="t" style="left:659px;top:257.16px;font-size:4.7px;color:#e0e4e8;">Allgemein</div>
<div class="a" style="left:655.5px;top:270.5px;width:213px;height:61px;border:0.5px solid #3a4753;"></div>
<div class="a" style="left:657px;top:268px;width:19px;height:4.5px;background:#2f3c48;"></div>
<div class="t" style="left:658px;top:268.96px;font-size:4.5px;color:#d0d5da;">Ansicht</div>
<div class="t" style="left:659.5px;top:276.03px;font-size:4.55px;color:#e0e4e8;">Referenzkennzeichen</div>
<div class="t" style="left:716px;top:276.03px;font-size:4.55px;color:#e0e4e8;">==ASP02=RAU0001-B16</div>
<div class="a" style="left:659.2px;top:282.4px;width:5.2px;height:5.2px;border:0.7px solid #c3c9cf;border-radius:0.8px;"></div>
<svg class="a" style="left:659.8000000000001px;top:282.8px" width="4.2" height="4.2" viewBox="0 0 4.2 4.2" fill="none" stroke="#e6e9ec" stroke-width="0.6"><path d="M0.5 2.2l1.2 1.3 2.2-3"/></svg>
<div class="t" style="left:667px;top:283.93px;font-size:4.55px;color:#e0e4e8;">BMK</div>
<div class="a" style="left:659.2px;top:292.9px;width:5.2px;height:5.2px;border:0.7px solid #c3c9cf;border-radius:0.8px;"></div>
<div class="t" style="left:667px;top:294.43px;font-size:4.55px;color:#e0e4e8;">Funktionstext</div>
<div class="a" style="left:659.2px;top:303.4px;width:5.2px;height:5.2px;border:0.7px solid #c3c9cf;border-radius:0.8px;"></div>
<div class="t" style="left:667px;top:304.93px;font-size:4.55px;color:#e0e4e8;">Symbolname</div>
<div class="a" style="left:659.2px;top:313.4px;width:5.2px;height:5.2px;border:0.7px solid #c3c9cf;border-radius:0.8px;"></div>
<div class="t" style="left:667px;top:314.93px;font-size:4.55px;color:#e0e4e8;">Artikel</div>
<div class="a" style="left:659.2px;top:323.09999999999997px;width:5.2px;height:5.2px;border:0.7px solid #c3c9cf;border-radius:0.8px;"></div>
<div class="t" style="left:667px;top:324.63px;font-size:4.55px;color:#e0e4e8;">Hersteller</div>
<div class="a" style="left:716px;top:281.4px;width:137.7px;height:7.2px;background:#1c2834;"></div>
<div class="t" style="left:717px;top:283.96px;font-size:4.5px;color:#e6e9ec;">-B16</div>
<div class="a" style="left:855.8px;top:281.2px;width:10.5px;height:7.5px;background:#34414d;border:0.5px solid #3e4a56;"></div>
<div class="a" style="left:859.0999999999999px;top:285.4px;width:0.8px;height:0.8px;background:#aab2ba;"></div>
<div class="a" style="left:860.5999999999999px;top:285.4px;width:0.8px;height:0.8px;background:#aab2ba;"></div>
<div class="a" style="left:862.0999999999999px;top:285.4px;width:0.8px;height:0.8px;background:#aab2ba;"></div>
<div class="a" style="left:716px;top:291.8px;width:13px;height:7.2px;background:#1c2834;"></div>
<div class="a" style="left:730.5px;top:291.8px;width:123.2px;height:7.2px;background:#1c2834;"></div>
<svg class="a" style="left:856.5px;top:291.5px" width="10" height="8" viewBox="0 0 10 8" fill="none" stroke="#d0d5da" stroke-width="0.6"><rect x="1" y="0.8" width="7" height="4.6"/><path d="M1 2.4h7 M4.5 2.4v3"/><path d="M5.5 7.3l3-2.6" stroke-width="0.9"/></svg>
<div class="a" style="left:716px;top:302.2px;width:13px;height:7.2px;background:#1c2834;"></div>
<div class="a" style="left:730.5px;top:302.2px;width:123.2px;height:7.2px;background:#1c2834;"></div>
<div class="t" style="left:731.5px;top:304.76px;font-size:4.5px;color:#e6e9ec;">Bewegungsmelder 24V</div>
<svg class="a" style="left:856.5px;top:302px" width="10" height="8" viewBox="0 0 10 8" fill="none" stroke="#d0d5da" stroke-width="0.6"><rect x="1" y="0.8" width="7" height="4.6"/><path d="M1 2.4h7 M4.5 2.4v3"/><path d="M5.5 7.3l3-2.6" stroke-width="0.9"/></svg>
<div class="a" style="left:716px;top:312.2px;width:137.7px;height:7.2px;background:#1c2834;"></div>
<div class="t" style="left:717px;top:314.76px;font-size:4.5px;color:#e6e9ec;">200112</div>
<div class="a" style="left:855.8px;top:312.2px;width:10.5px;height:7.5px;background:#34414d;border:0.5px solid #3e4a56;"></div>
<div class="a" style="left:859.0999999999999px;top:316.4px;width:0.8px;height:0.8px;background:#aab2ba;"></div>
<div class="a" style="left:860.5999999999999px;top:316.4px;width:0.8px;height:0.8px;background:#aab2ba;"></div>
<div class="a" style="left:862.0999999999999px;top:316.4px;width:0.8px;height:0.8px;background:#aab2ba;"></div>
<div class="a" style="left:716px;top:322.2px;width:150.5px;height:7.2px;background:#1c2834;"></div>
<div class="t" style="left:717px;top:324.66px;font-size:4.5px;color:#e6e9ec;">Loxone</div>
<div class="a" style="left:655.5px;top:331.5px;width:213px;height:50.5px;border:0.5px solid #3a4753;"></div>
<div class="a" style="left:853.5px;top:333px;width:13px;height:48px;background:#35424e;"></div>
<div class="a" style="left:659.2px;top:335.09999999999997px;width:5.2px;height:5.2px;border:0.7px solid #c3c9cf;border-radius:0.8px;"></div>
<div class="t" style="left:667px;top:336.63px;font-size:4.55px;color:#e0e4e8;">KNX</div>
<div class="a" style="left:716px;top:333.9px;width:137.7px;height:7.2px;background:#1c2834;"></div>
<div class="a" style="left:659.2px;top:344.4px;width:5.2px;height:5.2px;border:0.7px solid #c3c9cf;border-radius:0.8px;"></div>
<div class="t" style="left:667px;top:345.93px;font-size:4.55px;color:#e0e4e8;">Stromkreisname</div>
<div class="a" style="left:716px;top:343.2px;width:137.7px;height:7.2px;background:#1c2834;"></div>
<div class="a" style="left:659.2px;top:353.7px;width:5.2px;height:5.2px;border:0.7px solid #c3c9cf;border-radius:0.8px;"></div>
<div class="t" style="left:667px;top:355.23px;font-size:4.55px;color:#e0e4e8;">Stromkreisnummer</div>
<div class="a" style="left:716px;top:352.5px;width:137.7px;height:7.2px;background:#1c2834;"></div>
<div class="a" style="left:659.2px;top:362.99999999999994px;width:5.2px;height:5.2px;border:0.7px solid #c3c9cf;border-radius:0.8px;"></div>
<div class="t" style="left:667px;top:364.53px;font-size:4.55px;color:#e0e4e8;">Sammelschiene</div>
<div class="a" style="left:716px;top:361.79999999999995px;width:137.7px;height:7.2px;background:#1c2834;"></div>
<div class="a" style="left:659.2px;top:372.29999999999995px;width:5.2px;height:5.2px;border:0.7px solid #c3c9cf;border-radius:0.8px;"></div>
<div class="t" style="left:667px;top:373.83px;font-size:4.55px;color:#e0e4e8;">Verteiler</div>
<div class="a" style="left:716px;top:371.09999999999997px;width:137.7px;height:7.2px;background:#1c2834;"></div>
<div class="a" style="left:855.8px;top:343.5px;width:10.5px;height:7.5px;background:#34414d;border:0.5px solid #3e4a56;"></div>
<div class="a" style="left:859.0999999999999px;top:347.7px;width:0.8px;height:0.8px;background:#aab2ba;"></div>
<div class="a" style="left:860.5999999999999px;top:347.7px;width:0.8px;height:0.8px;background:#aab2ba;"></div>
<div class="a" style="left:862.0999999999999px;top:347.7px;width:0.8px;height:0.8px;background:#aab2ba;"></div>
<div class="a" style="left:655.5px;top:383px;width:213px;height:28.5px;border:0.5px solid #3a4753;"></div>
<div class="a" style="left:660px;top:384.9px;width:5.2px;height:5.2px;border:0.7px solid #c3c9cf;border-radius:0.8px;"></div>
<div class="t" style="left:668px;top:386.46px;font-size:4.5px;color:#e0e4e8;">Einbauhöhe</div>
<div class="a" style="left:659.5px;top:391.5px;width:113px;height:18px;border:0.5px solid #3a4753;"></div>
<div class="a" style="left:662.8px;top:393px;width:5.4px;height:5.4px;border:0.7px solid #c9ced3;border-radius:50%;"></div>
<div class="a" style="left:664.3px;top:394.5px;width:2.4px;height:2.4px;background:#e6e9ec;border-radius:50%;"></div>
<div class="t" style="left:671px;top:394.26px;font-size:4.5px;color:#e0e4e8;">Aktivieren Installationszone</div>
<div class="a" style="left:662.6px;top:400.6px;width:106px;height:7.8px;background:#1c2834;"></div>
<div class="t" style="left:665px;top:403.26px;font-size:4.5px;color:#e6e9ec;">Obere waagrechte Zone (220 cm)</div>
<svg class="a" style="left:763.5px;top:403.5px" width="4" height="3" viewBox="0 0 4 3"><path d="M0 0.3h3.4l-1.7 2z" fill="#e6e9ec"/></svg>
<div class="a" style="left:774px;top:388.5px;width:89px;height:22px;border:0.5px solid #3a4753;"></div>
<div class="a" style="left:776.3px;top:393px;width:5.4px;height:5.4px;border:0.7px solid #c9ced3;border-radius:50%;"></div>
<div class="t" style="left:783px;top:394.26px;font-size:4.5px;color:#e0e4e8;">Aktivieren Höhe in cm</div>
<div class="a" style="left:784px;top:400.5px;width:15.5px;height:7.3px;background:#27333f;"></div>
<div class="t" style="left:791.5px;top:403.06px;font-size:4.5px;color:#6f7a84;">220</div>
<div class="a" style="left:655.5px;top:419px;width:213px;height:12.5px;border:0.5px solid #3a4753;"></div>
<div class="a" style="left:658px;top:416px;width:45px;height:4.5px;background:#2f3c48;"></div>
<div class="t" style="left:659.5px;top:417.06px;font-size:4.5px;color:#d0d5da;">Abmessung in cm</div>
<div class="t" style="left:663px;top:425.46px;font-size:4.5px;color:#e0e4e8;">Länge</div>
<div class="a" style="left:687.2px;top:423px;width:25px;height:7px;background:#1c2834;"></div>
<div class="t" style="left:689px;top:425.46px;font-size:4.5px;color:#6f7a84;">84</div>
<div class="t" style="left:715.5px;top:425.46px;font-size:4.5px;color:#e0e4e8;">Breite</div>
<div class="a" style="left:744px;top:423px;width:26px;height:7px;background:#1c2834;"></div>
<div class="t" style="left:745.5px;top:425.46px;font-size:4.5px;color:#6f7a84;">52</div>
<div class="t" style="left:774px;top:425.46px;font-size:4.5px;color:#e0e4e8;">Tiefe</div>
<div class="a" style="left:808.5px;top:423px;width:25.2px;height:7px;background:#1c2834;"></div>
<div class="t" style="left:810px;top:425.46px;font-size:4.5px;color:#e6e9ec;">0</div>
<div class="a" style="left:659px;top:438.5px;width:46px;height:9px;border:0.5px solid #3a4753;"></div>
<div class="a" style="left:659.5px;top:435px;width:45px;height:4.5px;background:#2f3c48;"></div>
<div class="t" style="left:660px;top:436.26px;font-size:4.5px;color:#e0e4e8;">Skalierungsfaktor</div>
<div class="t" style="left:660px;top:442.56px;font-size:4.5px;color:#e6e9ec;">8</div>
<div class="a" style="left:722.4px;top:437px;width:42.2px;height:9.5px;background:#2b3844;border:0.6px solid #9aa2aa;border-radius:0.8px;"></div>
<div class="t" style="left:729.5px;top:440.46px;font-size:4.5px;color:#e6e9ec;">Datenpunkte</div>
<div class="a" style="left:712.3px;top:474px;width:9.7px;height:9.5px;background:#8a6fc4;"></div>
<div class="a" style="left:725.6px;top:476.5px;width:8.2px;height:5px;border:0.7px solid #dfe3e6;border-radius:1.2px;"></div>
<div class="t" style="left:661px;top:480.76px;font-size:4.5px;color:#e0e4e8;">Kurzinfo</div>
<div class="a" style="left:783.5px;top:489.8px;width:41.2px;height:8.2px;background:#2c3844;"></div>
<div class="t" style="left:800.5px;top:492.71px;font-size:4.6px;color:#e6e9ec;"><u>O</u>K</div>
<div class="a" style="left:829.6px;top:489.8px;width:41.3px;height:8.2px;background:#2c3844;"></div>
<div class="t" style="left:838.5px;top:492.71px;font-size:4.6px;color:#e6e9ec;"><u>A</u>bbrechen</div>
<div class="a" style="left:889px;top:56px;width:2px;height:465px;background:#1a2532;"></div>
<div class="a" style="left:888.8px;top:281px;width:1.9px;height:15.5px;background:#57534e;"></div>
<div class="a" style="left:891px;top:56px;width:133px;height:465px;background:#2e3b47;"></div>
<div class="a" style="left:891px;top:57px;width:133px;height:12.5px;background:#3a4652;"></div>
<div class="t" style="left:895.5px;top:61.96px;font-size:4.7px;color:#d6dade;">Vorschau</div>
<svg class="a" style="left:994px;top:59.7px" width="28" height="7" viewBox="0 0 28 7" fill="none" stroke="#d6dade" stroke-width="0.8"><path d="M1.5 2l2 2 2-2"/><path d="M13.8 1.2v3M12.6 1.2h2.4M12.8 3.2h2M13.8 4.2v2"/><path d="M22.5 1.2l4 4M26.5 1.2l-4 4" stroke-width="0.9"/></svg>
<div class="a" style="left:892.5px;top:69.5px;width:130px;height:70px;background:#2b3844;"></div>
<div class="a" style="left:894.4px;top:71.5px;width:125.8px;height:65.8px;background:#ffffff;"></div>
<svg class="a" style="left:894.4px;top:71.5px" width="126" height="66" viewBox="894.4 71.5 126 66" fill="none" stroke="#3a3a3a" stroke-width="0.7"><rect x="933" y="78.8" width="80.5" height="50.2" stroke="#555"/><path d="M938 103.5L984.5 84.5 M938 103.5L984.5 123"/><path d="M975.5 83.5Q986 103.5 976 124"/><path d="M990 81.5L1004 79.5L1002 91.5Z M1004 98L992 104L1004 110.5Z M990 116L1004 116.5L996 126Z"/><path d="M938 123H948L956 115.5 M957.5 123H970"/><circle cx="975" cy="104" r="0.5" fill="#f08080" stroke="none"/><path d="M897.5 101.5l1.5 1" stroke="#222" stroke-width="0.9"/></svg>
<div class="a" style="left:891px;top:139.5px;width:133px;height:5px;background:#243039;"></div>
<div class="a" style="left:950px;top:141.5px;width:16px;height:1px;background:#5a5048;"></div>
<div class="a" style="left:891px;top:144.5px;width:133px;height:12.7px;background:#34414d;"></div>
<div class="t" style="left:895.3px;top:149.16px;font-size:4.7px;color:#d6dade;">Symbol-Explorer</div>
<svg class="a" style="left:994px;top:147.2px" width="28" height="7" viewBox="0 0 28 7" fill="none" stroke="#d6dade" stroke-width="0.8"><path d="M1.5 2l2 2 2-2"/><path d="M13.8 1.2v3M12.6 1.2h2.4M12.8 3.2h2M13.8 4.2v2"/><path d="M22.5 1.2l4 4M26.5 1.2l-4 4" stroke-width="0.9"/></svg>
<div class="a" style="left:891px;top:157.2px;width:133px;height:16px;background:#2f3c48;"></div>
<svg class="a" style="left:898px;top:164px" width="4" height="3" viewBox="0 0 4 3"><path d="M0 0.2h3.6l-1.8 2.2z" fill="#d6dade"/></svg>
<svg class="a" style="left:907px;top:160.5px" width="46" height="9" viewBox="0 0 46 9" fill="none" stroke="#b8bfc6" stroke-width="0.7"><path d="M2 1.5h6M2 3h6M2 4.5h4M3.5 6h5v2h-5z"/><rect x="13" y="2" width="7" height="5" stroke="#6d7780"/><path d="M14 3.5h5" stroke="#6d7780"/><path d="M28 2.2a2.8 2.8 0 102.3 .6"/><path d="M29.5 1.3h2.2l-1.1 1.4z" fill="#b8bfc6"/><circle cx="41.5" cy="4.5" r="3" stroke="#6d7780"/></svg>
<div class="a" style="left:955.3px;top:159.5px;width:0.8px;height:11px;background:#46525d;"></div>
<div class="a" style="left:958.5px;top:159.5px;width:12.5px;height:10.5px;background:#34414d;"></div>
<div class="t" style="left:959.5px;top:163.51px;font-size:4.6px;color:#d6dade;">Filter</div>
<div class="a" style="left:973px;top:159.5px;width:51px;height:10.5px;background:#1e2a36;"></div>
<div class="a" style="left:977.5px;top:162.8px;width:5px;height:3.8px;background:#f2f4f6;border-radius:0.3px;"></div>
<div class="t" style="left:986px;top:163.51px;font-size:4.6px;color:#d6dade;">Dokument</div>
<div class="a" style="left:893.5px;top:173px;width:130.5px;height:10.5px;background:#1e2a36;"></div>
<div class="t" style="left:895.3px;top:176.56px;font-size:4.5px;color:#d6dade;">bewegungs</div>
<svg class="a" style="left:1013px;top:174.5px" width="7" height="8" viewBox="0 0 7 8" fill="none" stroke="#c9ced3" stroke-width="0.6"><rect x="0.5" y="0.5" width="4.5" height="5.5"/><path d="M1.2 2h3M1.2 3.5h3"/><circle cx="5.5" cy="6.5" r="1"/></svg>
<div class="a" style="left:894px;top:184px;width:127px;height:152px;background:#e9ecef;border:0.6px solid #8a939b;"></div>
<div class="a" style="left:895px;top:185px;width:125px;height:6.8px;background:#1a2633;"></div>
<div class="t" style="left:898px;top:187.36px;font-size:4.5px;color:#d6dade;">Bibliothek</div>
<div class="t" style="left:950px;top:187.36px;font-size:4.5px;color:#d6dade;">Symbol</div>
<div class="t" style="left:1003.3px;top:187.36px;font-size:4.5px;color:#d6dade;">Kennung</div>
<div class="a" style="left:895px;top:192.29999999999998px;width:125px;height:6.6px;background:#eef0f2;"></div>
<div class="t" style="left:898px;top:194.36px;font-size:4.5px;color:#262626;">KNX_Installation</div>
<div class="t" style="left:950px;top:194.36px;font-size:4.5px;color:#262626;">Bewegungssensor</div>
<div class="t" style="left:1003.3px;top:194.36px;font-size:4.5px;color:#262626;">A</div>
<div class="a" style="left:895px;top:199.1px;width:125px;height:6.6px;background:#e6e9ec;"></div>
<div class="t" style="left:898px;top:201.16px;font-size:4.5px;color:#262626;">Schalter-Steckdosen</div>
<div class="t" style="left:950px;top:201.16px;font-size:4.5px;color:#262626;">Bewegungsmelder</div>
<div class="t" style="left:1003.3px;top:201.16px;font-size:4.5px;color:#262626;">B</div>
<div class="a" style="left:895px;top:205.89999999999998px;width:125px;height:6.6px;background:#eef0f2;"></div>
<div class="t" style="left:898px;top:207.96px;font-size:4.5px;color:#262626;">Schalter-Steckdosen</div>
<div class="t" style="left:950px;top:207.96px;font-size:4.5px;color:#262626;">Bewegungswächter</div>
<div class="t" style="left:1003.3px;top:207.96px;font-size:4.5px;color:#262626;">B</div>
<div class="a" style="left:948.8px;top:192px;width:0.5px;height:138px;background:#dfe3e6;"></div>
<div class="a" style="left:1001.8px;top:192px;width:0.5px;height:138px;background:#dfe3e6;"></div>
<div class="a" style="left:895px;top:329.5px;width:125px;height:5.8px;background:#f3f4f5;"></div>
<div class="a" style="left:902.5px;top:330.8px;width:91px;height:1.6px;background:#b0b4b8;"></div>
<div class="t" style="left:897px;top:338.06px;font-size:4.5px;color:#d6dade;">Gefunden 3 von 9637</div>
<div class="a" style="left:893px;top:344.5px;width:131px;height:9px;background:#2e3b47;"></div>
<div class="a" style="left:895px;top:345px;width:20.5px;height:8px;background:#1d2935;"></div>
<div class="t" style="left:896.5px;top:347.76px;font-size:4.5px;color:#d6dade;">Bibliothek</div>
<div class="a" style="left:917.5px;top:345px;width:20.5px;height:8px;background:#1d2935;"></div>
<div class="t" style="left:919.0px;top:347.76px;font-size:4.5px;color:#d6dade;">Kennung</div>
<div class="a" style="left:939.8px;top:345px;width:21px;height:8px;background:#1d2935;"></div>
<div class="t" style="left:941.3px;top:347.76px;font-size:4.5px;color:#d6dade;">Kategorie</div>
<div class="a" style="left:962px;top:345.8px;width:19.5px;height:8px;background:#26323e;"></div>
<div class="t" style="left:963.5px;top:348.56px;font-size:4.5px;color:#d6dade;">Suchen</div>
<div class="a" style="left:982.5px;top:345px;width:21px;height:8px;background:#1d2935;"></div>
<div class="t" style="left:984.0px;top:347.76px;font-size:4.5px;color:#d6dade;">Favoriten</div>
<div class="a" style="left:891px;top:354.5px;width:133px;height:9.8px;background:#26323d;"></div>
<div class="a" style="left:893px;top:355px;width:43px;height:9px;background:#1d2935;"></div>
<div class="t" style="left:899.5px;top:358.56px;font-size:4.5px;color:#d6dade;">Symbol-Explorer</div>
<div class="t" style="left:943.5px;top:358.56px;font-size:4.5px;color:#d6dade;">Makro-Explorer</div>
<div class="t" style="left:985.3px;top:358.56px;font-size:4.5px;color:#d6dade;">Material-Explorer</div>
<div class="a" style="left:894.5px;top:356.5px;width:3.2px;height:5.5px;border:0.5px solid #c9ced3;"></div>
<div class="a" style="left:937px;top:356.5px;width:3.2px;height:5.5px;border:0.5px solid #c9ced3;"></div>
<div class="a" style="left:979.5px;top:356.5px;width:3.2px;height:5.5px;border:0.5px solid #c9ced3;"></div>
<div class="a" style="left:891px;top:364.3px;width:133px;height:5px;background:#1f2b36;"></div>
<div class="a" style="left:950px;top:366.5px;width:16px;height:1px;background:#5a5048;"></div>
<div class="a" style="left:891px;top:369.3px;width:133px;height:11.5px;background:#34414d;"></div>
<div class="t" style="left:895.3px;top:373.46px;font-size:4.7px;color:#d6dade;">Installationszonen</div>
<svg class="a" style="left:994px;top:371.5px" width="28" height="7" viewBox="0 0 28 7" fill="none" stroke="#d6dade" stroke-width="0.8"><path d="M1.5 2l2 2 2-2"/><path d="M13.8 1.2v3M12.6 1.2h2.4M12.8 3.2h2M13.8 4.2v2"/><path d="M22.5 1.2l4 4M26.5 1.2l-4 4" stroke-width="0.9"/></svg>
<div class="a" style="left:891px;top:380.8px;width:133px;height:140.2px;background:#2e3b47;"></div>
<div class="a" style="left:893.3px;top:382px;width:127.5px;height:138.5px;background:#303d49;border:0.6px solid #3c4854;"></div>
<div class="a" style="left:899.8px;top:389.7px;width:5.6px;height:5.6px;border:0.7px solid #c9ced3;border-radius:50%;"></div>
<div class="a" style="left:899.8px;top:399.2px;width:5.6px;height:5.6px;background:#8d959d;border-radius:50%;"></div>
<div class="a" style="left:901.6px;top:401px;width:2px;height:2px;background:#eef0f2;border-radius:50%;"></div>
<div class="a" style="left:914px;top:389.2px;width:23.5px;height:7.5px;background:#1e2a36;"></div>
<div class="a" style="left:919.1px;top:401px;width:0.9px;height:96px;background:#f4f5f6;"></div>
<div class="a" style="left:917px;top:421.5px;width:4.5px;height:3.5px;border:0.5px solid #c9ced3;border-radius:1px;"></div>
<div class="t" style="left:922.3px;top:402.03px;font-size:5.9px;color:#f2f4f6;font-weight:bold;font-family:"Liberation Mono",monospace;">-276&nbsp;cm</div>
<div class="t" style="left:922.3px;top:406.73px;font-size:5.9px;color:#f2f4f6;font-weight:bold;font-family:"Liberation Mono",monospace;">-263&nbsp;cm</div>
<div class="t" style="left:922.3px;top:411.23px;font-size:5.9px;color:#f2f4f6;font-weight:bold;font-family:"Liberation Mono",monospace;">-250&nbsp;cm</div>
<div class="t" style="left:922.3px;top:421.43px;font-size:5.9px;color:#f2f4f6;font-weight:bold;font-family:"Liberation Mono",monospace;">-220&nbsp;cm</div>
<div class="t" style="left:922.3px;top:431.03px;font-size:5.9px;color:#f2f4f6;font-weight:bold;font-family:"Liberation Mono",monospace;">-190&nbsp;cm</div>
<div class="t" style="left:922.3px;top:456.53px;font-size:5.9px;color:#f2f4f6;font-weight:bold;font-family:"Liberation Mono",monospace;">-115&nbsp;cm</div>
<div class="t" style="left:922.3px;top:459.33px;font-size:5.9px;color:#f2f4f6;font-weight:bold;font-family:"Liberation Mono",monospace;">-105&nbsp;cm</div>
<div class="t" style="left:922.3px;top:467.73px;font-size:5.9px;color:#f2f4f6;font-weight:bold;font-family:"Liberation Mono",monospace;">-&nbsp;75&nbsp;cm</div>
<div class="t" style="left:922.3px;top:483.03px;font-size:5.9px;color:#f2f4f6;font-weight:bold;font-family:"Liberation Mono",monospace;">-&nbsp;30&nbsp;cm</div>
<div class="t" style="left:922.3px;top:492.03px;font-size:5.9px;color:#f2f4f6;font-weight:bold;font-family:"Liberation Mono",monospace;">-&nbsp;&nbsp;0&nbsp;cm</div>
<div class="a" style="left:910px;top:507px;width:9.5px;height:9px;background:#35424e;"></div>
<div class="a" style="left:920.8px;top:507px;width:9.5px;height:9px;background:#35424e;"></div>
<svg class="a" style="left:910px;top:507px" width="21" height="9" viewBox="0 0 21 9" fill="none" stroke="#8d959d" stroke-width="0.7"><path d="M2.8 4.5l2-2 2 2M2.8 6.5l2-2 2 2 M13.5 2.5l2 2 2-2M13.5 4.5l2 2 2-2"/></svg>
</body></html>
